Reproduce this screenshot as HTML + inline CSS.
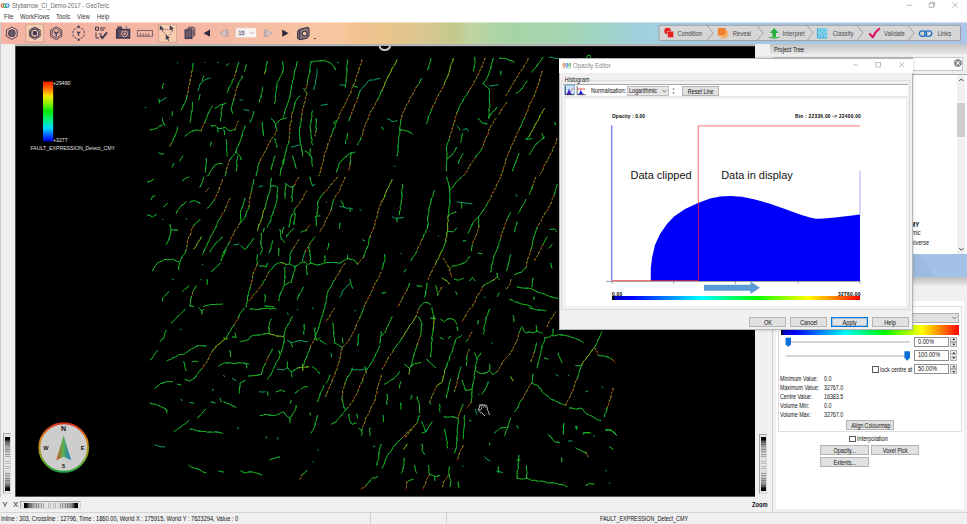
<!DOCTYPE html>
<html><head><meta charset="utf-8"><title>Stybarrow_CI_Demo-2017 - GeoTeric</title>
<style>
html,body{margin:0;padding:0;background:#f0f0f0;}
body{width:967px;height:524px;overflow:hidden;position:relative;font-family:"Liberation Sans","DejaVu Sans",sans-serif;color:#000;}
.a{position:absolute;box-sizing:border-box;}
.t{position:absolute;white-space:nowrap;line-height:1;font-size:5.6px;color:#111;transform-origin:0 0;}
.btn{position:absolute;background:#e1e1e1;border:1px solid #b4b4b4;box-sizing:border-box;text-align:center;font-size:5.6px;color:#111;white-space:nowrap;}
.spin{position:absolute;background:#fff;border:1px solid #8e8e8e;box-sizing:border-box;font-size:5.6px;color:#111;white-space:nowrap;}
svg{position:absolute;left:0;top:0;overflow:visible;}
</style></head>
<body>
<div class="a" style="left:0px;top:0px;width:967px;height:22px;background:#fff;"></div>
<svg width="12" height="11" viewBox="0 0 12 11"><g stroke-width="1.1" fill="#fff"><circle cx="2.9" cy="5.5" r="1.7" stroke="#f04a28"/><circle cx="5.1" cy="5.7" r="1.7" stroke="#38b838"/><circle cx="7.3" cy="5.5" r="1.7" stroke="#1a80d8"/></g></svg>
<div class="t" style="left:11.8px;top:3.06px;font-size:7.08px;color:#6a6a6a;transform:scaleX(0.820);">Stybarrow_CI_Demo-2017 - GeoTeric</div>
<div class="t" style="left:3.6px;top:13.14px;font-size:7.32px;color:#333;transform:scaleX(0.820);">File</div>
<div class="t" style="left:20px;top:13.14px;font-size:7.32px;color:#333;transform:scaleX(0.820);">WorkFlows</div>
<div class="t" style="left:56px;top:13.14px;font-size:7.32px;color:#333;transform:scaleX(0.820);">Tools</div>
<div class="t" style="left:77px;top:13.14px;font-size:7.32px;color:#333;transform:scaleX(0.820);">View</div>
<div class="t" style="left:96.6px;top:13.14px;font-size:7.32px;color:#333;transform:scaleX(0.820);">Help</div>
<svg width="967" height="12" viewBox="0 0 967 12"><g stroke="#858585" stroke-width="0.55" fill="none"><path d="M906.5,5.3h5.6"/><rect x="929.2" y="3.2" width="4.2" height="4.2"/><path d="M930.4,3.2v-1h4.2v4.2h-1.2"/><path d="M952.5,2.6l5.2,5.2M957.7,2.6l-5.2,5.2"/></g></svg>
<div class="a" style="left:0px;top:22px;width:967px;height:22.3px;background:linear-gradient(90deg,#f4b3a3 0px,#f5b8a4 213px,#f7c2a2 300px,#f8c8a0 340px,#f4c291 352px,#e8c48c 390px,#d8c890 425px,#c3c98b 456px,#c0d4a0 470px,#a8d4a4 503px,#a4d4b0 560px,#a0d4c4 600px,#a0d0dc 636px,#a2cfe4 680px,#a8c8e8 780px,#acc4e8 967px);"></div>
<div class="a" style="left:0px;top:22px;width:967px;height:1px;background:rgba(255,255,255,0.45);"></div>
<div class="a" style="left:0px;top:44.2px;width:967px;height:1.9px;background:#ececec;"></div>
<div class="a" style="left:15.3px;top:44.1px;width:739.8px;height:2px;background:#b6b6b6;"></div>
<svg width="967" height="46" viewBox="0 0 967 46">
<rect x="26" y="24.2" width="17.4" height="17.8" fill="#fbd3b4" fill-opacity="0.75" stroke="#7a6a5a" stroke-opacity="0.55" stroke-width="0.5"/>
<rect x="158.8" y="24.2" width="17.6" height="17.8" fill="#fbd3b4" fill-opacity="0.75" stroke="#7a6a5a" stroke-opacity="0.55" stroke-width="0.5"/>
<g fill="none" stroke="#3b3850" stroke-width="0.9">
<polygon points="11.8,27.0 17.2,30.1 17.2,36.3 11.8,39.4 6.4,36.3 6.4,30.1"/>
<circle cx="11.8" cy="33.2" r="3.4" fill="#3b3850" fill-opacity="0.75"/>
<polygon points="34.8,27.0 40.2,30.1 40.2,36.3 34.8,39.4 29.4,36.3 29.4,30.1"/>
<circle cx="34.8" cy="33.2" r="4.2" stroke-width="1.4"/>
<rect x="33.2" y="31.6" width="3.2" height="3.2" fill="#3b3850"/>
<polygon points="56.2,26.8 61.7,30.0 61.7,36.4 56.2,39.6 50.7,36.4 50.7,30.0"/>
<polygon points="56.2,28.6 60.2,30.9 60.2,35.5 56.2,37.8 52.2,35.5 52.2,30.9" stroke-width="0.7"/>
<path d="M53.8,31.4l2.4,2.2l2.4,-2.2M56.2,33.6v3" stroke-width="1.3"/>
<polygon points="78.6,26.8 84.1,30.0 84.1,36.4 78.6,39.6 73.1,36.4 73.1,30.0" stroke-dasharray="2.2 1.4"/>
<path d="M76.9,31.6l1.7,1.8l1.7,-1.8M78.6,33.4v2.6" stroke-width="1.1"/>
<circle cx="78.6" cy="26.6" r="0.7" fill="#3b3850"/><circle cx="78.6" cy="39.9" r="0.7" fill="#3b3850"/>
<path d="M95.5,27.2h3v3h-3zM100,28h5.5M100,30h4M96,32.5v5.5h3.2M99,34h3" stroke-width="1"/>
<path d="M100.2,35.6l2.2,2.4l4.6,-5.6" stroke-width="1.9"/>
<path d="M116.6,29.4h13v8.6h-13zM118.2,29.2v-2h3v2" stroke-width="1.3" fill="#3b3850" fill-opacity="0.8"/>
<circle cx="124.6" cy="33.8" r="2.9" stroke-width="1" stroke="#f4b5a3" fill="#3b3850"/><circle cx="124.6" cy="33.8" r="1.3" stroke="none" fill="#f4b5a3"/>
<path d="M117.6,31v6" stroke-width="1.4"/>
<path d="M125.8,26.4l0.8,1.2l0.8,-1.2" stroke-width="0.6"/>
<rect x="137.4" y="30.6" width="15.2" height="5.6" stroke-width="0.8" stroke-opacity="0.8"/>
<path d="M140.5,36v-2.6M143.2,36v-2.6M145.9,36v-2.6M148.6,36v-2.6" stroke-width="0.7"/>
<path d="M162.5,29.5h9M162.8,30.5l4.4,6.5M172.5,30.5l-4,6" stroke-width="0.6" stroke-dasharray="1.2 1"/>
<path d="M159.8,25.2l0,5.4l1.4,-1.3l1.1,2.3l0.9,-0.5l-1.1,-2.2l1.9,-0.2z" fill="#3b3850" stroke="none"/>
<path d="M169.8,25.2l0,5.4l1.4,-1.3l1.1,2.3l0.9,-0.5l-1.1,-2.2l1.9,-0.2z" fill="#3b3850" stroke="none"/>
<path d="M165.8,34.6l0,5.4l1.4,-1.3l1.1,2.3l0.9,-0.5l-1.1,-2.2l1.9,-0.2z" fill="#3b3850" stroke="none"/>
<path d="M188.6,27.2h5.2l1,1v7.6" stroke-width="0.9"/><path d="M187.2,28.4h5.2l1,1v7.6" stroke-width="0.9"/>
<rect x="185" y="29.8" width="7" height="8.8" fill="#3b3850" fill-opacity="0.85" stroke-width="0.9"/>
<path d="M186.2,32h4.6M186.2,34h4.6M186.2,36h4.6" stroke="#f4b5a3" stroke-width="0.5" stroke-dasharray="0.8 0.5"/>
</g>
<path d="M210,29.6v7.2l-6.4,-3.6z" fill="#2d2a3e"/>
<path d="M226.4,29.4v7.6l-6.4,-3.8z" fill="#d4c4c8" stroke="#9a939c" stroke-width="0.6"/><path d="M228,29.4v7.6" stroke="#a9a0aa" stroke-width="1"/>
<rect x="235.8" y="27.9" width="20.5" height="9.7" fill="#fbf4f2" stroke="#d8c8c4" stroke-width="0.5"/>
<rect x="237.4" y="29.2" width="8" height="7" fill="#e6e4ea"/>
<text x="238.6" y="35" font-family="Liberation Sans, sans-serif" font-size="5.4" fill="#333">15</text>
<path d="M250.2,32l2,2l2,-2" fill="none" stroke="#888" stroke-width="0.6"/>
<path d="M265.8,29.4v7.6l6.4,-3.8z" fill="#d4c4c8" stroke="#9a939c" stroke-width="0.6"/><path d="M264.4,29.4v7.6" stroke="#a9a0aa" stroke-width="1"/>
<path d="M282.2,29.6v7.2l6.4,-3.6z" fill="#2d2a3e"/>
<g fill="none" stroke="#3b3850" stroke-width="1.1"><path d="M297.6,31.4l2.4,-2.2l7.6,-1.8l1.4,1.2v7l-2.2,2.6l-7,1.4l-2.2,-1.4z" fill="#3b3850" fill-opacity="0.55"/><circle cx="304.6" cy="33.6" r="2.4" fill="#f6c3a4"/><path d="M299.6,30v8"/></g>
<path d="M313.8,38h2.2l-1.1,1.3z" fill="#222"/>
<path d="M660,25.3 h299.5 a1,1 0 0 1 1,1 v13.3 a1,1 0 0 1 -1,1 h-299.5 a1,1 0 0 1 -1,-1 v-13.3 a1,1 0 0 1 1,-1z" fill="#d6d6d6" stroke="#8c8c8c" stroke-width="0.7"/>
<path d="M707,25.3 l6,7.65 l-6,7.65" fill="none" stroke="#8c8c8c" stroke-width="0.7"/>
<path d="M757,25.3 l6,7.65 l-6,7.65" fill="none" stroke="#8c8c8c" stroke-width="0.7"/>
<path d="M807,25.3 l6,7.65 l-6,7.65" fill="none" stroke="#8c8c8c" stroke-width="0.7"/>
<path d="M857,25.3 l6,7.65 l-6,7.65" fill="none" stroke="#8c8c8c" stroke-width="0.7"/>
<path d="M908,25.3 l6,7.65 l-6,7.65" fill="none" stroke="#8c8c8c" stroke-width="0.7"/>
<circle cx="667.6" cy="31" r="3.3" fill="#e8201c"/><rect x="667.6" y="31.2" width="6" height="6.4" fill="#e8201c" stroke="#d6d6d6" stroke-width="0.5"/>
<path d="M720.6,30.6h7.6v5.4l-2.4,2.4h-5.2z" fill="#f6b070"/><path d="M717.9,28h7.8v5.2l-2.2,2.4h-5.6z" fill="#f08030"/>
<path d="M774.2,28l4.4,5h-2.6v4.6h-3.6v-4.6h-2.6z" fill="#28b040"/><path d="M768.8,37.2q5.4,2.2 10.8,0" fill="none" stroke="#28b040" stroke-width="1"/>
<rect x="817" y="28" width="10.4" height="10" fill="#7ed0ea"/><path d="M817.4,28v10h10" fill="none" stroke="#28a8d0" stroke-width="0.9"/><g fill="#2090c0"><rect x="820" y="30" width="1" height="1"/><rect x="823.6" y="29.6" width="1" height="1"/><rect x="821.8" y="32.6" width="1" height="1"/><rect x="824.8" y="33.4" width="1" height="1"/><rect x="819.6" y="34.8" width="1" height="1"/><rect x="823" y="35.6" width="1" height="1"/></g>
<path d="M869.4,33.4l3.4,3.8q2.4,-5.6 7,-8.8" fill="none" stroke="#d81868" stroke-width="2.2" stroke-linejoin="round"/>
<g fill="none" stroke="#1a6fc0" stroke-width="1.3"><ellipse cx="923" cy="33.6" rx="3.6" ry="2.7"/><ellipse cx="928.2" cy="33.6" rx="3.6" ry="2.7"/></g>
<text transform="translate(677.4,35.7) scale(0.83,1)" font-family="Liberation Sans, sans-serif" font-size="7.1" fill="#4a4a4a">Condition</text>
<text transform="translate(732.8,35.7) scale(0.83,1)" font-family="Liberation Sans, sans-serif" font-size="7.1" fill="#4a4a4a">Reveal</text>
<text transform="translate(782.6,35.7) scale(0.83,1)" font-family="Liberation Sans, sans-serif" font-size="7.1" fill="#4a4a4a">Interpret</text>
<text transform="translate(832.8,35.7) scale(0.83,1)" font-family="Liberation Sans, sans-serif" font-size="7.1" fill="#4a4a4a">Classify</text>
<text transform="translate(884,35.7) scale(0.83,1)" font-family="Liberation Sans, sans-serif" font-size="7.1" fill="#4a4a4a">Validate</text>
<text transform="translate(937.4,35.7) scale(0.83,1)" font-family="Liberation Sans, sans-serif" font-size="7.1" fill="#4a4a4a">Links</text>
</svg>
<div class="a" style="left:0px;top:46px;width:15.5px;height:466px;background:#f0f0f0;"></div>
<div class="a" style="left:0px;top:22px;width:0.8px;height:490px;background:#cacaca;"></div>
<svg width="967" height="524" viewBox="0 0 967 524"><rect x="15.3" y="46.15" width="739.8" height="450.5" fill="#000"/></svg>
<svg width="967" height="524" viewBox="0 0 967 524"><defs><clipPath id="vpc"><rect x="15.3" y="46.15" width="739.8" height="450.5"/></clipPath></defs><g clip-path="url(#vpc)">
<path d="M193.0,63.5 192.9,66.0 192.7,68.6 192.0,71.0 M187.0,96.0 186.4,99.1 185.3,102.0 183.8,104.8 182.6,107.3 181.2,109.8 M203.8,76.0 202.7,78.5 202.0,81.0 M163.8,83.5 162.6,85.9 162.5,88.5 M158.8,99.0 159.5,103.0 M145.5,107.2 145.8,107.8 M172.5,111.5 172.0,116.0 M162.5,118.5 162.6,121.1 163.8,123.5 162.0,125.4 159.4,126.2 157.5,128.0 155.1,128.8 152.6,129.5 150.0,129.8 M163.8,123.5 165.0,125.5 M177.5,127.2 177.1,130.3 176.0,133.1 175.0,136.0 173.4,138.3 172.8,141.2 171.2,143.5 170.0,146.0 M185.0,136.0 187.6,134.2 190.0,132.2 193.1,130.9 196.2,129.8 198.7,130.4 201.2,131.0 M205.0,122.2 205.6,119.6 207.1,117.3 207.7,114.7 208.8,112.2 209.8,110.1 211.3,108.1 212.5,106.0 M192.5,102.2 192.4,105.2 192.4,108.1 192.0,111.0 191.2,113.8 190.8,116.6 190.8,119.5 190.0,122.2 M200.0,94.8 199.3,97.2 198.8,99.8 M238.8,62.2 237.9,65.2 236.7,68.0 236.2,71.0 M233.8,78.5 232.2,80.6 231.9,83.3 230.5,85.4 229.0,87.5 228.5,90.1 227.0,92.2 M246.2,64.8 245.4,67.9 244.5,71.0 M242.5,76.0 241.7,78.7 239.8,80.9 238.5,83.4 237.5,86.0 M233.8,99.8 232.8,102.6 232.0,105.6 231.2,108.5 231.9,111.0 232.5,113.5 M228.8,63.5 226.2,66.0 M215.0,108.5 217.7,106.9 220.0,104.8 223.3,104.3 226.2,103.0 M222.5,104.8 222.1,107.3 221.5,109.7 221.2,112.2 221.5,115.2 220.5,118.1 220.5,121.0 M211.2,126.0 215.0,125.5 216.8,127.1 218.8,128.5 222.0,128.4 225.0,127.2 227.3,129.4 230.0,131.0 232.4,130.1 235.0,129.8 M217.5,128.5 218.0,132.2 M223.8,129.8 224.6,132.2 224.5,134.8 M253.8,111.5 253.3,114.4 252.5,117.1 251.2,119.8 250.0,122.2 M245.0,126.0 244.6,128.7 243.1,130.9 242.5,133.5 241.9,136.4 240.9,139.2 239.8,142.0 238.8,144.8 237.1,147.7 236.2,151.0 M236.2,151.0 235.1,153.5 233.2,155.4 231.5,157.5 230.0,159.8 M226.2,171.0 225.9,173.6 225.0,176.0 M236.2,152.2 238.2,154.1 240.0,156.0 241.2,159.8 M237.5,156.0 237.4,158.5 236.7,161.0 236.4,163.5 237.0,166.0 236.8,168.5 236.2,171.0 M211.2,142.2 210.5,146.0 M226.2,139.8 226.7,142.4 226.8,145.2 226.6,147.9 226.7,150.6 227.1,153.3 227.0,156.0 M206.2,158.5 206.6,161.3 206.0,164.0 205.9,166.8 205.6,169.5 205.5,172.2 M222.5,163.5 219.9,163.4 217.5,164.1 215.0,164.8 213.5,167.0 211.9,169.2 210.3,171.4 209.4,174.0 207.5,176.0 M158.8,153.0 161.2,153.9 163.8,154.0 M183.0,156.0 181.2,158.3 180.0,161.0 M173.8,163.5 172.0,167.2 M267.5,61.5 266.5,64.2 266.0,66.9 265.8,69.8 M282.5,61.5 283.1,65.0 283.5,68.5 282.9,70.9 282.4,73.3 281.2,75.5 279.7,77.7 278.8,80.3 277.0,82.2 277.1,85.1 276.6,87.9 276.2,90.7 275.5,93.5 275.4,96.0 275.5,98.5 275.3,101.1 274.5,103.5 M262.5,87.2 262.4,89.8 261.9,92.3 261.1,94.8 261.0,97.4 259.6,99.7 259.5,102.2 M297.5,61.5 296.6,63.8 296.4,66.4 295.5,68.7 294.5,71.0 294.3,73.5 293.8,76.0 293.7,78.6 292.5,80.9 292.5,83.5 291.3,86.1 291.3,88.9 290.6,91.6 290.4,94.4 289.8,97.1 288.8,99.8 288.0,102.6 287.1,105.5 285.6,108.1 285.0,111.0 284.4,114.2 283.0,117.2 M271.2,118.5 273.8,120.9 275.5,124.0 275.8,127.0 277.0,129.8 M286.2,118.0 283.1,118.8 280.0,119.8 278.0,122.2 275.5,124.0 M258.8,163.5 257.9,165.9 257.9,168.5 257.5,171.1 256.4,173.4 256.2,176.0 M262.5,122.2 262.2,125.0 262.6,127.8 262.9,130.5 263.2,133.3 263.8,136.0 M275.0,138.5 275.4,141.5 276.6,144.3 277.0,147.2 M311.2,61.5 314.2,61.4 317.1,61.0 320.0,61.0 322.5,60.6 325.0,60.8 327.5,61.5 330.1,62.9 332.5,64.8 334.2,67.1 335.5,69.8 M311.2,61.5 310.6,64.6 309.9,67.8 310.0,71.0 309.6,73.5 308.5,75.9 308.0,78.4 307.5,80.9 307.5,83.5 M303.8,88.5 305.4,91.0 307.0,93.5 M301.2,118.5 301.3,121.0 300.2,123.5 300.4,126.0 299.5,128.5 299.5,131.0 299.1,133.5 299.9,136.0 300.0,138.5 300.0,141.0 M300.0,96.0 297.9,97.8 296.5,100.0 295.0,102.2 294.7,104.8 294.1,107.3 293.5,109.8 292.5,112.2 M288.8,141.0 288.6,143.6 287.0,145.9 286.7,148.5 286.2,151.0 285.2,153.4 285.0,156.0 284.2,158.5 282.9,160.9 282.5,163.5 M312.5,111.0 311.7,113.4 312.0,116.1 311.5,118.5 311.1,121.0 310.7,123.5 310.0,126.0 310.2,128.8 310.9,131.6 311.0,134.4 311.2,137.2 312.1,139.7 311.6,142.3 312.5,144.8 M316.2,118.5 316.3,121.0 316.2,123.5 315.8,126.0 316.3,128.5 316.2,131.0 M300.0,141.0 300.5,143.5 301.5,145.9 301.6,148.5 302.0,151.0 302.6,153.5 302.5,156.0 M305.0,151.0 307.4,152.2 309.0,154.6 311.2,156.0 311.9,158.5 311.9,161.0 311.9,163.5 312.5,166.0 M310.5,148.5 310.1,151.0 310.0,153.5 309.5,156.0 M292.5,156.0 293.5,159.1 294.5,162.2 295.3,165.4 296.2,168.5 M275.0,156.0 273.9,158.4 273.7,161.1 272.5,163.5 271.8,166.6 271.2,169.8 M284.5,159.8 283.7,162.8 282.6,165.7 281.2,168.5 280.5,171.0 280.4,173.5 280.0,176.0 M347.5,59.8 347.3,62.6 347.0,65.4 346.7,68.2 347.0,71.0 346.8,73.7 346.4,76.4 346.2,79.1 346.0,81.8 345.5,84.5 345.5,87.2 M352.5,85.5 355.0,86.4 357.5,87.2 M337.5,119.8 336.3,122.2 335.3,124.7 334.9,127.4 333.1,129.6 332.5,132.2 331.2,136.0 M360.0,91.0 358.9,94.1 358.0,97.2 M350.0,117.2 348.8,121.0 M381.2,91.0 380.2,94.0 379.2,97.0 377.5,99.8 M361.2,137.2 360.4,140.0 358.6,142.2 357.5,144.8 M347.5,133.5 347.1,136.0 347.0,138.6 345.5,140.9 345.5,143.5 M355.0,152.2 352.5,152.9 349.9,153.6 347.5,154.8 345.9,156.9 343.5,158.2 342.2,160.7 340.0,162.2 338.7,164.6 338.2,167.3 337.4,169.8 336.2,172.2 M351.2,152.2 350.9,155.1 350.2,157.8 350.6,160.7 350.0,163.5 M335.0,121.0 333.8,123.5 M177.5,63.0 177.8,63.2 M204.5,62.5 204.8,62.8 M218.0,62.5 218.5,62.5 M586.5,58.5 587.5,55.5 590.2,55.5 591.0,58.5 M430.8,58.5 430.3,61.4 429.3,64.2 428.8,67.1 427.5,69.8 M421.5,78.5 420.2,81.1 419.0,83.8 417.0,86.0 M400.8,119.8 400.6,122.6 400.2,125.4 399.7,128.2 400.0,131.0 399.8,133.5 398.9,135.9 398.7,138.5 398.5,141.0 398.2,143.5 398.1,146.0 397.9,148.5 398.0,151.0 397.7,153.5 397.0,156.0 M400.0,129.8 403.5,130.1 407.0,131.0 409.9,132.2 412.5,134.0 M432.0,108.5 430.9,111.5 429.6,114.4 428.2,117.2 427.9,120.5 426.5,123.5 M474.5,57.2 474.9,60.4 475.0,63.5 474.4,66.0 473.8,68.5 473.2,71.0 M468.2,92.2 466.7,94.7 464.9,97.1 463.4,99.7 462.0,102.2 460.5,104.6 459.1,107.1 458.4,109.8 457.0,112.2 M449.5,138.5 448.4,141.4 447.3,144.2 446.5,147.2 446.3,150.1 447.1,152.9 446.8,155.7 447.0,158.5 446.9,161.0 446.4,163.5 446.4,166.0 446.2,168.5 446.5,171.0 M493.2,58.5 492.5,61.0 491.6,63.4 491.2,66.0 490.8,68.5 489.6,70.7 489.0,73.1 488.2,75.5 487.1,77.7 485.8,79.8 483.2,83.5 M483.2,83.5 485.4,85.5 487.7,87.4 489.5,89.8 M489.5,89.8 489.4,92.5 489.4,95.2 489.3,98.0 489.5,100.8 489.5,103.5 490.0,106.0 489.0,108.5 489.0,111.0 489.2,113.5 489.0,116.0 489.0,118.5 M499.5,58.0 502.0,58.5 504.6,58.2 507.0,59.0 509.4,60.3 512.1,60.9 514.5,62.2 M500.8,71.0 500.8,74.8 M543.2,57.2 541.5,59.2 540.3,61.7 538.2,63.5 537.0,65.9 535.3,68.0 533.3,69.9 532.0,72.2 M527.0,81.0 525.6,83.3 523.8,85.3 522.7,87.9 520.8,89.8 518.5,92.0 515.8,93.5 M524.5,118.5 522.8,120.8 522.0,123.5 521.0,126.1 519.5,128.5 M497.0,107.2 494.9,110.1 492.0,112.2 490.6,115.1 488.2,117.2 M478.2,118.5 480.3,120.6 482.0,123.0 484.5,123.3 487.0,124.0 M482.0,148.5 480.6,150.8 479.0,152.9 476.9,154.7 475.8,157.2 M529.5,136.0 527.0,138.5 M525.8,139.0 528.9,139.2 532.0,138.5 M544.5,137.2 542.2,138.6 540.2,140.5 538.2,142.2 536.2,144.0 534.5,146.1 533.2,148.5 532.0,150.6 530.5,152.5 529.5,154.8 M542.0,133.5 543.1,136.1 543.2,139.0 M519.0,153.5 517.7,156.3 516.9,159.4 515.8,162.2 514.4,165.1 513.4,168.0 512.5,171.0 M457.0,126.0 458.7,127.7 460.0,129.8 M462.5,133.5 461.9,136.4 461.4,139.4 460.8,142.2 M456.5,147.2 455.3,149.9 453.8,152.4 452.0,154.8 450.0,156.9 447.5,158.5 M463.2,153.5 461.6,155.4 460.8,157.7 459.5,159.8 458.2,163.5 M394.5,166.0 394.8,166.5 M554.5,122.2 555.8,124.8 M382.0,127.2 383.2,129.8 M147.5,182.0 150.9,181.0 153.8,179.0 M151.2,199.5 152.5,196.5 155.0,195.8 M163.8,207.0 165.6,205.1 167.5,203.2 M147.5,215.0 150.1,215.6 152.5,217.0 156.2,214.5 M182.5,180.8 184.4,179.2 186.4,177.9 188.8,177.0 M203.8,177.0 203.0,179.6 202.3,182.2 201.2,184.6 200.0,187.0 M213.8,200.8 212.2,202.6 210.7,204.6 209.2,206.5 207.5,208.2 M176.2,213.2 177.5,210.5 179.4,208.1 181.2,205.8 184.1,204.0 186.2,201.5 M190.0,202.0 192.4,201.0 195.0,200.8 197.5,202.0 200.0,203.2 M170.0,224.5 170.5,227.0 171.2,229.5 174.3,230.1 177.5,230.0 M171.2,229.5 170.9,232.1 170.2,234.6 169.6,237.1 168.8,239.5 167.6,242.0 166.2,244.5 M200.0,219.5 198.0,221.6 195.5,223.3 193.8,225.8 M186.2,249.5 185.5,252.2 183.9,254.6 182.1,256.8 180.9,259.3 180.0,262.0 179.2,264.4 178.7,266.9 178.8,269.5 M152.5,270.8 153.9,268.1 155.5,265.5 157.5,263.2 159.8,261.7 162.5,260.8 165.0,259.5 167.5,259.5 170.0,259.7 172.5,259.0 175.5,260.7 178.8,262.0 M220.0,218.2 218.3,220.5 217.4,223.2 216.4,225.8 215.4,228.4 213.8,230.8 212.7,233.4 211.1,235.7 209.8,238.2 209.1,240.9 207.5,243.2 206.9,245.7 205.5,247.7 204.4,250.0 203.6,252.3 202.5,254.5 M222.5,237.0 220.8,239.0 218.8,240.8 216.5,242.3 215.0,244.5 213.2,246.9 211.3,249.3 210.0,252.0 M245.0,198.2 244.1,201.1 243.4,204.0 242.5,206.8 241.2,209.5 240.5,212.2 240.5,215.0 240.7,217.8 240.8,220.5 240.0,223.2 M240.0,223.2 241.7,221.2 243.5,219.2 245.0,217.0 245.9,214.5 246.6,211.9 248.0,209.6 248.8,207.0 M251.2,192.0 251.9,189.5 251.9,186.9 253.1,184.6 253.5,182.1 253.8,179.5 M228.8,243.2 227.8,245.6 226.0,247.5 225.2,249.9 223.8,252.0 222.4,254.8 222.1,257.8 221.2,260.8 M220.0,263.2 217.7,266.0 215.0,268.2 213.3,270.1 211.2,271.5 M241.2,245.8 243.0,247.8 245.0,249.5 247.0,248.0 248.0,245.6 250.0,244.0 251.8,241.1 253.8,238.2 M271.2,178.2 271.3,180.8 270.2,183.2 270.5,185.8 273.4,185.7 276.2,186.5 M270.5,185.8 270.4,188.6 269.8,191.4 268.8,194.0 267.7,196.7 267.5,199.5 266.3,202.3 265.6,205.3 265.0,208.2 M277.5,187.0 277.9,189.5 277.1,192.0 277.3,194.5 277.2,197.0 277.0,199.5 276.4,202.1 275.7,204.6 275.1,207.2 273.8,209.5 273.2,212.1 272.4,214.5 271.0,216.9 271.1,219.6 270.0,222.0 268.3,224.3 267.5,227.0 M285.0,183.2 287.7,184.9 290.0,187.0 293.8,186.5 M285.8,184.5 285.8,187.3 285.1,190.0 284.9,192.7 285.2,195.5 285.0,198.2 M292.5,187.0 292.9,189.5 292.4,192.0 292.4,194.5 291.7,197.0 292.4,199.5 292.0,202.0 M296.2,207.0 294.6,209.3 294.0,212.1 292.3,214.4 291.2,217.0 290.2,219.4 290.2,222.0 289.6,224.6 288.8,227.0 M310.0,177.0 310.3,180.1 311.5,182.9 312.5,185.8 M322.5,194.5 320.6,196.8 319.4,199.4 318.0,202.0 317.3,204.5 318.1,207.0 317.7,209.5 317.2,212.0 317.0,214.5 316.3,217.3 316.1,220.1 316.6,222.9 316.2,225.8 M333.8,199.5 332.8,201.9 332.2,204.4 331.8,207.0 331.2,209.5 M315.0,217.0 317.4,216.1 320.0,215.8 M301.2,232.0 303.6,230.9 306.2,230.8 M280.0,229.5 280.6,232.4 280.3,235.4 281.2,238.2 282.8,240.7 285.0,242.5 M283.8,227.0 282.6,230.0 282.5,233.2 M293.8,228.2 291.4,230.9 288.8,233.2 286.2,237.0 M295.0,213.2 295.1,216.1 294.8,218.9 294.1,221.7 293.8,224.5 M315.0,237.0 313.2,238.9 311.7,241.2 310.0,243.2 M308.8,245.8 309.0,248.9 310.0,252.0 310.0,254.8 310.8,257.6 310.2,260.5 310.8,263.2 M292.5,249.5 291.0,251.9 290.0,254.5 290.2,257.4 289.9,260.3 289.5,263.2 M261.2,233.2 261.4,236.2 261.3,239.1 260.8,242.0 260.9,244.6 261.8,247.0 262.5,249.5 261.4,252.1 260.0,254.5 M264.2,228.2 263.2,232.0 M272.5,240.8 272.2,243.3 271.1,245.7 271.2,248.2 270.0,250.7 268.8,253.2 M278.8,248.2 279.0,250.8 278.4,253.2 278.8,255.8 M257.5,254.5 257.2,257.0 256.7,259.5 257.6,262.0 257.0,264.5 M250.0,287.0 249.8,289.6 248.5,291.9 248.4,294.5 247.5,296.9 247.5,299.5 247.2,302.0 246.3,304.4 246.2,307.0 M259.5,265.8 262.9,266.1 266.2,266.5 M267.5,263.2 266.2,267.0 M273.8,265.8 277.5,263.2 281.2,262.5 M286.2,264.5 290.0,264.0 292.4,265.5 295.0,266.5 297.8,265.3 300.0,263.2 302.4,262.2 305.0,262.0 307.5,264.5 311.2,263.2 314.3,264.2 317.5,265.0 320.7,264.3 323.8,263.2 326.8,262.6 330.0,262.5 332.5,262.5 335.0,262.5 337.5,262.7 340.0,263.2 M340.0,263.2 342.4,261.4 345.1,260.0 347.5,258.2 349.9,259.2 352.6,259.6 355.0,260.8 357.5,264.5 M347.5,255.0 347.5,259.0 M363.8,257.0 364.4,254.4 365.4,251.9 366.3,249.4 367.5,247.0 368.4,244.6 368.8,242.0 368.9,239.4 370.0,237.0 M273.8,266.5 272.2,268.5 270.4,270.1 268.8,272.0 M265.0,279.5 263.4,281.8 262.5,284.5 M285.0,267.0 284.6,269.5 285.1,272.0 284.6,274.5 285.0,277.0 284.9,279.5 284.2,282.0 284.5,284.5 M284.5,285.0 286.7,284.0 288.8,282.7 291.2,282.0 M295.0,267.0 294.9,270.0 293.6,272.8 293.0,275.8 292.0,278.8 291.2,282.0 M284.5,285.0 283.0,287.2 282.7,289.9 281.0,292.1 280.0,294.5 M306.2,265.0 306.6,268.2 306.7,271.3 307.0,274.5 M325.0,255.8 325.1,258.9 324.5,262.0 M328.8,243.2 328.4,246.4 327.5,249.5 M335.0,279.5 333.0,281.7 332.2,284.7 330.7,287.2 328.8,289.5 327.7,291.9 327.0,294.4 326.9,297.0 326.2,299.5 326.3,302.1 325.0,304.4 325.0,307.0 M350.0,279.5 350.7,282.0 351.2,284.5 352.5,288.2 M341.2,200.8 342.9,203.7 343.8,207.0 M350.0,209.0 350.5,211.5 M340.0,223.2 339.7,225.7 339.5,228.2 M303.8,287.0 302.3,288.9 301.7,291.4 300.0,293.2 298.4,296.2 297.5,299.5 M265.0,294.5 265.4,297.0 264.9,299.5 265.0,302.0 M280.0,294.5 279.3,297.6 278.8,300.8 M265.0,305.8 267.5,306.3 270.0,306.5 273.8,307.0 M190.0,305.8 193.8,306.5 M203.8,306.5 206.2,305.6 208.7,305.1 211.2,304.5 214.1,304.5 216.9,304.2 219.7,304.3 222.5,304.0 M196.2,285.8 195.1,287.9 193.8,290.0 192.5,292.0 M191.2,297.0 190.7,299.9 190.4,302.8 190.0,305.8 M188.8,285.8 186.9,287.9 184.4,289.4 182.5,291.5 M168.8,292.0 166.4,293.9 164.6,296.2 162.5,298.2 162.5,300.8 M172.5,279.0 173.2,280.0 M202.5,264.5 202.8,265.0 M201.2,279.5 201.5,280.0 M207.0,279.5 207.4,282.0 207.0,284.5 M162.5,219.5 163.0,219.5 M186.2,219.0 186.8,219.0 M226.2,249.5 225.0,252.0 224.1,254.7 222.5,257.0 M402.5,184.5 402.8,187.0 401.9,189.5 401.7,192.0 401.8,194.5 402.2,197.0 401.5,199.5 401.2,202.0 401.0,204.5 400.0,206.9 400.6,209.6 399.4,211.9 399.5,214.5 M397.0,218.2 397.0,222.0 M434.5,190.8 433.2,193.5 432.9,196.5 431.2,199.0 430.8,202.0 430.3,204.5 429.3,206.9 428.8,209.4 429.1,212.1 428.2,214.5 427.8,217.2 427.5,220.0 428.3,222.8 427.8,225.5 427.5,228.2 426.1,230.4 425.6,232.9 423.8,234.8 423.3,237.4 422.0,239.5 M417.0,250.8 415.7,253.4 414.1,255.9 412.3,258.2 410.8,260.8 M446.5,177.0 447.3,179.5 448.2,181.9 448.6,184.4 449.3,186.9 449.5,189.5 M462.0,177.0 459.8,178.5 458.1,180.6 456.1,182.3 454.5,184.5 453.1,186.8 450.9,188.5 449.5,190.8 M449.5,190.8 450.0,193.5 449.7,196.4 449.7,199.2 450.0,202.0 449.8,204.8 448.9,207.4 448.9,210.2 448.5,213.0 448.2,215.8 M445.8,242.0 444.4,244.9 443.4,247.9 442.0,250.8 M461.5,203.2 462.0,205.8 461.5,208.2 M448.2,216.5 449.8,214.5 452.0,213.2 455.8,212.0 M447.5,231.5 450.4,231.4 453.2,232.0 455.0,230.2 456.5,228.2 M463.2,240.8 465.8,240.8 M478.2,253.2 482.0,253.8 M488.2,202.0 486.8,204.6 485.5,207.2 483.7,209.6 482.0,212.0 480.4,214.7 478.2,217.0 M478.2,217.0 476.3,219.0 474.3,221.1 472.5,223.2 471.7,225.9 470.2,228.2 469.3,230.8 468.2,233.2 M478.2,217.0 478.9,219.9 478.3,222.9 479.0,225.8 M472.5,244.5 471.7,247.6 471.5,250.8 M469.5,256.5 467.7,259.3 465.8,262.0 462.7,263.5 459.5,264.5 456.5,265.7 453.2,265.8 451.3,267.3 449.5,269.0 M454.5,279.0 456.9,280.0 459.5,280.0 463.2,278.2 M469.5,280.8 472.5,277.5 475.0,280.8 M435.8,285.8 436.8,288.2 437.0,290.9 438.2,293.2 M438.2,293.2 437.5,295.8 M455.8,292.0 457.0,294.5 M532.0,187.0 531.6,189.7 530.0,191.9 529.5,194.5 M525.8,199.5 525.0,202.2 523.2,204.5 522.0,207.0 520.3,208.8 519.8,211.4 518.2,213.2 M557.0,184.5 556.7,187.1 555.6,189.5 555.1,192.0 554.5,194.5 M537.0,228.2 535.8,231.0 535.2,233.9 533.9,236.6 533.2,239.5 532.7,242.0 532.3,244.6 531.8,247.1 530.8,249.5 M526.5,267.0 524.0,269.2 522.0,272.0 519.4,272.6 517.1,273.9 514.5,274.5 M510.8,212.0 509.4,214.5 508.3,217.0 507.0,219.5 M500.8,238.2 500.2,240.6 498.7,242.7 498.8,245.3 497.7,247.5 496.9,249.8 495.8,252.0 494.7,254.4 493.8,256.9 493.2,259.4 492.9,262.1 492.0,264.5 491.2,266.9 491.4,269.5 490.8,272.0 M517.0,222.0 516.7,224.6 515.3,226.9 515.0,229.5 514.5,232.0 M547.0,237.0 545.6,239.4 544.3,241.9 543.2,244.5 M550.0,229.5 554.5,229.0 557.0,232.0 M552.0,244.5 550.6,246.4 549.0,248.2 M510.8,254.5 509.9,256.9 509.4,259.5 509.1,262.1 508.2,264.5 507.7,267.7 506.5,270.8 M550.8,263.2 551.2,265.8 552.0,268.2 M497.0,273.2 497.5,277.0 499.5,279.5 M492.0,280.8 488.2,283.2 485.5,284.1 483.2,285.8 M533.2,278.2 532.6,281.1 532.3,284.1 532.0,287.0 M517.0,287.0 519.9,287.6 522.8,288.1 525.8,288.2 528.9,288.2 532.0,289.0 535.1,290.8 538.2,292.5 541.4,293.1 544.5,294.0 546.9,295.3 549.4,296.3 552.0,297.0 555.0,298.0 558.2,298.2 M509.5,299.5 512.2,299.9 514.4,301.6 517.0,302.0 519.4,303.3 521.8,304.1 524.5,304.5 527.1,304.9 529.6,305.9 532.0,307.0 M534.0,297.0 534.0,299.5 M409.5,283.2 408.6,286.5 407.0,289.5 M417.0,285.8 419.5,286.1 422.0,286.2 M427.0,283.2 426.8,285.8 426.6,288.3 425.8,290.8 425.6,294.0 424.5,297.0 M419.5,307.0 422.2,304.7 424.5,302.0 427.7,302.9 430.8,304.5 M384.5,254.5 384.9,257.0 385.0,259.5 384.2,262.0 383.2,264.5 383.1,267.1 382.0,269.5 M382.0,293.2 385.8,292.5 M499.0,293.2 497.5,296.5 M484.5,297.0 484.8,297.5 M438.2,235.8 438.5,236.0 M405.8,269.5 404.5,272.0 M400.8,253.2 401.0,253.5 M185.0,309.2 183.3,311.3 181.4,313.2 179.2,314.7 177.5,316.8 175.5,318.9 173.5,321.1 171.2,323.0 M198.8,308.0 202.0,311.0 203.8,309.2 M202.0,311.0 202.0,314.2 M166.2,330.5 164.9,332.8 164.6,335.5 163.8,338.0 161.6,339.6 160.0,341.8 M157.5,350.5 155.5,352.9 153.8,355.5 152.3,358.1 150.0,360.0 M206.2,346.0 203.7,345.9 201.2,345.7 198.8,345.5 196.1,346.5 193.8,348.2 191.2,349.2 189.0,350.5 187.1,352.0 185.0,353.5 182.6,354.5 179.9,354.4 177.5,355.5 175.6,357.1 173.2,357.7 171.2,359.2 167.0,360.5 M183.8,361.8 184.7,364.8 185.0,368.0 186.2,370.5 M192.0,361.8 194.8,361.2 197.5,361.8 M243.8,308.0 242.8,310.4 241.0,312.2 239.5,314.3 238.8,316.8 M233.8,325.5 231.8,327.8 230.7,330.7 228.8,333.0 227.5,335.5 226.2,338.0 M232.5,336.8 236.2,337.5 235.0,333.0 M201.2,369.2 199.4,371.3 197.9,373.5 196.3,375.6 195.0,378.0 192.4,379.4 190.0,381.0 187.4,380.3 185.0,379.2 M230.0,350.5 230.4,353.6 230.5,356.8 M218.8,366.0 221.8,364.1 225.0,362.5 227.5,363.2 230.0,362.5 232.5,363.7 235.0,363.5 237.5,362.8 240.0,362.8 242.5,363.0 245.7,363.4 248.8,364.2 M246.2,364.2 247.0,368.0 M155.0,388.0 157.8,386.2 160.0,383.8 163.1,382.8 166.2,381.8 169.4,381.6 172.5,381.8 M177.5,384.2 181.2,385.0 M150.0,403.0 152.4,404.1 155.1,404.1 157.5,405.0 160.6,406.5 163.8,408.0 167.5,410.5 M165.0,408.0 166.0,410.5 167.0,413.0 M181.2,399.2 182.0,400.5 M190.0,402.5 193.8,403.0 M212.5,389.2 213.2,390.5 M211.2,401.8 215.0,403.0 M220.0,398.0 221.2,401.8 M223.8,401.8 226.8,403.3 230.0,404.2 233.0,406.0 236.2,407.2 M205.5,409.2 203.3,411.6 201.2,414.2 199.5,416.2 197.5,418.0 M188.8,420.5 187.0,422.2 185.2,423.9 182.9,424.9 181.2,426.8 178.7,428.3 176.1,429.9 173.8,431.8 M190.0,429.2 192.6,429.3 195.0,430.1 197.4,430.9 200.0,431.0 202.5,431.5 205.1,431.4 207.5,432.2 210.0,432.0 212.5,432.3 215.0,431.8 217.6,432.1 220.1,432.6 222.5,433.5 M237.5,427.5 238.2,428.8 M240.0,341.8 242.5,341.0 245.1,340.8 247.5,340.0 249.7,338.3 251.2,336.0 254.1,335.3 257.0,335.0 260.0,335.0 262.9,334.2 265.8,333.8 268.8,333.5 M271.2,319.2 269.9,321.6 269.3,324.2 268.8,326.8 269.2,330.1 268.8,333.5 M292.5,316.8 290.8,318.7 290.4,321.3 288.9,323.4 287.5,325.5 286.0,327.8 285.2,330.4 284.5,333.0 284.1,335.5 284.2,338.0 284.3,340.5 283.8,343.0 282.9,345.5 282.7,348.1 281.8,350.6 280.9,353.0 280.0,355.5 279.2,358.2 277.6,360.5 276.0,362.9 275.0,365.5 273.6,368.3 272.5,371.3 271.2,374.2 269.3,376.7 267.5,379.2 M278.8,350.5 280.0,354.2 M272.5,349.2 271.3,351.4 270.3,353.6 268.8,355.5 M265.0,364.2 263.8,366.7 262.7,369.1 262.3,371.8 261.2,374.2 M248.8,376.0 251.9,375.8 255.0,375.5 258.2,375.1 261.2,374.2 M245.0,380.5 242.5,381.8 240.0,383.0 240.2,385.5 239.5,388.0 239.2,390.5 239.5,393.0 M267.5,391.8 268.0,395.5 M276.2,391.8 278.8,391.1 281.2,390.0 285.0,391.8 M295.0,393.0 297.1,391.8 298.8,390.0 M301.2,389.2 303.8,386.8 307.5,386.8 M290.0,341.8 291.6,344.1 292.5,346.8 M287.5,367.5 289.1,369.8 291.2,371.8 293.5,370.7 295.5,369.4 297.5,368.0 M291.2,371.8 291.7,374.2 292.0,376.8 M287.5,361.8 287.3,364.6 287.5,367.5 M312.5,366.8 316.2,369.2 317.8,371.7 320.0,373.5 M250.0,309.2 252.5,308.9 255.0,309.4 257.5,309.6 260.0,309.2 262.5,308.7 265.0,308.4 267.5,308.0 270.3,308.9 273.4,308.3 276.2,309.2 M304.2,324.2 304.1,326.7 304.4,329.3 303.6,331.7 303.8,334.2 M325.0,308.0 323.6,310.3 323.1,313.0 322.6,315.7 321.2,318.0 320.5,320.5 320.0,323.0 319.1,325.4 318.8,328.0 317.8,330.5 316.7,332.9 315.6,335.4 315.0,338.0 M310.0,348.0 309.4,350.6 307.9,352.9 307.3,355.5 306.2,358.0 304.7,360.8 304.1,364.0 302.5,366.8 M315.0,328.0 314.5,330.5 315.2,333.0 315.0,335.5 316.1,337.9 316.2,340.5 320.0,338.0 M320.0,340.5 322.2,341.5 324.2,342.9 326.2,344.2 M332.5,323.0 333.3,325.4 333.2,328.0 333.5,330.5 333.8,333.0 333.7,335.5 334.3,338.0 334.6,340.5 334.5,343.0 336.8,344.0 338.8,345.5 342.5,347.5 M342.5,338.0 342.5,340.5 343.0,343.0 M363.8,308.0 362.6,311.0 361.5,314.0 360.0,316.8 M358.8,334.2 358.2,337.0 358.4,339.9 358.1,342.7 357.5,345.5 M381.2,331.8 381.2,334.6 380.6,337.4 380.4,340.2 380.0,343.0 M380.0,345.5 378.9,347.7 377.8,349.9 377.1,352.3 375.6,354.3 375.0,356.8 373.4,358.7 372.9,361.4 370.9,363.1 370.0,365.5 367.8,367.7 366.2,370.5 M365.0,366.8 365.5,369.9 366.2,373.0 M352.5,368.0 351.7,370.7 350.5,373.2 348.8,375.5 347.1,377.8 346.1,380.4 345.0,383.0 M342.0,398.0 342.3,401.0 343.3,403.8 343.8,406.8 345.0,409.2 M347.5,408.0 345.8,409.7 344.3,411.7 342.6,413.5 341.2,415.5 339.6,417.6 337.6,419.4 336.2,421.8 333.7,422.9 331.2,424.2 M330.0,375.0 329.0,377.8 327.8,380.5 326.2,383.0 M323.8,385.5 322.9,388.6 321.3,391.3 320.0,394.2 319.6,396.9 318.4,399.3 317.5,401.8 M362.5,380.5 363.0,381.8 M362.5,428.0 361.9,430.5 362.2,433.1 361.2,435.5 M348.8,414.2 349.0,416.8 349.4,419.3 350.0,421.8 352.5,424.2 356.2,423.0 M357.0,414.2 357.5,418.0 M358.8,428.0 361.2,430.5 M370.0,428.0 369.5,430.5 370.2,433.0 370.0,435.5 M260.0,415.5 262.6,415.4 265.0,414.2 267.5,414.7 270.0,415.1 272.5,415.5 275.7,415.3 278.8,414.2 281.0,412.5 283.8,411.8 285.4,414.4 287.5,416.8 290.0,418.0 291.8,415.6 293.2,412.9 295.0,410.5 296.0,408.1 296.2,405.5 M290.0,418.0 290.1,420.5 290.0,423.0 M291.2,400.5 290.0,403.5 M310.0,413.0 310.5,415.0 M317.5,415.5 316.9,418.0 316.2,420.5 315.3,422.9 315.0,425.5 314.0,428.1 312.6,430.5 311.2,433.0 M287.5,313.0 288.0,314.2 M297.5,309.2 297.8,309.8 M312.5,308.0 312.8,308.8 M355.0,310.5 355.2,311.0 M266.2,436.8 266.5,437.2 M277.5,437.5 278.0,438.0 M392.0,316.8 390.8,319.7 389.4,322.6 388.2,325.5 386.7,327.8 386.0,330.6 384.5,333.0 382.0,335.5 M402.0,338.0 400.7,340.2 399.3,342.3 397.5,344.2 396.0,346.2 394.5,348.2 393.2,350.5 M418.2,316.8 420.0,319.0 421.1,321.6 422.0,324.2 421.2,327.0 421.3,329.9 420.9,332.7 420.8,335.5 M417.0,345.5 416.1,348.0 415.4,350.5 414.5,352.9 413.9,355.5 413.2,358.0 412.2,360.9 411.9,363.9 410.8,366.8 M404.5,364.2 406.9,366.3 409.5,368.0 412.0,365.7 414.5,363.5 417.7,363.3 420.8,362.5 M399.5,371.8 398.2,373.8 396.8,375.8 394.6,377.2 393.2,379.2 390.8,380.1 388.8,381.6 386.8,383.1 384.5,384.2 M400.8,381.8 399.8,384.8 399.5,388.0 M432.0,308.0 432.2,310.6 432.9,313.0 433.8,315.4 434.0,318.0 M433.2,329.2 433.0,332.0 432.4,334.7 431.7,337.4 432.3,340.3 431.5,343.0 431.3,345.7 431.7,348.5 431.5,351.3 430.6,354.0 430.8,356.8 M430.8,318.0 433.2,318.3 435.8,318.5 M427.0,359.2 428.5,361.5 430.8,363.0 433.3,365.5 435.8,368.0 M440.8,319.2 444.5,321.8 446.7,319.7 449.5,318.5 452.0,319.1 454.5,320.0 455.7,322.2 457.0,324.2 M457.0,326.8 457.8,330.5 M440.0,337.5 443.2,339.2 M448.2,338.5 450.8,336.0 M462.0,335.0 460.2,336.8 457.7,337.7 455.8,339.2 455.2,341.9 454.4,344.4 453.2,346.8 452.8,349.7 451.9,352.5 450.2,355.1 449.5,358.0 449.0,360.6 447.1,362.8 447.1,365.7 445.8,368.0 M429.5,401.8 430.8,404.2 M468.2,339.2 465.8,341.8 M467.0,355.5 466.6,358.0 467.2,360.5 466.5,363.0 466.5,365.5 M478.2,320.5 477.8,324.2 M489.5,309.2 488.3,312.0 487.7,314.9 486.2,317.5 485.8,320.5 485.5,323.3 484.2,325.9 484.0,328.7 484.3,331.6 483.2,334.2 M513.2,315.5 514.0,318.6 513.8,321.8 M474.5,353.0 475.6,355.6 477.0,358.0 479.2,355.7 480.8,353.0 M477.0,358.0 477.1,360.6 476.4,363.0 475.6,365.5 475.8,368.1 475.0,370.5 474.3,372.9 474.3,375.5 474.4,378.1 473.7,380.5 473.2,383.0 472.5,386.1 472.0,389.2 472.0,391.8 471.6,394.2 472.1,396.8 471.3,399.2 471.5,401.8 M465.8,390.5 468.9,390.0 472.0,389.2 M462.0,380.5 463.0,383.0 464.0,385.5 464.5,388.1 465.8,390.5 M475.8,370.5 478.0,372.4 480.8,373.5 483.9,373.3 487.0,372.5 489.5,370.5 491.3,372.8 493.2,375.0 495.0,373.2 497.0,371.8 M489.5,364.2 490.0,367.4 489.5,370.5 M519.0,333.0 520.1,330.6 520.8,328.0 M522.0,326.8 523.2,328.9 524.1,331.1 525.8,333.0 529.5,331.8 533.2,333.0 537.0,331.0 539.4,332.3 542.0,333.0 M536.2,325.5 536.6,328.2 536.5,331.0 M488.2,381.8 487.5,384.9 486.0,387.7 484.5,390.5 482.0,394.2 M460.8,366.8 460.2,369.6 459.4,372.4 458.5,375.1 458.2,378.0 M450.8,379.2 449.8,381.7 449.1,384.2 448.8,386.7 448.2,389.2 447.9,392.2 446.7,395.0 446.5,398.0 M463.2,404.2 461.7,407.2 460.8,410.5 M458.2,418.0 458.2,420.5 458.3,423.0 457.6,425.5 457.5,428.0 457.0,430.7 457.6,433.4 456.9,436.0 457.0,438.8 M444.0,416.8 447.4,417.2 450.8,416.8 453.3,416.9 455.7,417.7 458.2,418.0 M464.5,415.5 464.2,418.0 464.3,420.5 464.5,423.0 464.4,425.5 464.0,428.0 463.5,430.7 463.3,433.4 463.5,436.1 463.2,438.8 M439.5,404.2 440.1,406.7 439.5,409.3 440.0,411.8 M417.0,396.8 417.5,399.7 418.9,402.5 419.5,405.5 419.6,408.0 419.4,410.5 420.0,413.0 M419.5,415.5 418.3,417.9 417.8,420.5 417.0,423.0 M422.0,421.8 422.7,424.3 424.0,426.7 424.7,429.3 425.8,431.8 422.0,433.0 M432.0,421.8 430.8,423.9 429.5,425.9 428.2,428.0 425.8,431.8 M387.0,394.2 387.4,396.8 387.5,399.2 386.5,401.8 387.0,404.2 M400.8,403.0 400.9,406.1 400.8,409.2 M412.0,395.5 410.8,399.2 M383.2,415.5 383.7,418.6 383.2,421.8 M469.5,420.5 470.8,421.0 M536.5,343.0 536.0,346.0 535.1,348.8 534.5,351.8 M544.5,338.0 544.4,340.6 543.7,343.1 542.1,345.4 542.0,348.0 541.0,350.4 540.8,353.0 540.1,355.5 539.5,358.0 539.1,360.6 538.0,362.9 537.7,365.5 537.0,368.0 M544.5,338.0 547.2,337.6 549.6,336.6 552.0,335.5 M553.2,329.2 552.9,332.4 553.2,335.5 M552.0,335.5 554.5,335.9 557.0,335.0 559.5,334.6 562.0,335.0 564.6,335.3 567.1,335.9 569.6,336.4 572.0,337.5 574.7,337.9 577.0,339.2 579.5,340.0 583.2,342.5 M533.2,374.2 532.4,377.1 532.5,380.1 532.0,383.0 M532.0,383.0 534.9,384.7 538.2,385.5 539.1,387.8 541.2,389.4 542.0,391.8 543.8,393.4 545.8,394.8 547.9,396.1 549.5,398.0 551.8,399.7 554.6,400.3 557.0,401.8 559.9,403.1 562.8,404.4 565.8,405.5 M522.0,399.2 520.3,401.5 519.0,404.0 518.2,406.8 516.6,409.4 514.5,411.8 M577.0,379.2 578.1,376.4 578.9,373.5 579.5,370.5 580.6,368.1 581.5,365.5 M575.8,365.5 578.6,366.0 581.5,365.5 M594.5,347.5 595.8,345.0 597.3,342.6 597.9,339.8 599.5,337.5 600.6,334.5 602.0,331.8 M598.2,355.5 601.2,355.9 604.1,356.0 607.0,356.8 609.6,357.7 612.0,359.2 M569.5,408.0 572.7,408.2 575.8,409.2 578.3,408.8 580.8,408.0 583.2,409.7 584.7,412.3 587.0,414.2 589.6,415.2 592.2,416.3 594.5,418.0 597.5,419.7 600.8,420.5 M607.0,408.0 606.6,411.0 604.9,413.7 604.5,416.8 M558.2,353.0 558.8,355.6 560.0,358.0 560.9,360.3 562.0,362.5 M544.5,358.0 548.2,359.2 M568.2,375.0 568.5,375.5 M585.8,391.8 587.5,391.0 M602.0,386.8 602.8,388.0 M529.5,308.0 532.0,308.8 534.6,309.0 537.0,310.0 540.0,310.0 542.9,310.2 545.8,311.0 M510.8,418.0 509.7,420.4 509.0,423.0 508.2,425.5 507.7,428.1 506.0,430.4 505.7,433.1 504.5,435.5 M494.5,433.0 496.5,431.3 498.4,429.4 500.8,428.0 503.2,427.5 505.8,427.5 M517.0,425.5 518.2,428.0 M563.8,423.5 563.2,426.2 563.6,429.0 563.2,431.8 M575.8,426.8 576.5,429.2 M583.2,433.0 586.3,432.4 589.5,432.5 M605.8,429.2 608.3,429.9 610.8,430.5 613.4,432.2 615.8,434.2 M548.2,434.2 549.8,436.4 552.0,438.0 M188.8,465.0 191.0,467.0 193.8,468.0 197.0,468.5 200.0,470.0 202.9,471.9 206.2,473.0 M218.8,471.0 221.2,471.7 223.8,472.0 M240.8,471.0 245.0,473.0 248.1,472.1 251.2,471.8 253.8,472.4 256.2,473.0 259.1,473.8 261.8,475.0 M269.5,460.0 272.2,458.7 275.0,458.0 279.5,457.0 M307.0,470.5 305.0,472.6 302.5,474.2 M318.0,450.0 318.2,450.5 M313.2,461.8 313.5,462.2 M381.2,444.2 380.1,446.9 379.5,449.8 378.9,452.6 378.8,455.5 378.7,458.1 378.1,460.5 377.0,462.9 377.0,465.5 M377.5,476.8 375.1,477.8 372.5,478.0 370.7,479.7 369.5,481.9 367.4,483.3 366.2,485.5 M266.2,437.5 266.5,438.0 M402.0,438.0 400.2,439.9 397.9,441.4 396.6,443.8 394.5,445.5 392.9,447.6 391.7,450.1 390.1,452.3 388.2,454.2 386.7,457.0 385.5,460.0 384.5,463.0 383.5,465.6 382.0,468.0 M422.0,444.2 422.5,447.4 422.0,450.5 424.5,454.2 M404.5,458.0 404.1,460.5 403.9,463.0 403.8,465.5 403.2,468.0 402.7,470.6 401.5,473.0 M414.5,465.5 415.0,468.0 415.6,470.6 416.5,473.0 M413.2,479.2 410.0,480.2 407.0,481.8 M428.2,465.5 429.1,468.3 428.8,471.4 429.5,474.2 M429.5,474.2 432.7,475.3 435.8,476.8 439.5,475.5 M434.5,476.8 435.0,480.5 M449.5,466.8 449.0,469.2 448.8,471.7 449.0,474.2 M449.0,474.2 449.5,477.5 450.8,480.5 450.6,483.7 450.0,486.8 M457.0,439.2 456.8,441.8 456.3,444.2 456.6,446.8 455.8,449.2 454.5,453.0 M444.5,429.2 445.1,432.2 445.9,435.1 446.5,438.0 446.7,440.5 447.4,443.0 447.0,445.5 447.5,448.0 M458.2,481.8 458.3,484.9 459.0,488.0 M462.5,466.0 462.8,466.5 M489.5,443.0 489.8,445.0 M498.2,466.8 498.2,469.9 499.0,473.0 M519.0,455.5 518.6,458.0 518.8,460.5 518.2,463.0 518.2,465.5 518.5,468.0 517.3,470.5 517.0,473.0 517.3,475.5 517.0,478.0 M517.0,478.0 519.5,478.6 522.0,479.2 524.5,478.7 527.0,478.0 529.5,479.3 532.0,480.5 534.9,480.1 537.8,481.3 540.8,481.0 543.3,481.4 545.8,482.0 548.2,483.0 551.2,482.7 554.1,483.1 557.0,483.5 559.4,484.6 562.2,484.6 564.6,485.5 567.0,486.8 M526.5,465.5 526.3,468.0 526.8,470.5 527.0,473.0 526.4,475.5 526.5,478.0 M517.0,460.0 520.0,460.0 M550.8,436.8 552.6,439.3 554.5,441.8 557.0,442.1 559.5,442.5 M561.5,457.5 562.0,461.8 M575.8,448.0 578.8,449.7 582.0,451.0 584.7,452.3 587.0,454.2 M583.2,434.2 585.8,432.5 588.2,433.0 590.8,433.0 M594.0,436.0 594.2,436.5 M605.8,430.5 608.2,429.8 610.8,430.0 612.9,431.2 614.5,433.0 616.5,435.5 M609.5,446.8 613.2,449.2 M585.8,485.5 589.5,483.5 594.0,484.2 M605.8,470.5 606.0,471.0 M609.5,483.0 609.8,483.5 M563.8,424.2 563.6,426.8 563.5,429.2 563.6,431.8 563.2,434.2 M575.8,426.2 577.5,426.8 576.5,429.2" fill="none" stroke="#1ed61e" stroke-width="0.9" stroke-linecap="round" stroke-linejoin="round"/>
<path d="M210.0,78.0 206.7,78.9 203.8,80.5 202.2,82.6 200.0,84.0 199.3,87.3 198.0,90.5 M166.2,97.8 164.1,98.9 162.1,100.3 160.0,101.5 M240.0,99.8 242.5,100.2 M243.8,109.8 246.3,110.1 248.8,110.5 M317.0,69.0 317.1,71.4 316.9,73.9 316.7,76.3 316.0,78.7 315.5,81.0 315.8,83.5 314.4,86.5 313.8,89.8 M321.2,105.5 324.3,104.7 327.5,104.2 M291.2,147.2 294.2,146.4 297.1,145.6 300.0,144.8 M340.0,84.8 342.5,85.1 345.0,85.5 M380.0,78.5 377.1,78.8 374.5,80.0 371.6,79.9 368.8,80.5 367.1,82.4 365.8,84.5 363.8,86.0 362.0,88.6 360.0,91.0 M337.5,62.5 338.8,62.8 M387.5,119.0 390.0,119.8 392.0,121.5 394.6,121.3 397.0,120.5 M489.5,86.0 492.5,85.9 495.3,85.2 498.2,84.8 M463.2,129.8 467.0,128.5 468.2,131.0 M549.5,57.2 552.5,57.4 555.3,58.5 558.2,58.5 M233.8,245.0 236.2,244.4 238.8,244.0 M258.8,187.0 262.5,185.8 M312.5,185.8 315.0,184.5 M305.0,252.0 304.0,254.9 303.1,257.8 302.5,260.8 M350.0,284.0 347.6,285.5 345.7,287.6 343.8,289.5 342.2,291.8 341.6,294.7 340.0,297.0 M340.0,206.5 342.6,206.7 345.0,207.7 347.4,208.4 350.1,208.0 352.5,209.0 M360.0,209.5 361.2,210.2 M362.5,240.0 364.5,240.5 M392.0,216.5 394.3,217.9 397.0,218.2 400.2,218.1 403.2,217.5 M457.0,201.5 459.4,202.4 462.0,202.4 464.5,202.8 467.0,203.3 469.5,203.4 472.0,204.0 M515.8,194.5 517.0,196.5 M180.0,329.2 181.2,329.8 M232.5,378.5 236.2,380.5 M259.5,391.8 262.2,392.1 265.0,391.8 M287.5,340.5 289.9,341.7 292.5,342.5 295.0,342.0 297.5,341.1 300.0,340.5 302.5,340.7 305.0,341.5 307.5,341.8 M277.5,369.2 280.6,369.5 283.8,370.0 287.5,367.5 M331.2,353.0 331.5,356.8 M351.2,369.2 353.7,369.8 356.3,369.4 358.8,370.0 361.3,370.0 363.8,369.2 M475.5,409.2 476.0,411.8 477.0,414.2 M478.2,394.2 479.0,395.0 M555.8,374.2 558.2,376.0 M492.0,343.0 492.2,343.5 M155.0,445.0 157.6,445.5 160.0,446.8 164.5,446.8 M373.0,446.2 375.0,446.8 M277.0,438.5 277.5,439.2 M484.5,456.8 487.0,459.2 490.0,461.0 M496.5,471.0 499.5,471.6 502.5,472.5 M568.2,441.0 572.0,441.0" fill="none" stroke="#10c078" stroke-width="0.9" stroke-linecap="round" stroke-linejoin="round"/>
<path d="M265.8,69.8 264.5,74.0 M397.0,59.8 396.0,62.1 394.9,64.3 393.6,66.5 392.0,68.5 391.2,71.2 389.8,73.6 388.4,76.1 387.0,78.5 386.2,81.1 384.7,83.4 384.2,86.1 383.0,88.5 382.0,91.0 M453.2,58.5 452.9,61.1 451.4,63.4 450.6,65.9 450.1,68.4 449.5,71.0 448.7,73.6 447.8,76.1 446.7,78.6 445.5,81.0 444.5,83.5 M544.5,108.5 542.9,110.5 542.2,113.0 540.3,114.8 539.5,117.2 538.5,119.6 537.2,121.8 535.7,123.8 534.5,126.0 533.6,128.7 532.1,131.1 530.3,133.3 529.5,136.0 M201.2,237.0 200.3,239.2 198.7,241.1 197.5,243.2 196.1,246.4 193.8,249.0 M265.0,208.2 263.5,210.9 262.7,213.7 262.4,216.7 261.2,219.5 260.6,222.4 258.9,225.0 258.2,227.9 257.5,230.8 M281.2,262.5 283.8,263.3 286.2,264.5 M326.2,202.0 326.5,202.2 M392.0,179.5 391.1,182.2 389.6,184.5 388.7,187.2 387.0,189.5 386.1,192.0 385.0,194.5 384.5,197.2 382.9,199.4 382.0,202.0 M448.2,215.8 447.7,218.2 448.4,220.8 447.3,223.2 447.6,225.7 447.7,228.3 447.5,230.8 446.7,233.5 446.9,236.4 445.7,239.1 445.8,242.0 M442.0,250.8 440.5,253.1 439.6,255.8 438.6,258.4 436.8,260.6 435.8,263.2 M442.0,278.2 444.4,279.7 447.0,280.8 449.5,284.0 M497.0,277.0 494.8,279.2 492.0,280.8 M223.8,338.0 227.5,339.2 M226.2,338.0 224.5,339.7 222.3,340.8 220.8,342.9 218.8,344.2 216.3,346.0 214.8,348.6 212.5,350.5 M268.8,333.5 271.2,334.4 273.9,334.8 276.2,336.0 278.8,336.1 281.3,336.2 283.8,336.8 M297.5,368.0 300.3,367.4 303.1,367.3 305.9,367.0 308.8,366.8 M302.5,364.2 302.6,367.4 303.0,370.5 M415.8,316.8 414.3,319.0 413.0,321.5 411.4,323.6 409.5,325.6 408.3,328.1 407.0,330.5 405.1,332.8 403.8,335.6 402.0,338.0 M409.5,368.0 409.7,371.2 409.0,374.2 M434.0,318.0 434.0,320.8 433.7,323.6 433.6,326.5 433.2,329.2 M445.8,368.0 444.5,370.8 444.5,373.9 443.2,376.8 442.9,380.0 441.5,383.0 439.1,384.0 437.0,385.5 M510.8,376.8 511.9,378.9 513.2,381.0 M581.5,365.5 582.5,363.1 583.9,360.9 585.9,359.1 587.0,356.8 589.3,354.7 590.9,352.2 592.5,349.7 594.5,347.5 M407.0,444.2 405.5,447.0 403.2,449.2" fill="none" stroke="#a8c018" stroke-width="0.9" stroke-linecap="round" stroke-linejoin="round"/>
<path d="M192.0,71.0 191.3,73.5 191.4,76.1 190.3,78.5 190.0,81.0 189.8,83.6 188.8,86.0 188.3,88.5 188.4,91.1 187.5,93.5 187.0,96.0 M171.2,143.5 169.5,146.5 M201.2,131.0 202.1,127.9 203.3,125.0 205.0,122.2 M236.2,71.0 235.2,73.4 234.8,76.1 233.8,78.5 M237.5,86.0 236.7,88.7 235.6,91.4 235.4,94.3 234.3,96.9 233.8,99.8 M235.0,129.8 235.9,126.8 237.2,124.0 238.0,121.0 M230.0,159.8 228.7,162.4 227.8,165.3 226.8,168.1 226.2,171.0 M277.0,129.8 275.6,132.2 274.7,135.0 272.8,137.2 270.9,139.5 270.0,142.2 268.4,144.3 267.3,146.6 266.5,149.1 265.1,151.3 263.8,153.5 262.8,156.2 261.0,158.4 260.0,161.0 258.8,163.5 M307.5,83.5 306.8,86.0 306.1,88.6 305.0,91.0 M307.0,93.5 306.2,96.0 305.4,98.4 305.5,101.1 304.2,103.5 303.8,106.0 302.8,108.4 302.4,110.9 302.0,113.4 301.8,116.0 301.2,118.5 M292.5,112.2 291.6,114.9 291.3,117.6 291.6,120.4 290.5,123.0 289.9,125.7 290.0,128.5 289.6,131.0 289.7,133.5 289.2,136.0 289.4,138.5 288.8,141.0 M316.2,131.0 315.2,133.4 315.0,136.0 M362.0,59.8 361.2,62.6 360.4,65.4 359.1,68.1 358.8,71.0 357.7,73.4 356.7,75.9 355.7,78.3 355.6,81.1 354.5,83.5 M354.5,83.5 352.9,85.8 351.9,88.3 351.4,91.2 350.3,93.7 348.8,96.0 347.6,98.5 346.7,101.2 345.3,103.6 344.2,106.2 342.5,108.5 341.3,110.7 340.2,112.9 339.1,115.1 338.8,117.7 337.5,119.8 M331.2,136.0 329.8,138.3 329.7,141.1 328.0,143.3 327.5,146.0 326.9,148.5 326.0,151.0 324.7,153.3 324.1,155.9 323.8,158.5 323.4,161.1 322.4,163.5 321.6,166.0 321.1,168.5 320.5,171.1 319.7,173.6 318.8,176.0 M358.0,97.2 357.1,99.5 356.7,101.9 355.0,103.8 354.3,106.1 353.8,108.5 352.0,111.2 351.6,114.5 350.0,117.2 M377.5,99.8 376.0,101.9 375.2,104.5 374.1,106.8 372.6,109.0 370.9,111.0 370.0,113.5 368.7,115.9 368.2,118.6 367.4,121.1 365.6,123.3 365.0,126.0 364.0,128.8 362.9,131.6 362.6,134.6 361.2,137.2 M350.0,163.5 350.0,166.1 349.1,168.5 348.8,171.0 M417.0,86.0 415.5,88.2 414.5,90.6 413.5,93.0 412.0,95.2 410.3,97.2 409.5,99.8 408.6,102.4 406.7,104.6 405.8,107.3 404.5,109.8 403.2,112.2 402.1,114.6 401.7,117.3 400.8,119.8 M444.5,83.5 443.6,86.2 442.1,88.5 441.0,91.1 439.0,93.3 438.2,96.0 436.5,98.3 435.7,101.0 434.8,103.6 432.8,105.8 432.0,108.5 M485.0,58.0 484.2,60.7 482.9,63.2 482.3,66.1 480.8,68.5 479.7,71.1 478.7,73.7 477.1,76.0 476.2,78.7 474.5,81.0 473.7,83.5 472.2,85.6 471.0,87.9 469.4,90.0 468.2,92.2 M457.0,112.2 456.4,115.1 455.0,117.6 455.1,120.6 453.8,123.2 453.2,126.0 452.3,128.5 452.2,131.1 450.6,133.4 449.8,135.9 449.5,138.5 M528.2,58.5 527.4,61.0 526.0,63.1 524.3,65.1 523.5,67.7 522.0,69.8 520.3,71.9 518.6,74.0 517.5,76.5 516.1,78.8 514.5,81.0 513.3,83.3 511.8,85.4 510.5,87.6 509.4,89.9 508.2,92.2 505.8,96.0 M542.0,71.0 541.6,73.6 540.6,76.0 539.9,78.4 539.5,81.0 538.5,83.2 538.0,85.7 537.0,87.9 536.2,90.2 535.4,92.5 534.5,94.8 533.8,97.2 532.0,99.2 531.7,101.8 529.9,103.7 528.9,106.0 528.2,108.5 527.8,111.2 526.4,113.5 525.1,115.9 524.5,118.5 M519.5,128.5 518.7,130.9 517.0,132.9 516.7,135.5 515.3,137.6 514.7,140.1 513.2,142.2 512.2,144.7 510.7,147.1 510.5,149.9 508.8,152.1 508.0,154.7 507.0,157.2 505.8,159.6 505.3,162.2 505.0,164.8 503.6,167.1 503.2,169.8 502.0,172.9 500.8,176.0 M507.0,102.2 505.3,104.3 503.7,106.5 502.0,108.5 500.9,110.7 499.8,112.9 498.2,114.8 M495.8,118.5 493.8,120.8 492.9,123.8 490.8,126.0 489.6,128.4 488.5,130.9 488.3,133.6 487.0,136.0 485.6,138.3 484.8,140.9 483.6,143.3 483.2,146.1 482.0,148.5 M475.8,157.2 474.1,159.4 472.7,161.7 471.1,163.9 469.5,166.0 468.1,168.6 466.8,171.3 465.2,173.7 463.2,176.0 M557.0,138.5 556.4,141.1 555.8,143.7 554.5,146.0 552.8,148.3 552.4,151.2 550.8,153.5 549.5,156.0 548.4,158.6 547.2,161.1 545.5,163.4 544.0,165.8 543.2,168.5 542.2,171.1 540.6,173.4 539.5,176.0 M208.8,188.2 205.5,191.5 M222.5,179.5 221.8,182.4 220.6,185.1 219.3,187.8 218.8,190.8 217.3,193.1 216.3,195.8 215.1,198.3 213.8,200.8 M176.2,213.2 177.5,212.0 M193.8,225.8 192.4,227.8 191.4,230.1 191.2,232.7 190.2,235.0 188.8,237.0 188.0,239.5 187.3,241.9 187.3,244.5 186.7,247.0 186.2,249.5 M230.0,198.2 228.9,200.4 227.7,202.6 227.0,205.0 225.9,207.2 225.0,209.5 224.2,211.9 222.2,213.7 221.5,216.2 220.0,218.2 M248.8,207.0 249.6,204.6 249.3,202.0 249.5,199.4 250.2,197.0 250.7,194.5 251.2,192.0 M240.0,223.2 238.4,225.7 237.1,228.4 234.9,230.5 233.8,233.2 232.7,235.8 230.9,238.1 230.3,240.9 228.8,243.2 M298.8,177.0 297.6,179.3 295.9,181.3 295.5,184.0 293.8,186.0 292.5,188.2 M307.0,190.8 305.3,192.8 304.0,195.1 303.2,197.8 301.8,200.0 300.0,202.0 298.5,204.8 296.2,207.0 M337.5,177.0 335.8,179.4 333.6,181.2 332.0,183.7 330.0,185.8 328.3,188.1 326.7,190.5 324.2,192.1 322.5,194.5 M345.0,177.0 344.3,179.6 343.1,182.0 342.0,184.5 340.6,186.8 340.0,189.5 338.7,192.2 336.6,194.3 335.1,196.9 333.8,199.5 M331.2,209.5 330.2,212.1 328.9,214.6 327.6,217.1 326.0,219.4 325.0,222.0 324.2,224.7 322.8,227.1 321.0,229.4 320.0,232.0 M306.2,230.8 307.1,228.4 308.8,226.6 310.0,224.5 M310.0,243.2 309.0,245.6 307.6,247.7 306.1,249.7 305.0,252.0 M298.8,239.5 297.4,242.1 295.6,244.5 294.2,247.1 292.5,249.5 M257.0,264.5 256.1,267.0 254.9,269.4 253.9,271.9 253.0,274.3 252.5,277.0 252.4,279.6 251.5,282.1 251.0,284.6 250.0,287.0 M357.5,264.5 358.6,262.3 360.5,260.6 362.3,259.0 363.8,257.0 M370.0,237.0 370.6,234.3 371.9,232.0 373.1,229.5 374.1,227.1 375.0,224.5 375.2,221.9 375.9,219.4 377.1,217.1 377.4,214.5 377.9,211.9 378.8,209.5 379.4,206.5 380.9,203.8 381.2,200.8 M268.8,272.0 267.6,274.6 266.3,277.0 265.0,279.5 M262.5,284.5 260.2,286.3 258.9,289.0 257.1,291.3 255.0,293.2 253.2,295.0 252.1,297.2 250.7,299.2 248.8,300.8 M345.0,263.2 343.3,265.7 341.3,268.0 340.0,270.8 339.1,273.2 337.5,275.1 336.0,277.1 335.0,279.5 M381.2,272.0 379.7,274.4 379.0,277.1 377.6,279.5 376.2,282.0 374.7,284.3 373.4,286.8 372.8,289.7 371.2,292.0 370.3,294.6 368.8,297.0 367.5,299.5 366.2,302.0 365.1,304.6 363.8,307.0 M192.5,292.0 192.4,294.6 191.2,297.0 M422.0,239.5 420.7,241.6 420.4,244.2 419.0,246.2 417.6,248.3 417.0,250.8 M435.8,263.2 434.9,266.0 432.9,268.1 432.2,270.9 430.8,273.2 429.4,276.3 428.2,279.5 M500.8,177.0 499.6,179.5 498.2,182.0 496.6,184.3 496.1,187.2 494.5,189.5 493.5,192.1 491.8,194.4 491.2,197.2 490.0,199.7 488.2,202.0 M479.0,225.8 478.5,228.3 477.7,230.9 477.0,233.4 475.8,235.8 474.5,238.6 473.2,241.4 472.5,244.5 M443.2,258.2 444.6,260.5 446.2,262.7 447.5,265.0 449.5,269.0 450.0,271.7 450.9,274.3 451.5,277.0 M441.5,287.0 440.3,290.4 438.2,293.2 M535.8,177.0 534.8,179.5 534.0,182.0 533.2,184.6 532.0,187.0 M554.5,194.5 553.4,196.7 552.2,198.9 551.8,201.4 550.7,203.6 549.5,205.8 548.4,208.0 547.4,210.4 545.4,212.1 544.5,214.5 543.0,216.5 541.8,218.8 541.2,221.3 539.5,223.2 537.9,225.6 537.0,228.2 M530.8,249.5 530.2,252.1 529.6,254.7 528.5,257.1 527.5,259.5 526.9,262.0 526.6,264.5 526.5,267.0 M507.0,219.5 505.8,221.9 505.1,224.5 504.4,227.1 503.2,229.5 502.3,232.4 501.1,235.2 500.8,238.2 M543.2,244.5 541.5,246.8 540.8,249.5 539.2,251.8 538.2,254.5 536.8,256.5 535.4,258.5 534.5,260.8 M483.2,285.8 482.3,288.1 481.2,290.4 479.9,292.5 478.2,294.5 476.6,296.8 475.9,299.6 474.9,302.2 473.2,304.5 472.0,307.8 M510.8,279.5 510.4,282.2 509.6,284.7 508.2,287.0 505.8,289.5 M407.0,289.5 406.2,292.2 404.2,294.3 402.9,296.8 402.0,299.5 400.6,301.9 399.2,304.3 398.2,307.0 M238.8,316.8 238.0,319.2 236.3,321.1 235.0,323.3 233.8,325.5 M212.5,350.5 211.5,353.1 209.8,355.4 208.8,358.0 207.5,360.5 206.3,362.9 204.3,364.8 203.2,367.3 201.2,369.2 M268.8,355.5 267.4,358.4 266.3,361.4 265.0,364.2 M223.8,375.5 224.5,376.8 M315.0,338.0 313.7,340.5 312.6,343.0 310.8,345.3 310.0,348.0 M335.0,308.0 332.9,310.2 331.6,313.0 330.0,315.5 329.0,317.7 327.2,319.5 326.2,321.8 M360.0,316.8 359.4,319.4 357.7,321.6 356.7,324.1 355.9,326.7 355.0,329.2 353.8,331.5 352.4,333.7 351.5,336.1 349.6,338.0 348.8,340.5 346.8,342.9 344.5,345.1 342.5,347.5 341.5,350.0 340.9,352.7 340.7,355.4 340.0,358.0 339.4,361.0 338.3,363.8 337.5,366.8 337.1,369.4 335.5,371.6 335.0,374.2 334.1,376.6 332.6,378.6 332.2,381.1 331.1,383.3 330.0,385.5 329.2,387.9 328.1,390.0 327.3,392.4 326.5,394.7 325.0,396.8 M345.0,383.0 344.4,385.6 343.7,388.1 342.5,390.5 342.7,393.0 342.5,395.5 342.0,398.0 M366.2,370.5 365.6,373.1 363.8,375.3 363.0,377.9 362.6,380.6 361.2,383.0 359.9,385.3 359.3,388.0 358.1,390.4 357.5,393.0 356.1,395.1 354.6,397.2 353.5,399.4 352.5,401.8 350.5,403.6 349.4,406.1 347.5,408.0 M381.2,375.5 380.9,378.1 379.8,380.5 379.0,383.0 378.2,385.5 377.5,388.0 376.6,390.4 377.0,393.1 375.6,395.4 375.5,398.0 375.0,400.5 373.7,403.0 372.3,405.4 370.9,407.8 370.0,410.5 368.9,413.1 367.6,415.5 365.8,417.8 365.0,420.5 364.6,423.1 363.2,425.5 362.5,428.0 M419.5,308.0 417.9,310.8 417.1,313.9 415.8,316.8 M393.2,350.5 392.1,353.3 389.9,355.4 388.2,357.8 387.0,360.5 385.7,362.7 384.9,365.1 383.4,367.2 382.0,369.2 M420.8,335.5 419.5,337.9 418.5,340.3 417.8,343.0 417.0,345.5 M470.8,308.0 468.7,310.2 467.0,312.7 465.8,315.5 464.5,317.6 463.3,319.7 462.0,321.8 M437.0,385.5 436.0,388.1 434.3,390.4 433.6,393.2 432.0,395.5 431.2,398.8 429.5,401.8 M472.0,331.8 470.5,334.1 469.3,336.6 468.2,339.2 M469.5,349.2 467.9,352.2 467.0,355.5 M471.5,401.8 470.1,403.9 468.4,405.8 467.0,408.0 M497.0,371.8 498.7,369.8 499.7,367.5 501.1,365.4 502.0,363.0 503.5,360.8 505.4,358.9 507.0,356.8 509.1,355.0 510.6,352.8 512.0,350.5 513.3,348.0 514.3,345.4 515.7,343.0 517.0,340.5 518.1,338.1 518.2,335.5 519.0,333.0 M458.2,378.0 457.0,380.8 457.1,384.0 455.8,386.8 454.8,389.2 454.5,391.8 M460.8,410.5 459.7,412.9 458.7,415.4 458.2,418.0 M417.0,423.0 415.1,425.2 413.2,427.3 411.6,429.8 409.5,431.8 408.1,434.0 406.4,436.1 404.5,438.0 M534.5,351.8 533.3,354.1 533.0,356.9 531.6,359.2 530.8,361.8 M532.0,383.0 529.9,385.2 528.5,387.9 527.0,390.5 525.9,392.7 524.5,394.9 523.6,397.2 522.0,399.2 M565.8,405.5 566.3,403.0 567.5,400.9 568.6,398.7 570.2,396.7 570.8,394.2 572.4,391.5 573.6,388.6 574.5,385.5 575.3,382.2 577.0,379.2 M594.5,347.5 596.0,350.1 597.4,352.7 598.2,355.5 M612.0,359.2 615.0,362.5 M613.2,388.0 612.9,390.6 611.5,392.9 611.0,395.4 610.8,398.0 609.4,400.3 609.2,403.1 608.0,405.5 607.0,408.0 M547.0,326.8 548.2,324.2 549.3,321.7 550.8,319.2 552.7,316.9 554.1,314.2 555.8,311.8 M302.5,474.2 301.1,477.2 299.5,480.0 M366.2,485.5 364.5,487.4 361.9,488.2 360.0,490.0 M417.0,423.0 415.2,425.0 413.5,427.0 411.8,429.0 409.5,430.5 407.4,432.1 405.7,434.2 404.1,436.4 402.0,438.0 M407.0,481.8 406.5,484.2 406.5,486.8 405.8,489.2 M429.5,474.2 428.3,476.8 426.8,479.1 425.8,481.8 425.4,484.4 423.8,486.6 423.2,489.2 M449.0,474.2 447.5,476.3 446.4,478.7 444.5,480.5 443.2,482.9 442.9,485.5 442.0,488.0 M463.2,445.5 462.3,448.2 460.4,450.3 459.5,453.0 458.8,455.5 458.2,458.1 457.0,460.5 M585.8,451.8 586.6,454.4 588.2,456.8" fill="none" stroke="#aa1810" stroke-width="0.9" stroke-linecap="round" stroke-linejoin="round"/>
<path d="M192.0,71.0 191.3,73.5 191.4,76.1 190.3,78.5 190.0,81.0 189.8,83.6 188.8,86.0 188.3,88.5 188.4,91.1 187.5,93.5 187.0,96.0 M171.2,143.5 169.5,146.5 M201.2,131.0 202.1,127.9 203.3,125.0 205.0,122.2 M236.2,71.0 235.2,73.4 234.8,76.1 233.8,78.5 M237.5,86.0 236.7,88.7 235.6,91.4 235.4,94.3 234.3,96.9 233.8,99.8 M235.0,129.8 235.9,126.8 237.2,124.0 238.0,121.0 M230.0,159.8 228.7,162.4 227.8,165.3 226.8,168.1 226.2,171.0 M277.0,129.8 275.6,132.2 274.7,135.0 272.8,137.2 270.9,139.5 270.0,142.2 268.4,144.3 267.3,146.6 266.5,149.1 265.1,151.3 263.8,153.5 262.8,156.2 261.0,158.4 260.0,161.0 258.8,163.5 M307.5,83.5 306.8,86.0 306.1,88.6 305.0,91.0 M307.0,93.5 306.2,96.0 305.4,98.4 305.5,101.1 304.2,103.5 303.8,106.0 302.8,108.4 302.4,110.9 302.0,113.4 301.8,116.0 301.2,118.5 M292.5,112.2 291.6,114.9 291.3,117.6 291.6,120.4 290.5,123.0 289.9,125.7 290.0,128.5 289.6,131.0 289.7,133.5 289.2,136.0 289.4,138.5 288.8,141.0 M316.2,131.0 315.2,133.4 315.0,136.0 M362.0,59.8 361.2,62.6 360.4,65.4 359.1,68.1 358.8,71.0 357.7,73.4 356.7,75.9 355.7,78.3 355.6,81.1 354.5,83.5 M354.5,83.5 352.9,85.8 351.9,88.3 351.4,91.2 350.3,93.7 348.8,96.0 347.6,98.5 346.7,101.2 345.3,103.6 344.2,106.2 342.5,108.5 341.3,110.7 340.2,112.9 339.1,115.1 338.8,117.7 337.5,119.8 M331.2,136.0 329.8,138.3 329.7,141.1 328.0,143.3 327.5,146.0 326.9,148.5 326.0,151.0 324.7,153.3 324.1,155.9 323.8,158.5 323.4,161.1 322.4,163.5 321.6,166.0 321.1,168.5 320.5,171.1 319.7,173.6 318.8,176.0 M358.0,97.2 357.1,99.5 356.7,101.9 355.0,103.8 354.3,106.1 353.8,108.5 352.0,111.2 351.6,114.5 350.0,117.2 M377.5,99.8 376.0,101.9 375.2,104.5 374.1,106.8 372.6,109.0 370.9,111.0 370.0,113.5 368.7,115.9 368.2,118.6 367.4,121.1 365.6,123.3 365.0,126.0 364.0,128.8 362.9,131.6 362.6,134.6 361.2,137.2 M350.0,163.5 350.0,166.1 349.1,168.5 348.8,171.0 M417.0,86.0 415.5,88.2 414.5,90.6 413.5,93.0 412.0,95.2 410.3,97.2 409.5,99.8 408.6,102.4 406.7,104.6 405.8,107.3 404.5,109.8 403.2,112.2 402.1,114.6 401.7,117.3 400.8,119.8 M444.5,83.5 443.6,86.2 442.1,88.5 441.0,91.1 439.0,93.3 438.2,96.0 436.5,98.3 435.7,101.0 434.8,103.6 432.8,105.8 432.0,108.5 M485.0,58.0 484.2,60.7 482.9,63.2 482.3,66.1 480.8,68.5 479.7,71.1 478.7,73.7 477.1,76.0 476.2,78.7 474.5,81.0 473.7,83.5 472.2,85.6 471.0,87.9 469.4,90.0 468.2,92.2 M457.0,112.2 456.4,115.1 455.0,117.6 455.1,120.6 453.8,123.2 453.2,126.0 452.3,128.5 452.2,131.1 450.6,133.4 449.8,135.9 449.5,138.5 M528.2,58.5 527.4,61.0 526.0,63.1 524.3,65.1 523.5,67.7 522.0,69.8 520.3,71.9 518.6,74.0 517.5,76.5 516.1,78.8 514.5,81.0 513.3,83.3 511.8,85.4 510.5,87.6 509.4,89.9 508.2,92.2 505.8,96.0 M542.0,71.0 541.6,73.6 540.6,76.0 539.9,78.4 539.5,81.0 538.5,83.2 538.0,85.7 537.0,87.9 536.2,90.2 535.4,92.5 534.5,94.8 533.8,97.2 532.0,99.2 531.7,101.8 529.9,103.7 528.9,106.0 528.2,108.5 527.8,111.2 526.4,113.5 525.1,115.9 524.5,118.5 M519.5,128.5 518.7,130.9 517.0,132.9 516.7,135.5 515.3,137.6 514.7,140.1 513.2,142.2 512.2,144.7 510.7,147.1 510.5,149.9 508.8,152.1 508.0,154.7 507.0,157.2 505.8,159.6 505.3,162.2 505.0,164.8 503.6,167.1 503.2,169.8 502.0,172.9 500.8,176.0 M507.0,102.2 505.3,104.3 503.7,106.5 502.0,108.5 500.9,110.7 499.8,112.9 498.2,114.8 M495.8,118.5 493.8,120.8 492.9,123.8 490.8,126.0 489.6,128.4 488.5,130.9 488.3,133.6 487.0,136.0 485.6,138.3 484.8,140.9 483.6,143.3 483.2,146.1 482.0,148.5 M475.8,157.2 474.1,159.4 472.7,161.7 471.1,163.9 469.5,166.0 468.1,168.6 466.8,171.3 465.2,173.7 463.2,176.0 M557.0,138.5 556.4,141.1 555.8,143.7 554.5,146.0 552.8,148.3 552.4,151.2 550.8,153.5 549.5,156.0 548.4,158.6 547.2,161.1 545.5,163.4 544.0,165.8 543.2,168.5 542.2,171.1 540.6,173.4 539.5,176.0 M208.8,188.2 205.5,191.5 M222.5,179.5 221.8,182.4 220.6,185.1 219.3,187.8 218.8,190.8 217.3,193.1 216.3,195.8 215.1,198.3 213.8,200.8 M176.2,213.2 177.5,212.0 M193.8,225.8 192.4,227.8 191.4,230.1 191.2,232.7 190.2,235.0 188.8,237.0 188.0,239.5 187.3,241.9 187.3,244.5 186.7,247.0 186.2,249.5 M230.0,198.2 228.9,200.4 227.7,202.6 227.0,205.0 225.9,207.2 225.0,209.5 224.2,211.9 222.2,213.7 221.5,216.2 220.0,218.2 M248.8,207.0 249.6,204.6 249.3,202.0 249.5,199.4 250.2,197.0 250.7,194.5 251.2,192.0 M240.0,223.2 238.4,225.7 237.1,228.4 234.9,230.5 233.8,233.2 232.7,235.8 230.9,238.1 230.3,240.9 228.8,243.2 M298.8,177.0 297.6,179.3 295.9,181.3 295.5,184.0 293.8,186.0 292.5,188.2 M307.0,190.8 305.3,192.8 304.0,195.1 303.2,197.8 301.8,200.0 300.0,202.0 298.5,204.8 296.2,207.0 M337.5,177.0 335.8,179.4 333.6,181.2 332.0,183.7 330.0,185.8 328.3,188.1 326.7,190.5 324.2,192.1 322.5,194.5 M345.0,177.0 344.3,179.6 343.1,182.0 342.0,184.5 340.6,186.8 340.0,189.5 338.7,192.2 336.6,194.3 335.1,196.9 333.8,199.5 M331.2,209.5 330.2,212.1 328.9,214.6 327.6,217.1 326.0,219.4 325.0,222.0 324.2,224.7 322.8,227.1 321.0,229.4 320.0,232.0 M306.2,230.8 307.1,228.4 308.8,226.6 310.0,224.5 M310.0,243.2 309.0,245.6 307.6,247.7 306.1,249.7 305.0,252.0 M298.8,239.5 297.4,242.1 295.6,244.5 294.2,247.1 292.5,249.5 M257.0,264.5 256.1,267.0 254.9,269.4 253.9,271.9 253.0,274.3 252.5,277.0 252.4,279.6 251.5,282.1 251.0,284.6 250.0,287.0 M357.5,264.5 358.6,262.3 360.5,260.6 362.3,259.0 363.8,257.0 M370.0,237.0 370.6,234.3 371.9,232.0 373.1,229.5 374.1,227.1 375.0,224.5 375.2,221.9 375.9,219.4 377.1,217.1 377.4,214.5 377.9,211.9 378.8,209.5 379.4,206.5 380.9,203.8 381.2,200.8 M268.8,272.0 267.6,274.6 266.3,277.0 265.0,279.5 M262.5,284.5 260.2,286.3 258.9,289.0 257.1,291.3 255.0,293.2 253.2,295.0 252.1,297.2 250.7,299.2 248.8,300.8 M345.0,263.2 343.3,265.7 341.3,268.0 340.0,270.8 339.1,273.2 337.5,275.1 336.0,277.1 335.0,279.5 M381.2,272.0 379.7,274.4 379.0,277.1 377.6,279.5 376.2,282.0 374.7,284.3 373.4,286.8 372.8,289.7 371.2,292.0 370.3,294.6 368.8,297.0 367.5,299.5 366.2,302.0 365.1,304.6 363.8,307.0 M192.5,292.0 192.4,294.6 191.2,297.0 M422.0,239.5 420.7,241.6 420.4,244.2 419.0,246.2 417.6,248.3 417.0,250.8 M435.8,263.2 434.9,266.0 432.9,268.1 432.2,270.9 430.8,273.2 429.4,276.3 428.2,279.5 M500.8,177.0 499.6,179.5 498.2,182.0 496.6,184.3 496.1,187.2 494.5,189.5 493.5,192.1 491.8,194.4 491.2,197.2 490.0,199.7 488.2,202.0 M479.0,225.8 478.5,228.3 477.7,230.9 477.0,233.4 475.8,235.8 474.5,238.6 473.2,241.4 472.5,244.5 M443.2,258.2 444.6,260.5 446.2,262.7 447.5,265.0 449.5,269.0 450.0,271.7 450.9,274.3 451.5,277.0 M441.5,287.0 440.3,290.4 438.2,293.2 M535.8,177.0 534.8,179.5 534.0,182.0 533.2,184.6 532.0,187.0 M554.5,194.5 553.4,196.7 552.2,198.9 551.8,201.4 550.7,203.6 549.5,205.8 548.4,208.0 547.4,210.4 545.4,212.1 544.5,214.5 543.0,216.5 541.8,218.8 541.2,221.3 539.5,223.2 537.9,225.6 537.0,228.2 M530.8,249.5 530.2,252.1 529.6,254.7 528.5,257.1 527.5,259.5 526.9,262.0 526.6,264.5 526.5,267.0 M507.0,219.5 505.8,221.9 505.1,224.5 504.4,227.1 503.2,229.5 502.3,232.4 501.1,235.2 500.8,238.2 M543.2,244.5 541.5,246.8 540.8,249.5 539.2,251.8 538.2,254.5 536.8,256.5 535.4,258.5 534.5,260.8 M483.2,285.8 482.3,288.1 481.2,290.4 479.9,292.5 478.2,294.5 476.6,296.8 475.9,299.6 474.9,302.2 473.2,304.5 472.0,307.8 M510.8,279.5 510.4,282.2 509.6,284.7 508.2,287.0 505.8,289.5 M407.0,289.5 406.2,292.2 404.2,294.3 402.9,296.8 402.0,299.5 400.6,301.9 399.2,304.3 398.2,307.0 M238.8,316.8 238.0,319.2 236.3,321.1 235.0,323.3 233.8,325.5 M212.5,350.5 211.5,353.1 209.8,355.4 208.8,358.0 207.5,360.5 206.3,362.9 204.3,364.8 203.2,367.3 201.2,369.2 M268.8,355.5 267.4,358.4 266.3,361.4 265.0,364.2 M223.8,375.5 224.5,376.8 M315.0,338.0 313.7,340.5 312.6,343.0 310.8,345.3 310.0,348.0 M335.0,308.0 332.9,310.2 331.6,313.0 330.0,315.5 329.0,317.7 327.2,319.5 326.2,321.8 M360.0,316.8 359.4,319.4 357.7,321.6 356.7,324.1 355.9,326.7 355.0,329.2 353.8,331.5 352.4,333.7 351.5,336.1 349.6,338.0 348.8,340.5 346.8,342.9 344.5,345.1 342.5,347.5 341.5,350.0 340.9,352.7 340.7,355.4 340.0,358.0 339.4,361.0 338.3,363.8 337.5,366.8 337.1,369.4 335.5,371.6 335.0,374.2 334.1,376.6 332.6,378.6 332.2,381.1 331.1,383.3 330.0,385.5 329.2,387.9 328.1,390.0 327.3,392.4 326.5,394.7 325.0,396.8 M345.0,383.0 344.4,385.6 343.7,388.1 342.5,390.5 342.7,393.0 342.5,395.5 342.0,398.0 M366.2,370.5 365.6,373.1 363.8,375.3 363.0,377.9 362.6,380.6 361.2,383.0 359.9,385.3 359.3,388.0 358.1,390.4 357.5,393.0 356.1,395.1 354.6,397.2 353.5,399.4 352.5,401.8 350.5,403.6 349.4,406.1 347.5,408.0 M381.2,375.5 380.9,378.1 379.8,380.5 379.0,383.0 378.2,385.5 377.5,388.0 376.6,390.4 377.0,393.1 375.6,395.4 375.5,398.0 375.0,400.5 373.7,403.0 372.3,405.4 370.9,407.8 370.0,410.5 368.9,413.1 367.6,415.5 365.8,417.8 365.0,420.5 364.6,423.1 363.2,425.5 362.5,428.0 M419.5,308.0 417.9,310.8 417.1,313.9 415.8,316.8 M393.2,350.5 392.1,353.3 389.9,355.4 388.2,357.8 387.0,360.5 385.7,362.7 384.9,365.1 383.4,367.2 382.0,369.2 M420.8,335.5 419.5,337.9 418.5,340.3 417.8,343.0 417.0,345.5 M470.8,308.0 468.7,310.2 467.0,312.7 465.8,315.5 464.5,317.6 463.3,319.7 462.0,321.8 M437.0,385.5 436.0,388.1 434.3,390.4 433.6,393.2 432.0,395.5 431.2,398.8 429.5,401.8 M472.0,331.8 470.5,334.1 469.3,336.6 468.2,339.2 M469.5,349.2 467.9,352.2 467.0,355.5 M471.5,401.8 470.1,403.9 468.4,405.8 467.0,408.0 M497.0,371.8 498.7,369.8 499.7,367.5 501.1,365.4 502.0,363.0 503.5,360.8 505.4,358.9 507.0,356.8 509.1,355.0 510.6,352.8 512.0,350.5 513.3,348.0 514.3,345.4 515.7,343.0 517.0,340.5 518.1,338.1 518.2,335.5 519.0,333.0 M458.2,378.0 457.0,380.8 457.1,384.0 455.8,386.8 454.8,389.2 454.5,391.8 M460.8,410.5 459.7,412.9 458.7,415.4 458.2,418.0 M417.0,423.0 415.1,425.2 413.2,427.3 411.6,429.8 409.5,431.8 408.1,434.0 406.4,436.1 404.5,438.0 M534.5,351.8 533.3,354.1 533.0,356.9 531.6,359.2 530.8,361.8 M532.0,383.0 529.9,385.2 528.5,387.9 527.0,390.5 525.9,392.7 524.5,394.9 523.6,397.2 522.0,399.2 M565.8,405.5 566.3,403.0 567.5,400.9 568.6,398.7 570.2,396.7 570.8,394.2 572.4,391.5 573.6,388.6 574.5,385.5 575.3,382.2 577.0,379.2 M594.5,347.5 596.0,350.1 597.4,352.7 598.2,355.5 M612.0,359.2 615.0,362.5 M613.2,388.0 612.9,390.6 611.5,392.9 611.0,395.4 610.8,398.0 609.4,400.3 609.2,403.1 608.0,405.5 607.0,408.0 M547.0,326.8 548.2,324.2 549.3,321.7 550.8,319.2 552.7,316.9 554.1,314.2 555.8,311.8 M302.5,474.2 301.1,477.2 299.5,480.0 M366.2,485.5 364.5,487.4 361.9,488.2 360.0,490.0 M417.0,423.0 415.2,425.0 413.5,427.0 411.8,429.0 409.5,430.5 407.4,432.1 405.7,434.2 404.1,436.4 402.0,438.0 M407.0,481.8 406.5,484.2 406.5,486.8 405.8,489.2 M429.5,474.2 428.3,476.8 426.8,479.1 425.8,481.8 425.4,484.4 423.8,486.6 423.2,489.2 M449.0,474.2 447.5,476.3 446.4,478.7 444.5,480.5 443.2,482.9 442.9,485.5 442.0,488.0 M463.2,445.5 462.3,448.2 460.4,450.3 459.5,453.0 458.8,455.5 458.2,458.1 457.0,460.5 M585.8,451.8 586.6,454.4 588.2,456.8" fill="none" stroke="#30d020" stroke-width="0.9" stroke-dasharray="2.2 2 1.4 2.4 2.8 1.6"/>
<path d="M192.0,71.0 191.3,73.5 191.4,76.1 190.3,78.5 190.0,81.0 189.8,83.6 188.8,86.0 188.3,88.5 188.4,91.1 187.5,93.5 187.0,96.0 M171.2,143.5 169.5,146.5 M201.2,131.0 202.1,127.9 203.3,125.0 205.0,122.2 M236.2,71.0 235.2,73.4 234.8,76.1 233.8,78.5 M237.5,86.0 236.7,88.7 235.6,91.4 235.4,94.3 234.3,96.9 233.8,99.8 M235.0,129.8 235.9,126.8 237.2,124.0 238.0,121.0 M230.0,159.8 228.7,162.4 227.8,165.3 226.8,168.1 226.2,171.0 M277.0,129.8 275.6,132.2 274.7,135.0 272.8,137.2 270.9,139.5 270.0,142.2 268.4,144.3 267.3,146.6 266.5,149.1 265.1,151.3 263.8,153.5 262.8,156.2 261.0,158.4 260.0,161.0 258.8,163.5 M307.5,83.5 306.8,86.0 306.1,88.6 305.0,91.0 M307.0,93.5 306.2,96.0 305.4,98.4 305.5,101.1 304.2,103.5 303.8,106.0 302.8,108.4 302.4,110.9 302.0,113.4 301.8,116.0 301.2,118.5 M292.5,112.2 291.6,114.9 291.3,117.6 291.6,120.4 290.5,123.0 289.9,125.7 290.0,128.5 289.6,131.0 289.7,133.5 289.2,136.0 289.4,138.5 288.8,141.0 M316.2,131.0 315.2,133.4 315.0,136.0 M362.0,59.8 361.2,62.6 360.4,65.4 359.1,68.1 358.8,71.0 357.7,73.4 356.7,75.9 355.7,78.3 355.6,81.1 354.5,83.5 M354.5,83.5 352.9,85.8 351.9,88.3 351.4,91.2 350.3,93.7 348.8,96.0 347.6,98.5 346.7,101.2 345.3,103.6 344.2,106.2 342.5,108.5 341.3,110.7 340.2,112.9 339.1,115.1 338.8,117.7 337.5,119.8 M331.2,136.0 329.8,138.3 329.7,141.1 328.0,143.3 327.5,146.0 326.9,148.5 326.0,151.0 324.7,153.3 324.1,155.9 323.8,158.5 323.4,161.1 322.4,163.5 321.6,166.0 321.1,168.5 320.5,171.1 319.7,173.6 318.8,176.0 M358.0,97.2 357.1,99.5 356.7,101.9 355.0,103.8 354.3,106.1 353.8,108.5 352.0,111.2 351.6,114.5 350.0,117.2 M377.5,99.8 376.0,101.9 375.2,104.5 374.1,106.8 372.6,109.0 370.9,111.0 370.0,113.5 368.7,115.9 368.2,118.6 367.4,121.1 365.6,123.3 365.0,126.0 364.0,128.8 362.9,131.6 362.6,134.6 361.2,137.2 M350.0,163.5 350.0,166.1 349.1,168.5 348.8,171.0 M417.0,86.0 415.5,88.2 414.5,90.6 413.5,93.0 412.0,95.2 410.3,97.2 409.5,99.8 408.6,102.4 406.7,104.6 405.8,107.3 404.5,109.8 403.2,112.2 402.1,114.6 401.7,117.3 400.8,119.8 M444.5,83.5 443.6,86.2 442.1,88.5 441.0,91.1 439.0,93.3 438.2,96.0 436.5,98.3 435.7,101.0 434.8,103.6 432.8,105.8 432.0,108.5 M485.0,58.0 484.2,60.7 482.9,63.2 482.3,66.1 480.8,68.5 479.7,71.1 478.7,73.7 477.1,76.0 476.2,78.7 474.5,81.0 473.7,83.5 472.2,85.6 471.0,87.9 469.4,90.0 468.2,92.2 M457.0,112.2 456.4,115.1 455.0,117.6 455.1,120.6 453.8,123.2 453.2,126.0 452.3,128.5 452.2,131.1 450.6,133.4 449.8,135.9 449.5,138.5 M528.2,58.5 527.4,61.0 526.0,63.1 524.3,65.1 523.5,67.7 522.0,69.8 520.3,71.9 518.6,74.0 517.5,76.5 516.1,78.8 514.5,81.0 513.3,83.3 511.8,85.4 510.5,87.6 509.4,89.9 508.2,92.2 505.8,96.0 M542.0,71.0 541.6,73.6 540.6,76.0 539.9,78.4 539.5,81.0 538.5,83.2 538.0,85.7 537.0,87.9 536.2,90.2 535.4,92.5 534.5,94.8 533.8,97.2 532.0,99.2 531.7,101.8 529.9,103.7 528.9,106.0 528.2,108.5 527.8,111.2 526.4,113.5 525.1,115.9 524.5,118.5 M519.5,128.5 518.7,130.9 517.0,132.9 516.7,135.5 515.3,137.6 514.7,140.1 513.2,142.2 512.2,144.7 510.7,147.1 510.5,149.9 508.8,152.1 508.0,154.7 507.0,157.2 505.8,159.6 505.3,162.2 505.0,164.8 503.6,167.1 503.2,169.8 502.0,172.9 500.8,176.0 M507.0,102.2 505.3,104.3 503.7,106.5 502.0,108.5 500.9,110.7 499.8,112.9 498.2,114.8 M495.8,118.5 493.8,120.8 492.9,123.8 490.8,126.0 489.6,128.4 488.5,130.9 488.3,133.6 487.0,136.0 485.6,138.3 484.8,140.9 483.6,143.3 483.2,146.1 482.0,148.5 M475.8,157.2 474.1,159.4 472.7,161.7 471.1,163.9 469.5,166.0 468.1,168.6 466.8,171.3 465.2,173.7 463.2,176.0 M557.0,138.5 556.4,141.1 555.8,143.7 554.5,146.0 552.8,148.3 552.4,151.2 550.8,153.5 549.5,156.0 548.4,158.6 547.2,161.1 545.5,163.4 544.0,165.8 543.2,168.5 542.2,171.1 540.6,173.4 539.5,176.0 M208.8,188.2 205.5,191.5 M222.5,179.5 221.8,182.4 220.6,185.1 219.3,187.8 218.8,190.8 217.3,193.1 216.3,195.8 215.1,198.3 213.8,200.8 M176.2,213.2 177.5,212.0 M193.8,225.8 192.4,227.8 191.4,230.1 191.2,232.7 190.2,235.0 188.8,237.0 188.0,239.5 187.3,241.9 187.3,244.5 186.7,247.0 186.2,249.5 M230.0,198.2 228.9,200.4 227.7,202.6 227.0,205.0 225.9,207.2 225.0,209.5 224.2,211.9 222.2,213.7 221.5,216.2 220.0,218.2 M248.8,207.0 249.6,204.6 249.3,202.0 249.5,199.4 250.2,197.0 250.7,194.5 251.2,192.0 M240.0,223.2 238.4,225.7 237.1,228.4 234.9,230.5 233.8,233.2 232.7,235.8 230.9,238.1 230.3,240.9 228.8,243.2 M298.8,177.0 297.6,179.3 295.9,181.3 295.5,184.0 293.8,186.0 292.5,188.2 M307.0,190.8 305.3,192.8 304.0,195.1 303.2,197.8 301.8,200.0 300.0,202.0 298.5,204.8 296.2,207.0 M337.5,177.0 335.8,179.4 333.6,181.2 332.0,183.7 330.0,185.8 328.3,188.1 326.7,190.5 324.2,192.1 322.5,194.5 M345.0,177.0 344.3,179.6 343.1,182.0 342.0,184.5 340.6,186.8 340.0,189.5 338.7,192.2 336.6,194.3 335.1,196.9 333.8,199.5 M331.2,209.5 330.2,212.1 328.9,214.6 327.6,217.1 326.0,219.4 325.0,222.0 324.2,224.7 322.8,227.1 321.0,229.4 320.0,232.0 M306.2,230.8 307.1,228.4 308.8,226.6 310.0,224.5 M310.0,243.2 309.0,245.6 307.6,247.7 306.1,249.7 305.0,252.0 M298.8,239.5 297.4,242.1 295.6,244.5 294.2,247.1 292.5,249.5 M257.0,264.5 256.1,267.0 254.9,269.4 253.9,271.9 253.0,274.3 252.5,277.0 252.4,279.6 251.5,282.1 251.0,284.6 250.0,287.0 M357.5,264.5 358.6,262.3 360.5,260.6 362.3,259.0 363.8,257.0 M370.0,237.0 370.6,234.3 371.9,232.0 373.1,229.5 374.1,227.1 375.0,224.5 375.2,221.9 375.9,219.4 377.1,217.1 377.4,214.5 377.9,211.9 378.8,209.5 379.4,206.5 380.9,203.8 381.2,200.8 M268.8,272.0 267.6,274.6 266.3,277.0 265.0,279.5 M262.5,284.5 260.2,286.3 258.9,289.0 257.1,291.3 255.0,293.2 253.2,295.0 252.1,297.2 250.7,299.2 248.8,300.8 M345.0,263.2 343.3,265.7 341.3,268.0 340.0,270.8 339.1,273.2 337.5,275.1 336.0,277.1 335.0,279.5 M381.2,272.0 379.7,274.4 379.0,277.1 377.6,279.5 376.2,282.0 374.7,284.3 373.4,286.8 372.8,289.7 371.2,292.0 370.3,294.6 368.8,297.0 367.5,299.5 366.2,302.0 365.1,304.6 363.8,307.0 M192.5,292.0 192.4,294.6 191.2,297.0 M422.0,239.5 420.7,241.6 420.4,244.2 419.0,246.2 417.6,248.3 417.0,250.8 M435.8,263.2 434.9,266.0 432.9,268.1 432.2,270.9 430.8,273.2 429.4,276.3 428.2,279.5 M500.8,177.0 499.6,179.5 498.2,182.0 496.6,184.3 496.1,187.2 494.5,189.5 493.5,192.1 491.8,194.4 491.2,197.2 490.0,199.7 488.2,202.0 M479.0,225.8 478.5,228.3 477.7,230.9 477.0,233.4 475.8,235.8 474.5,238.6 473.2,241.4 472.5,244.5 M443.2,258.2 444.6,260.5 446.2,262.7 447.5,265.0 449.5,269.0 450.0,271.7 450.9,274.3 451.5,277.0 M441.5,287.0 440.3,290.4 438.2,293.2 M535.8,177.0 534.8,179.5 534.0,182.0 533.2,184.6 532.0,187.0 M554.5,194.5 553.4,196.7 552.2,198.9 551.8,201.4 550.7,203.6 549.5,205.8 548.4,208.0 547.4,210.4 545.4,212.1 544.5,214.5 543.0,216.5 541.8,218.8 541.2,221.3 539.5,223.2 537.9,225.6 537.0,228.2 M530.8,249.5 530.2,252.1 529.6,254.7 528.5,257.1 527.5,259.5 526.9,262.0 526.6,264.5 526.5,267.0 M507.0,219.5 505.8,221.9 505.1,224.5 504.4,227.1 503.2,229.5 502.3,232.4 501.1,235.2 500.8,238.2 M543.2,244.5 541.5,246.8 540.8,249.5 539.2,251.8 538.2,254.5 536.8,256.5 535.4,258.5 534.5,260.8 M483.2,285.8 482.3,288.1 481.2,290.4 479.9,292.5 478.2,294.5 476.6,296.8 475.9,299.6 474.9,302.2 473.2,304.5 472.0,307.8 M510.8,279.5 510.4,282.2 509.6,284.7 508.2,287.0 505.8,289.5 M407.0,289.5 406.2,292.2 404.2,294.3 402.9,296.8 402.0,299.5 400.6,301.9 399.2,304.3 398.2,307.0 M238.8,316.8 238.0,319.2 236.3,321.1 235.0,323.3 233.8,325.5 M212.5,350.5 211.5,353.1 209.8,355.4 208.8,358.0 207.5,360.5 206.3,362.9 204.3,364.8 203.2,367.3 201.2,369.2 M268.8,355.5 267.4,358.4 266.3,361.4 265.0,364.2 M223.8,375.5 224.5,376.8 M315.0,338.0 313.7,340.5 312.6,343.0 310.8,345.3 310.0,348.0 M335.0,308.0 332.9,310.2 331.6,313.0 330.0,315.5 329.0,317.7 327.2,319.5 326.2,321.8 M360.0,316.8 359.4,319.4 357.7,321.6 356.7,324.1 355.9,326.7 355.0,329.2 353.8,331.5 352.4,333.7 351.5,336.1 349.6,338.0 348.8,340.5 346.8,342.9 344.5,345.1 342.5,347.5 341.5,350.0 340.9,352.7 340.7,355.4 340.0,358.0 339.4,361.0 338.3,363.8 337.5,366.8 337.1,369.4 335.5,371.6 335.0,374.2 334.1,376.6 332.6,378.6 332.2,381.1 331.1,383.3 330.0,385.5 329.2,387.9 328.1,390.0 327.3,392.4 326.5,394.7 325.0,396.8 M345.0,383.0 344.4,385.6 343.7,388.1 342.5,390.5 342.7,393.0 342.5,395.5 342.0,398.0 M366.2,370.5 365.6,373.1 363.8,375.3 363.0,377.9 362.6,380.6 361.2,383.0 359.9,385.3 359.3,388.0 358.1,390.4 357.5,393.0 356.1,395.1 354.6,397.2 353.5,399.4 352.5,401.8 350.5,403.6 349.4,406.1 347.5,408.0 M381.2,375.5 380.9,378.1 379.8,380.5 379.0,383.0 378.2,385.5 377.5,388.0 376.6,390.4 377.0,393.1 375.6,395.4 375.5,398.0 375.0,400.5 373.7,403.0 372.3,405.4 370.9,407.8 370.0,410.5 368.9,413.1 367.6,415.5 365.8,417.8 365.0,420.5 364.6,423.1 363.2,425.5 362.5,428.0 M419.5,308.0 417.9,310.8 417.1,313.9 415.8,316.8 M393.2,350.5 392.1,353.3 389.9,355.4 388.2,357.8 387.0,360.5 385.7,362.7 384.9,365.1 383.4,367.2 382.0,369.2 M420.8,335.5 419.5,337.9 418.5,340.3 417.8,343.0 417.0,345.5 M470.8,308.0 468.7,310.2 467.0,312.7 465.8,315.5 464.5,317.6 463.3,319.7 462.0,321.8 M437.0,385.5 436.0,388.1 434.3,390.4 433.6,393.2 432.0,395.5 431.2,398.8 429.5,401.8 M472.0,331.8 470.5,334.1 469.3,336.6 468.2,339.2 M469.5,349.2 467.9,352.2 467.0,355.5 M471.5,401.8 470.1,403.9 468.4,405.8 467.0,408.0 M497.0,371.8 498.7,369.8 499.7,367.5 501.1,365.4 502.0,363.0 503.5,360.8 505.4,358.9 507.0,356.8 509.1,355.0 510.6,352.8 512.0,350.5 513.3,348.0 514.3,345.4 515.7,343.0 517.0,340.5 518.1,338.1 518.2,335.5 519.0,333.0 M458.2,378.0 457.0,380.8 457.1,384.0 455.8,386.8 454.8,389.2 454.5,391.8 M460.8,410.5 459.7,412.9 458.7,415.4 458.2,418.0 M417.0,423.0 415.1,425.2 413.2,427.3 411.6,429.8 409.5,431.8 408.1,434.0 406.4,436.1 404.5,438.0 M534.5,351.8 533.3,354.1 533.0,356.9 531.6,359.2 530.8,361.8 M532.0,383.0 529.9,385.2 528.5,387.9 527.0,390.5 525.9,392.7 524.5,394.9 523.6,397.2 522.0,399.2 M565.8,405.5 566.3,403.0 567.5,400.9 568.6,398.7 570.2,396.7 570.8,394.2 572.4,391.5 573.6,388.6 574.5,385.5 575.3,382.2 577.0,379.2 M594.5,347.5 596.0,350.1 597.4,352.7 598.2,355.5 M612.0,359.2 615.0,362.5 M613.2,388.0 612.9,390.6 611.5,392.9 611.0,395.4 610.8,398.0 609.4,400.3 609.2,403.1 608.0,405.5 607.0,408.0 M547.0,326.8 548.2,324.2 549.3,321.7 550.8,319.2 552.7,316.9 554.1,314.2 555.8,311.8 M302.5,474.2 301.1,477.2 299.5,480.0 M366.2,485.5 364.5,487.4 361.9,488.2 360.0,490.0 M417.0,423.0 415.2,425.0 413.5,427.0 411.8,429.0 409.5,430.5 407.4,432.1 405.7,434.2 404.1,436.4 402.0,438.0 M407.0,481.8 406.5,484.2 406.5,486.8 405.8,489.2 M429.5,474.2 428.3,476.8 426.8,479.1 425.8,481.8 425.4,484.4 423.8,486.6 423.2,489.2 M449.0,474.2 447.5,476.3 446.4,478.7 444.5,480.5 443.2,482.9 442.9,485.5 442.0,488.0 M463.2,445.5 462.3,448.2 460.4,450.3 459.5,453.0 458.8,455.5 458.2,458.1 457.0,460.5 M585.8,451.8 586.6,454.4 588.2,456.8" fill="none" stroke="#c85818" stroke-width="0.9" stroke-dasharray="1 8.2 0.8 7.1"/>
<path d="M265.8,69.8 264.5,74.0 M397.0,59.8 396.0,62.1 394.9,64.3 393.6,66.5 392.0,68.5 391.2,71.2 389.8,73.6 388.4,76.1 387.0,78.5 386.2,81.1 384.7,83.4 384.2,86.1 383.0,88.5 382.0,91.0 M453.2,58.5 452.9,61.1 451.4,63.4 450.6,65.9 450.1,68.4 449.5,71.0 448.7,73.6 447.8,76.1 446.7,78.6 445.5,81.0 444.5,83.5 M544.5,108.5 542.9,110.5 542.2,113.0 540.3,114.8 539.5,117.2 538.5,119.6 537.2,121.8 535.7,123.8 534.5,126.0 533.6,128.7 532.1,131.1 530.3,133.3 529.5,136.0 M201.2,237.0 200.3,239.2 198.7,241.1 197.5,243.2 196.1,246.4 193.8,249.0 M265.0,208.2 263.5,210.9 262.7,213.7 262.4,216.7 261.2,219.5 260.6,222.4 258.9,225.0 258.2,227.9 257.5,230.8 M281.2,262.5 283.8,263.3 286.2,264.5 M326.2,202.0 326.5,202.2 M392.0,179.5 391.1,182.2 389.6,184.5 388.7,187.2 387.0,189.5 386.1,192.0 385.0,194.5 384.5,197.2 382.9,199.4 382.0,202.0 M448.2,215.8 447.7,218.2 448.4,220.8 447.3,223.2 447.6,225.7 447.7,228.3 447.5,230.8 446.7,233.5 446.9,236.4 445.7,239.1 445.8,242.0 M442.0,250.8 440.5,253.1 439.6,255.8 438.6,258.4 436.8,260.6 435.8,263.2 M442.0,278.2 444.4,279.7 447.0,280.8 449.5,284.0 M497.0,277.0 494.8,279.2 492.0,280.8 M223.8,338.0 227.5,339.2 M226.2,338.0 224.5,339.7 222.3,340.8 220.8,342.9 218.8,344.2 216.3,346.0 214.8,348.6 212.5,350.5 M268.8,333.5 271.2,334.4 273.9,334.8 276.2,336.0 278.8,336.1 281.3,336.2 283.8,336.8 M297.5,368.0 300.3,367.4 303.1,367.3 305.9,367.0 308.8,366.8 M302.5,364.2 302.6,367.4 303.0,370.5 M415.8,316.8 414.3,319.0 413.0,321.5 411.4,323.6 409.5,325.6 408.3,328.1 407.0,330.5 405.1,332.8 403.8,335.6 402.0,338.0 M409.5,368.0 409.7,371.2 409.0,374.2 M434.0,318.0 434.0,320.8 433.7,323.6 433.6,326.5 433.2,329.2 M445.8,368.0 444.5,370.8 444.5,373.9 443.2,376.8 442.9,380.0 441.5,383.0 439.1,384.0 437.0,385.5 M510.8,376.8 511.9,378.9 513.2,381.0 M581.5,365.5 582.5,363.1 583.9,360.9 585.9,359.1 587.0,356.8 589.3,354.7 590.9,352.2 592.5,349.7 594.5,347.5 M407.0,444.2 405.5,447.0 403.2,449.2" fill="none" stroke="#30d020" stroke-width="0.9" stroke-dasharray="2 2.5 1 3"/>
<path d="M193.0,63.5 192.9,66.0 192.7,68.6 192.0,71.0 M187.0,96.0 186.4,99.1 185.3,102.0 183.8,104.8 182.6,107.3 181.2,109.8 M203.8,76.0 202.7,78.5 202.0,81.0 M163.8,83.5 162.6,85.9 162.5,88.5 M158.8,99.0 159.5,103.0 M145.5,107.2 145.8,107.8 M172.5,111.5 172.0,116.0 M162.5,118.5 162.6,121.1 163.8,123.5 162.0,125.4 159.4,126.2 157.5,128.0 155.1,128.8 152.6,129.5 150.0,129.8 M163.8,123.5 165.0,125.5 M177.5,127.2 177.1,130.3 176.0,133.1 175.0,136.0 173.4,138.3 172.8,141.2 171.2,143.5 170.0,146.0 M185.0,136.0 187.6,134.2 190.0,132.2 193.1,130.9 196.2,129.8 198.7,130.4 201.2,131.0 M205.0,122.2 205.6,119.6 207.1,117.3 207.7,114.7 208.8,112.2 209.8,110.1 211.3,108.1 212.5,106.0 M192.5,102.2 192.4,105.2 192.4,108.1 192.0,111.0 191.2,113.8 190.8,116.6 190.8,119.5 190.0,122.2 M200.0,94.8 199.3,97.2 198.8,99.8 M238.8,62.2 237.9,65.2 236.7,68.0 236.2,71.0 M233.8,78.5 232.2,80.6 231.9,83.3 230.5,85.4 229.0,87.5 228.5,90.1 227.0,92.2 M246.2,64.8 245.4,67.9 244.5,71.0 M242.5,76.0 241.7,78.7 239.8,80.9 238.5,83.4 237.5,86.0 M233.8,99.8 232.8,102.6 232.0,105.6 231.2,108.5 231.9,111.0 232.5,113.5 M228.8,63.5 226.2,66.0 M215.0,108.5 217.7,106.9 220.0,104.8 223.3,104.3 226.2,103.0 M222.5,104.8 222.1,107.3 221.5,109.7 221.2,112.2 221.5,115.2 220.5,118.1 220.5,121.0 M211.2,126.0 215.0,125.5 216.8,127.1 218.8,128.5 222.0,128.4 225.0,127.2 227.3,129.4 230.0,131.0 232.4,130.1 235.0,129.8 M217.5,128.5 218.0,132.2 M223.8,129.8 224.6,132.2 224.5,134.8 M253.8,111.5 253.3,114.4 252.5,117.1 251.2,119.8 250.0,122.2 M245.0,126.0 244.6,128.7 243.1,130.9 242.5,133.5 241.9,136.4 240.9,139.2 239.8,142.0 238.8,144.8 237.1,147.7 236.2,151.0 M236.2,151.0 235.1,153.5 233.2,155.4 231.5,157.5 230.0,159.8 M226.2,171.0 225.9,173.6 225.0,176.0 M236.2,152.2 238.2,154.1 240.0,156.0 241.2,159.8 M237.5,156.0 237.4,158.5 236.7,161.0 236.4,163.5 237.0,166.0 236.8,168.5 236.2,171.0 M211.2,142.2 210.5,146.0 M226.2,139.8 226.7,142.4 226.8,145.2 226.6,147.9 226.7,150.6 227.1,153.3 227.0,156.0 M206.2,158.5 206.6,161.3 206.0,164.0 205.9,166.8 205.6,169.5 205.5,172.2 M222.5,163.5 219.9,163.4 217.5,164.1 215.0,164.8 213.5,167.0 211.9,169.2 210.3,171.4 209.4,174.0 207.5,176.0 M158.8,153.0 161.2,153.9 163.8,154.0 M183.0,156.0 181.2,158.3 180.0,161.0 M173.8,163.5 172.0,167.2 M267.5,61.5 266.5,64.2 266.0,66.9 265.8,69.8 M282.5,61.5 283.1,65.0 283.5,68.5 282.9,70.9 282.4,73.3 281.2,75.5 279.7,77.7 278.8,80.3 277.0,82.2 277.1,85.1 276.6,87.9 276.2,90.7 275.5,93.5 275.4,96.0 275.5,98.5 275.3,101.1 274.5,103.5 M262.5,87.2 262.4,89.8 261.9,92.3 261.1,94.8 261.0,97.4 259.6,99.7 259.5,102.2 M297.5,61.5 296.6,63.8 296.4,66.4 295.5,68.7 294.5,71.0 294.3,73.5 293.8,76.0 293.7,78.6 292.5,80.9 292.5,83.5 291.3,86.1 291.3,88.9 290.6,91.6 290.4,94.4 289.8,97.1 288.8,99.8 288.0,102.6 287.1,105.5 285.6,108.1 285.0,111.0 284.4,114.2 283.0,117.2 M271.2,118.5 273.8,120.9 275.5,124.0 275.8,127.0 277.0,129.8 M286.2,118.0 283.1,118.8 280.0,119.8 278.0,122.2 275.5,124.0 M258.8,163.5 257.9,165.9 257.9,168.5 257.5,171.1 256.4,173.4 256.2,176.0 M262.5,122.2 262.2,125.0 262.6,127.8 262.9,130.5 263.2,133.3 263.8,136.0 M275.0,138.5 275.4,141.5 276.6,144.3 277.0,147.2 M311.2,61.5 314.2,61.4 317.1,61.0 320.0,61.0 322.5,60.6 325.0,60.8 327.5,61.5 330.1,62.9 332.5,64.8 334.2,67.1 335.5,69.8 M311.2,61.5 310.6,64.6 309.9,67.8 310.0,71.0 309.6,73.5 308.5,75.9 308.0,78.4 307.5,80.9 307.5,83.5 M303.8,88.5 305.4,91.0 307.0,93.5 M301.2,118.5 301.3,121.0 300.2,123.5 300.4,126.0 299.5,128.5 299.5,131.0 299.1,133.5 299.9,136.0 300.0,138.5 300.0,141.0 M300.0,96.0 297.9,97.8 296.5,100.0 295.0,102.2 294.7,104.8 294.1,107.3 293.5,109.8 292.5,112.2 M288.8,141.0 288.6,143.6 287.0,145.9 286.7,148.5 286.2,151.0 285.2,153.4 285.0,156.0 284.2,158.5 282.9,160.9 282.5,163.5 M312.5,111.0 311.7,113.4 312.0,116.1 311.5,118.5 311.1,121.0 310.7,123.5 310.0,126.0 310.2,128.8 310.9,131.6 311.0,134.4 311.2,137.2 312.1,139.7 311.6,142.3 312.5,144.8 M316.2,118.5 316.3,121.0 316.2,123.5 315.8,126.0 316.3,128.5 316.2,131.0 M300.0,141.0 300.5,143.5 301.5,145.9 301.6,148.5 302.0,151.0 302.6,153.5 302.5,156.0 M305.0,151.0 307.4,152.2 309.0,154.6 311.2,156.0 311.9,158.5 311.9,161.0 311.9,163.5 312.5,166.0 M310.5,148.5 310.1,151.0 310.0,153.5 309.5,156.0 M292.5,156.0 293.5,159.1 294.5,162.2 295.3,165.4 296.2,168.5 M275.0,156.0 273.9,158.4 273.7,161.1 272.5,163.5 271.8,166.6 271.2,169.8 M284.5,159.8 283.7,162.8 282.6,165.7 281.2,168.5 280.5,171.0 280.4,173.5 280.0,176.0 M347.5,59.8 347.3,62.6 347.0,65.4 346.7,68.2 347.0,71.0 346.8,73.7 346.4,76.4 346.2,79.1 346.0,81.8 345.5,84.5 345.5,87.2 M352.5,85.5 355.0,86.4 357.5,87.2 M337.5,119.8 336.3,122.2 335.3,124.7 334.9,127.4 333.1,129.6 332.5,132.2 331.2,136.0 M360.0,91.0 358.9,94.1 358.0,97.2 M350.0,117.2 348.8,121.0 M381.2,91.0 380.2,94.0 379.2,97.0 377.5,99.8 M361.2,137.2 360.4,140.0 358.6,142.2 357.5,144.8 M347.5,133.5 347.1,136.0 347.0,138.6 345.5,140.9 345.5,143.5 M355.0,152.2 352.5,152.9 349.9,153.6 347.5,154.8 345.9,156.9 343.5,158.2 342.2,160.7 340.0,162.2 338.7,164.6 338.2,167.3 337.4,169.8 336.2,172.2 M351.2,152.2 350.9,155.1 350.2,157.8 350.6,160.7 350.0,163.5 M335.0,121.0 333.8,123.5 M177.5,63.0 177.8,63.2 M204.5,62.5 204.8,62.8 M218.0,62.5 218.5,62.5 M586.5,58.5 587.5,55.5 590.2,55.5 591.0,58.5 M430.8,58.5 430.3,61.4 429.3,64.2 428.8,67.1 427.5,69.8 M421.5,78.5 420.2,81.1 419.0,83.8 417.0,86.0 M400.8,119.8 400.6,122.6 400.2,125.4 399.7,128.2 400.0,131.0 399.8,133.5 398.9,135.9 398.7,138.5 398.5,141.0 398.2,143.5 398.1,146.0 397.9,148.5 398.0,151.0 397.7,153.5 397.0,156.0 M400.0,129.8 403.5,130.1 407.0,131.0 409.9,132.2 412.5,134.0 M432.0,108.5 430.9,111.5 429.6,114.4 428.2,117.2 427.9,120.5 426.5,123.5 M474.5,57.2 474.9,60.4 475.0,63.5 474.4,66.0 473.8,68.5 473.2,71.0 M468.2,92.2 466.7,94.7 464.9,97.1 463.4,99.7 462.0,102.2 460.5,104.6 459.1,107.1 458.4,109.8 457.0,112.2 M449.5,138.5 448.4,141.4 447.3,144.2 446.5,147.2 446.3,150.1 447.1,152.9 446.8,155.7 447.0,158.5 446.9,161.0 446.4,163.5 446.4,166.0 446.2,168.5 446.5,171.0 M493.2,58.5 492.5,61.0 491.6,63.4 491.2,66.0 490.8,68.5 489.6,70.7 489.0,73.1 488.2,75.5 487.1,77.7 485.8,79.8 483.2,83.5 M483.2,83.5 485.4,85.5 487.7,87.4 489.5,89.8 M489.5,89.8 489.4,92.5 489.4,95.2 489.3,98.0 489.5,100.8 489.5,103.5 490.0,106.0 489.0,108.5 489.0,111.0 489.2,113.5 489.0,116.0 489.0,118.5 M499.5,58.0 502.0,58.5 504.6,58.2 507.0,59.0 509.4,60.3 512.1,60.9 514.5,62.2 M500.8,71.0 500.8,74.8 M543.2,57.2 541.5,59.2 540.3,61.7 538.2,63.5 537.0,65.9 535.3,68.0 533.3,69.9 532.0,72.2 M527.0,81.0 525.6,83.3 523.8,85.3 522.7,87.9 520.8,89.8 518.5,92.0 515.8,93.5 M524.5,118.5 522.8,120.8 522.0,123.5 521.0,126.1 519.5,128.5 M497.0,107.2 494.9,110.1 492.0,112.2 490.6,115.1 488.2,117.2 M478.2,118.5 480.3,120.6 482.0,123.0 484.5,123.3 487.0,124.0 M482.0,148.5 480.6,150.8 479.0,152.9 476.9,154.7 475.8,157.2 M529.5,136.0 527.0,138.5 M525.8,139.0 528.9,139.2 532.0,138.5 M544.5,137.2 542.2,138.6 540.2,140.5 538.2,142.2 536.2,144.0 534.5,146.1 533.2,148.5 532.0,150.6 530.5,152.5 529.5,154.8 M542.0,133.5 543.1,136.1 543.2,139.0 M519.0,153.5 517.7,156.3 516.9,159.4 515.8,162.2 514.4,165.1 513.4,168.0 512.5,171.0 M457.0,126.0 458.7,127.7 460.0,129.8 M462.5,133.5 461.9,136.4 461.4,139.4 460.8,142.2 M456.5,147.2 455.3,149.9 453.8,152.4 452.0,154.8 450.0,156.9 447.5,158.5 M463.2,153.5 461.6,155.4 460.8,157.7 459.5,159.8 458.2,163.5 M394.5,166.0 394.8,166.5 M554.5,122.2 555.8,124.8 M382.0,127.2 383.2,129.8 M147.5,182.0 150.9,181.0 153.8,179.0 M151.2,199.5 152.5,196.5 155.0,195.8 M163.8,207.0 165.6,205.1 167.5,203.2 M147.5,215.0 150.1,215.6 152.5,217.0 156.2,214.5 M182.5,180.8 184.4,179.2 186.4,177.9 188.8,177.0 M203.8,177.0 203.0,179.6 202.3,182.2 201.2,184.6 200.0,187.0 M213.8,200.8 212.2,202.6 210.7,204.6 209.2,206.5 207.5,208.2 M176.2,213.2 177.5,210.5 179.4,208.1 181.2,205.8 184.1,204.0 186.2,201.5 M190.0,202.0 192.4,201.0 195.0,200.8 197.5,202.0 200.0,203.2 M170.0,224.5 170.5,227.0 171.2,229.5 174.3,230.1 177.5,230.0 M171.2,229.5 170.9,232.1 170.2,234.6 169.6,237.1 168.8,239.5 167.6,242.0 166.2,244.5 M200.0,219.5 198.0,221.6 195.5,223.3 193.8,225.8 M186.2,249.5 185.5,252.2 183.9,254.6 182.1,256.8 180.9,259.3 180.0,262.0 179.2,264.4 178.7,266.9 178.8,269.5 M152.5,270.8 153.9,268.1 155.5,265.5 157.5,263.2 159.8,261.7 162.5,260.8 165.0,259.5 167.5,259.5 170.0,259.7 172.5,259.0 175.5,260.7 178.8,262.0 M220.0,218.2 218.3,220.5 217.4,223.2 216.4,225.8 215.4,228.4 213.8,230.8 212.7,233.4 211.1,235.7 209.8,238.2 209.1,240.9 207.5,243.2 206.9,245.7 205.5,247.7 204.4,250.0 203.6,252.3 202.5,254.5 M222.5,237.0 220.8,239.0 218.8,240.8 216.5,242.3 215.0,244.5 213.2,246.9 211.3,249.3 210.0,252.0 M245.0,198.2 244.1,201.1 243.4,204.0 242.5,206.8 241.2,209.5 240.5,212.2 240.5,215.0 240.7,217.8 240.8,220.5 240.0,223.2 M240.0,223.2 241.7,221.2 243.5,219.2 245.0,217.0 245.9,214.5 246.6,211.9 248.0,209.6 248.8,207.0 M251.2,192.0 251.9,189.5 251.9,186.9 253.1,184.6 253.5,182.1 253.8,179.5 M228.8,243.2 227.8,245.6 226.0,247.5 225.2,249.9 223.8,252.0 222.4,254.8 222.1,257.8 221.2,260.8 M220.0,263.2 217.7,266.0 215.0,268.2 213.3,270.1 211.2,271.5 M241.2,245.8 243.0,247.8 245.0,249.5 247.0,248.0 248.0,245.6 250.0,244.0 251.8,241.1 253.8,238.2 M271.2,178.2 271.3,180.8 270.2,183.2 270.5,185.8 273.4,185.7 276.2,186.5 M270.5,185.8 270.4,188.6 269.8,191.4 268.8,194.0 267.7,196.7 267.5,199.5 266.3,202.3 265.6,205.3 265.0,208.2 M277.5,187.0 277.9,189.5 277.1,192.0 277.3,194.5 277.2,197.0 277.0,199.5 276.4,202.1 275.7,204.6 275.1,207.2 273.8,209.5 273.2,212.1 272.4,214.5 271.0,216.9 271.1,219.6 270.0,222.0 268.3,224.3 267.5,227.0 M285.0,183.2 287.7,184.9 290.0,187.0 293.8,186.5 M285.8,184.5 285.8,187.3 285.1,190.0 284.9,192.7 285.2,195.5 285.0,198.2 M292.5,187.0 292.9,189.5 292.4,192.0 292.4,194.5 291.7,197.0 292.4,199.5 292.0,202.0 M296.2,207.0 294.6,209.3 294.0,212.1 292.3,214.4 291.2,217.0 290.2,219.4 290.2,222.0 289.6,224.6 288.8,227.0 M310.0,177.0 310.3,180.1 311.5,182.9 312.5,185.8 M322.5,194.5 320.6,196.8 319.4,199.4 318.0,202.0 317.3,204.5 318.1,207.0 317.7,209.5 317.2,212.0 317.0,214.5 316.3,217.3 316.1,220.1 316.6,222.9 316.2,225.8 M333.8,199.5 332.8,201.9 332.2,204.4 331.8,207.0 331.2,209.5 M315.0,217.0 317.4,216.1 320.0,215.8 M301.2,232.0 303.6,230.9 306.2,230.8 M280.0,229.5 280.6,232.4 280.3,235.4 281.2,238.2 282.8,240.7 285.0,242.5 M283.8,227.0 282.6,230.0 282.5,233.2 M293.8,228.2 291.4,230.9 288.8,233.2 286.2,237.0 M295.0,213.2 295.1,216.1 294.8,218.9 294.1,221.7 293.8,224.5 M315.0,237.0 313.2,238.9 311.7,241.2 310.0,243.2 M308.8,245.8 309.0,248.9 310.0,252.0 310.0,254.8 310.8,257.6 310.2,260.5 310.8,263.2 M292.5,249.5 291.0,251.9 290.0,254.5 290.2,257.4 289.9,260.3 289.5,263.2 M261.2,233.2 261.4,236.2 261.3,239.1 260.8,242.0 260.9,244.6 261.8,247.0 262.5,249.5 261.4,252.1 260.0,254.5 M264.2,228.2 263.2,232.0 M272.5,240.8 272.2,243.3 271.1,245.7 271.2,248.2 270.0,250.7 268.8,253.2 M278.8,248.2 279.0,250.8 278.4,253.2 278.8,255.8 M257.5,254.5 257.2,257.0 256.7,259.5 257.6,262.0 257.0,264.5 M250.0,287.0 249.8,289.6 248.5,291.9 248.4,294.5 247.5,296.9 247.5,299.5 247.2,302.0 246.3,304.4 246.2,307.0 M259.5,265.8 262.9,266.1 266.2,266.5 M267.5,263.2 266.2,267.0 M273.8,265.8 277.5,263.2 281.2,262.5 M286.2,264.5 290.0,264.0 292.4,265.5 295.0,266.5 297.8,265.3 300.0,263.2 302.4,262.2 305.0,262.0 307.5,264.5 311.2,263.2 314.3,264.2 317.5,265.0 320.7,264.3 323.8,263.2 326.8,262.6 330.0,262.5 332.5,262.5 335.0,262.5 337.5,262.7 340.0,263.2 M340.0,263.2 342.4,261.4 345.1,260.0 347.5,258.2 349.9,259.2 352.6,259.6 355.0,260.8 357.5,264.5 M347.5,255.0 347.5,259.0 M363.8,257.0 364.4,254.4 365.4,251.9 366.3,249.4 367.5,247.0 368.4,244.6 368.8,242.0 368.9,239.4 370.0,237.0 M273.8,266.5 272.2,268.5 270.4,270.1 268.8,272.0 M265.0,279.5 263.4,281.8 262.5,284.5 M285.0,267.0 284.6,269.5 285.1,272.0 284.6,274.5 285.0,277.0 284.9,279.5 284.2,282.0 284.5,284.5 M284.5,285.0 286.7,284.0 288.8,282.7 291.2,282.0 M295.0,267.0 294.9,270.0 293.6,272.8 293.0,275.8 292.0,278.8 291.2,282.0 M284.5,285.0 283.0,287.2 282.7,289.9 281.0,292.1 280.0,294.5 M306.2,265.0 306.6,268.2 306.7,271.3 307.0,274.5 M325.0,255.8 325.1,258.9 324.5,262.0 M328.8,243.2 328.4,246.4 327.5,249.5 M335.0,279.5 333.0,281.7 332.2,284.7 330.7,287.2 328.8,289.5 327.7,291.9 327.0,294.4 326.9,297.0 326.2,299.5 326.3,302.1 325.0,304.4 325.0,307.0 M350.0,279.5 350.7,282.0 351.2,284.5 352.5,288.2 M341.2,200.8 342.9,203.7 343.8,207.0 M350.0,209.0 350.5,211.5 M340.0,223.2 339.7,225.7 339.5,228.2 M303.8,287.0 302.3,288.9 301.7,291.4 300.0,293.2 298.4,296.2 297.5,299.5 M265.0,294.5 265.4,297.0 264.9,299.5 265.0,302.0 M280.0,294.5 279.3,297.6 278.8,300.8 M265.0,305.8 267.5,306.3 270.0,306.5 273.8,307.0 M190.0,305.8 193.8,306.5 M203.8,306.5 206.2,305.6 208.7,305.1 211.2,304.5 214.1,304.5 216.9,304.2 219.7,304.3 222.5,304.0 M196.2,285.8 195.1,287.9 193.8,290.0 192.5,292.0 M191.2,297.0 190.7,299.9 190.4,302.8 190.0,305.8 M188.8,285.8 186.9,287.9 184.4,289.4 182.5,291.5 M168.8,292.0 166.4,293.9 164.6,296.2 162.5,298.2 162.5,300.8 M172.5,279.0 173.2,280.0 M202.5,264.5 202.8,265.0 M201.2,279.5 201.5,280.0 M207.0,279.5 207.4,282.0 207.0,284.5 M162.5,219.5 163.0,219.5 M186.2,219.0 186.8,219.0 M226.2,249.5 225.0,252.0 224.1,254.7 222.5,257.0 M402.5,184.5 402.8,187.0 401.9,189.5 401.7,192.0 401.8,194.5 402.2,197.0 401.5,199.5 401.2,202.0 401.0,204.5 400.0,206.9 400.6,209.6 399.4,211.9 399.5,214.5 M397.0,218.2 397.0,222.0 M434.5,190.8 433.2,193.5 432.9,196.5 431.2,199.0 430.8,202.0 430.3,204.5 429.3,206.9 428.8,209.4 429.1,212.1 428.2,214.5 427.8,217.2 427.5,220.0 428.3,222.8 427.8,225.5 427.5,228.2 426.1,230.4 425.6,232.9 423.8,234.8 423.3,237.4 422.0,239.5 M417.0,250.8 415.7,253.4 414.1,255.9 412.3,258.2 410.8,260.8 M446.5,177.0 447.3,179.5 448.2,181.9 448.6,184.4 449.3,186.9 449.5,189.5 M462.0,177.0 459.8,178.5 458.1,180.6 456.1,182.3 454.5,184.5 453.1,186.8 450.9,188.5 449.5,190.8 M449.5,190.8 450.0,193.5 449.7,196.4 449.7,199.2 450.0,202.0 449.8,204.8 448.9,207.4 448.9,210.2 448.5,213.0 448.2,215.8 M445.8,242.0 444.4,244.9 443.4,247.9 442.0,250.8 M461.5,203.2 462.0,205.8 461.5,208.2 M448.2,216.5 449.8,214.5 452.0,213.2 455.8,212.0 M447.5,231.5 450.4,231.4 453.2,232.0 455.0,230.2 456.5,228.2 M463.2,240.8 465.8,240.8 M478.2,253.2 482.0,253.8 M488.2,202.0 486.8,204.6 485.5,207.2 483.7,209.6 482.0,212.0 480.4,214.7 478.2,217.0 M478.2,217.0 476.3,219.0 474.3,221.1 472.5,223.2 471.7,225.9 470.2,228.2 469.3,230.8 468.2,233.2 M478.2,217.0 478.9,219.9 478.3,222.9 479.0,225.8 M472.5,244.5 471.7,247.6 471.5,250.8 M469.5,256.5 467.7,259.3 465.8,262.0 462.7,263.5 459.5,264.5 456.5,265.7 453.2,265.8 451.3,267.3 449.5,269.0 M454.5,279.0 456.9,280.0 459.5,280.0 463.2,278.2 M469.5,280.8 472.5,277.5 475.0,280.8 M435.8,285.8 436.8,288.2 437.0,290.9 438.2,293.2 M438.2,293.2 437.5,295.8 M455.8,292.0 457.0,294.5 M532.0,187.0 531.6,189.7 530.0,191.9 529.5,194.5 M525.8,199.5 525.0,202.2 523.2,204.5 522.0,207.0 520.3,208.8 519.8,211.4 518.2,213.2 M557.0,184.5 556.7,187.1 555.6,189.5 555.1,192.0 554.5,194.5 M537.0,228.2 535.8,231.0 535.2,233.9 533.9,236.6 533.2,239.5 532.7,242.0 532.3,244.6 531.8,247.1 530.8,249.5 M526.5,267.0 524.0,269.2 522.0,272.0 519.4,272.6 517.1,273.9 514.5,274.5 M510.8,212.0 509.4,214.5 508.3,217.0 507.0,219.5 M500.8,238.2 500.2,240.6 498.7,242.7 498.8,245.3 497.7,247.5 496.9,249.8 495.8,252.0 494.7,254.4 493.8,256.9 493.2,259.4 492.9,262.1 492.0,264.5 491.2,266.9 491.4,269.5 490.8,272.0 M517.0,222.0 516.7,224.6 515.3,226.9 515.0,229.5 514.5,232.0 M547.0,237.0 545.6,239.4 544.3,241.9 543.2,244.5 M550.0,229.5 554.5,229.0 557.0,232.0 M552.0,244.5 550.6,246.4 549.0,248.2 M510.8,254.5 509.9,256.9 509.4,259.5 509.1,262.1 508.2,264.5 507.7,267.7 506.5,270.8 M550.8,263.2 551.2,265.8 552.0,268.2 M497.0,273.2 497.5,277.0 499.5,279.5 M492.0,280.8 488.2,283.2 485.5,284.1 483.2,285.8 M533.2,278.2 532.6,281.1 532.3,284.1 532.0,287.0 M517.0,287.0 519.9,287.6 522.8,288.1 525.8,288.2 528.9,288.2 532.0,289.0 535.1,290.8 538.2,292.5 541.4,293.1 544.5,294.0 546.9,295.3 549.4,296.3 552.0,297.0 555.0,298.0 558.2,298.2 M509.5,299.5 512.2,299.9 514.4,301.6 517.0,302.0 519.4,303.3 521.8,304.1 524.5,304.5 527.1,304.9 529.6,305.9 532.0,307.0 M534.0,297.0 534.0,299.5 M409.5,283.2 408.6,286.5 407.0,289.5 M417.0,285.8 419.5,286.1 422.0,286.2 M427.0,283.2 426.8,285.8 426.6,288.3 425.8,290.8 425.6,294.0 424.5,297.0 M419.5,307.0 422.2,304.7 424.5,302.0 427.7,302.9 430.8,304.5 M384.5,254.5 384.9,257.0 385.0,259.5 384.2,262.0 383.2,264.5 383.1,267.1 382.0,269.5 M382.0,293.2 385.8,292.5 M499.0,293.2 497.5,296.5 M484.5,297.0 484.8,297.5 M438.2,235.8 438.5,236.0 M405.8,269.5 404.5,272.0 M400.8,253.2 401.0,253.5 M185.0,309.2 183.3,311.3 181.4,313.2 179.2,314.7 177.5,316.8 175.5,318.9 173.5,321.1 171.2,323.0 M198.8,308.0 202.0,311.0 203.8,309.2 M202.0,311.0 202.0,314.2 M166.2,330.5 164.9,332.8 164.6,335.5 163.8,338.0 161.6,339.6 160.0,341.8 M157.5,350.5 155.5,352.9 153.8,355.5 152.3,358.1 150.0,360.0 M206.2,346.0 203.7,345.9 201.2,345.7 198.8,345.5 196.1,346.5 193.8,348.2 191.2,349.2 189.0,350.5 187.1,352.0 185.0,353.5 182.6,354.5 179.9,354.4 177.5,355.5 175.6,357.1 173.2,357.7 171.2,359.2 167.0,360.5 M183.8,361.8 184.7,364.8 185.0,368.0 186.2,370.5 M192.0,361.8 194.8,361.2 197.5,361.8 M243.8,308.0 242.8,310.4 241.0,312.2 239.5,314.3 238.8,316.8 M233.8,325.5 231.8,327.8 230.7,330.7 228.8,333.0 227.5,335.5 226.2,338.0 M232.5,336.8 236.2,337.5 235.0,333.0 M201.2,369.2 199.4,371.3 197.9,373.5 196.3,375.6 195.0,378.0 192.4,379.4 190.0,381.0 187.4,380.3 185.0,379.2 M230.0,350.5 230.4,353.6 230.5,356.8 M218.8,366.0 221.8,364.1 225.0,362.5 227.5,363.2 230.0,362.5 232.5,363.7 235.0,363.5 237.5,362.8 240.0,362.8 242.5,363.0 245.7,363.4 248.8,364.2 M246.2,364.2 247.0,368.0 M155.0,388.0 157.8,386.2 160.0,383.8 163.1,382.8 166.2,381.8 169.4,381.6 172.5,381.8 M177.5,384.2 181.2,385.0 M150.0,403.0 152.4,404.1 155.1,404.1 157.5,405.0 160.6,406.5 163.8,408.0 167.5,410.5 M165.0,408.0 166.0,410.5 167.0,413.0 M181.2,399.2 182.0,400.5 M190.0,402.5 193.8,403.0 M212.5,389.2 213.2,390.5 M211.2,401.8 215.0,403.0 M220.0,398.0 221.2,401.8 M223.8,401.8 226.8,403.3 230.0,404.2 233.0,406.0 236.2,407.2 M205.5,409.2 203.3,411.6 201.2,414.2 199.5,416.2 197.5,418.0 M188.8,420.5 187.0,422.2 185.2,423.9 182.9,424.9 181.2,426.8 178.7,428.3 176.1,429.9 173.8,431.8 M190.0,429.2 192.6,429.3 195.0,430.1 197.4,430.9 200.0,431.0 202.5,431.5 205.1,431.4 207.5,432.2 210.0,432.0 212.5,432.3 215.0,431.8 217.6,432.1 220.1,432.6 222.5,433.5 M237.5,427.5 238.2,428.8 M240.0,341.8 242.5,341.0 245.1,340.8 247.5,340.0 249.7,338.3 251.2,336.0 254.1,335.3 257.0,335.0 260.0,335.0 262.9,334.2 265.8,333.8 268.8,333.5 M271.2,319.2 269.9,321.6 269.3,324.2 268.8,326.8 269.2,330.1 268.8,333.5 M292.5,316.8 290.8,318.7 290.4,321.3 288.9,323.4 287.5,325.5 286.0,327.8 285.2,330.4 284.5,333.0 284.1,335.5 284.2,338.0 284.3,340.5 283.8,343.0 282.9,345.5 282.7,348.1 281.8,350.6 280.9,353.0 280.0,355.5 279.2,358.2 277.6,360.5 276.0,362.9 275.0,365.5 273.6,368.3 272.5,371.3 271.2,374.2 269.3,376.7 267.5,379.2 M278.8,350.5 280.0,354.2 M272.5,349.2 271.3,351.4 270.3,353.6 268.8,355.5 M265.0,364.2 263.8,366.7 262.7,369.1 262.3,371.8 261.2,374.2 M248.8,376.0 251.9,375.8 255.0,375.5 258.2,375.1 261.2,374.2 M245.0,380.5 242.5,381.8 240.0,383.0 240.2,385.5 239.5,388.0 239.2,390.5 239.5,393.0 M267.5,391.8 268.0,395.5 M276.2,391.8 278.8,391.1 281.2,390.0 285.0,391.8 M295.0,393.0 297.1,391.8 298.8,390.0 M301.2,389.2 303.8,386.8 307.5,386.8 M290.0,341.8 291.6,344.1 292.5,346.8 M287.5,367.5 289.1,369.8 291.2,371.8 293.5,370.7 295.5,369.4 297.5,368.0 M291.2,371.8 291.7,374.2 292.0,376.8 M287.5,361.8 287.3,364.6 287.5,367.5 M312.5,366.8 316.2,369.2 317.8,371.7 320.0,373.5 M250.0,309.2 252.5,308.9 255.0,309.4 257.5,309.6 260.0,309.2 262.5,308.7 265.0,308.4 267.5,308.0 270.3,308.9 273.4,308.3 276.2,309.2 M304.2,324.2 304.1,326.7 304.4,329.3 303.6,331.7 303.8,334.2 M325.0,308.0 323.6,310.3 323.1,313.0 322.6,315.7 321.2,318.0 320.5,320.5 320.0,323.0 319.1,325.4 318.8,328.0 317.8,330.5 316.7,332.9 315.6,335.4 315.0,338.0 M310.0,348.0 309.4,350.6 307.9,352.9 307.3,355.5 306.2,358.0 304.7,360.8 304.1,364.0 302.5,366.8 M315.0,328.0 314.5,330.5 315.2,333.0 315.0,335.5 316.1,337.9 316.2,340.5 320.0,338.0 M320.0,340.5 322.2,341.5 324.2,342.9 326.2,344.2 M332.5,323.0 333.3,325.4 333.2,328.0 333.5,330.5 333.8,333.0 333.7,335.5 334.3,338.0 334.6,340.5 334.5,343.0 336.8,344.0 338.8,345.5 342.5,347.5 M342.5,338.0 342.5,340.5 343.0,343.0 M363.8,308.0 362.6,311.0 361.5,314.0 360.0,316.8 M358.8,334.2 358.2,337.0 358.4,339.9 358.1,342.7 357.5,345.5 M381.2,331.8 381.2,334.6 380.6,337.4 380.4,340.2 380.0,343.0 M380.0,345.5 378.9,347.7 377.8,349.9 377.1,352.3 375.6,354.3 375.0,356.8 373.4,358.7 372.9,361.4 370.9,363.1 370.0,365.5 367.8,367.7 366.2,370.5 M365.0,366.8 365.5,369.9 366.2,373.0 M352.5,368.0 351.7,370.7 350.5,373.2 348.8,375.5 347.1,377.8 346.1,380.4 345.0,383.0 M342.0,398.0 342.3,401.0 343.3,403.8 343.8,406.8 345.0,409.2 M347.5,408.0 345.8,409.7 344.3,411.7 342.6,413.5 341.2,415.5 339.6,417.6 337.6,419.4 336.2,421.8 333.7,422.9 331.2,424.2 M330.0,375.0 329.0,377.8 327.8,380.5 326.2,383.0 M323.8,385.5 322.9,388.6 321.3,391.3 320.0,394.2 319.6,396.9 318.4,399.3 317.5,401.8 M362.5,380.5 363.0,381.8 M362.5,428.0 361.9,430.5 362.2,433.1 361.2,435.5 M348.8,414.2 349.0,416.8 349.4,419.3 350.0,421.8 352.5,424.2 356.2,423.0 M357.0,414.2 357.5,418.0 M358.8,428.0 361.2,430.5 M370.0,428.0 369.5,430.5 370.2,433.0 370.0,435.5 M260.0,415.5 262.6,415.4 265.0,414.2 267.5,414.7 270.0,415.1 272.5,415.5 275.7,415.3 278.8,414.2 281.0,412.5 283.8,411.8 285.4,414.4 287.5,416.8 290.0,418.0 291.8,415.6 293.2,412.9 295.0,410.5 296.0,408.1 296.2,405.5 M290.0,418.0 290.1,420.5 290.0,423.0 M291.2,400.5 290.0,403.5 M310.0,413.0 310.5,415.0 M317.5,415.5 316.9,418.0 316.2,420.5 315.3,422.9 315.0,425.5 314.0,428.1 312.6,430.5 311.2,433.0 M287.5,313.0 288.0,314.2 M297.5,309.2 297.8,309.8 M312.5,308.0 312.8,308.8 M355.0,310.5 355.2,311.0 M266.2,436.8 266.5,437.2 M277.5,437.5 278.0,438.0 M392.0,316.8 390.8,319.7 389.4,322.6 388.2,325.5 386.7,327.8 386.0,330.6 384.5,333.0 382.0,335.5 M402.0,338.0 400.7,340.2 399.3,342.3 397.5,344.2 396.0,346.2 394.5,348.2 393.2,350.5 M418.2,316.8 420.0,319.0 421.1,321.6 422.0,324.2 421.2,327.0 421.3,329.9 420.9,332.7 420.8,335.5 M417.0,345.5 416.1,348.0 415.4,350.5 414.5,352.9 413.9,355.5 413.2,358.0 412.2,360.9 411.9,363.9 410.8,366.8 M404.5,364.2 406.9,366.3 409.5,368.0 412.0,365.7 414.5,363.5 417.7,363.3 420.8,362.5 M399.5,371.8 398.2,373.8 396.8,375.8 394.6,377.2 393.2,379.2 390.8,380.1 388.8,381.6 386.8,383.1 384.5,384.2 M400.8,381.8 399.8,384.8 399.5,388.0 M432.0,308.0 432.2,310.6 432.9,313.0 433.8,315.4 434.0,318.0 M433.2,329.2 433.0,332.0 432.4,334.7 431.7,337.4 432.3,340.3 431.5,343.0 431.3,345.7 431.7,348.5 431.5,351.3 430.6,354.0 430.8,356.8 M430.8,318.0 433.2,318.3 435.8,318.5 M427.0,359.2 428.5,361.5 430.8,363.0 433.3,365.5 435.8,368.0 M440.8,319.2 444.5,321.8 446.7,319.7 449.5,318.5 452.0,319.1 454.5,320.0 455.7,322.2 457.0,324.2 M457.0,326.8 457.8,330.5 M440.0,337.5 443.2,339.2 M448.2,338.5 450.8,336.0 M462.0,335.0 460.2,336.8 457.7,337.7 455.8,339.2 455.2,341.9 454.4,344.4 453.2,346.8 452.8,349.7 451.9,352.5 450.2,355.1 449.5,358.0 449.0,360.6 447.1,362.8 447.1,365.7 445.8,368.0 M429.5,401.8 430.8,404.2 M468.2,339.2 465.8,341.8 M467.0,355.5 466.6,358.0 467.2,360.5 466.5,363.0 466.5,365.5 M478.2,320.5 477.8,324.2 M489.5,309.2 488.3,312.0 487.7,314.9 486.2,317.5 485.8,320.5 485.5,323.3 484.2,325.9 484.0,328.7 484.3,331.6 483.2,334.2 M513.2,315.5 514.0,318.6 513.8,321.8 M474.5,353.0 475.6,355.6 477.0,358.0 479.2,355.7 480.8,353.0 M477.0,358.0 477.1,360.6 476.4,363.0 475.6,365.5 475.8,368.1 475.0,370.5 474.3,372.9 474.3,375.5 474.4,378.1 473.7,380.5 473.2,383.0 472.5,386.1 472.0,389.2 472.0,391.8 471.6,394.2 472.1,396.8 471.3,399.2 471.5,401.8 M465.8,390.5 468.9,390.0 472.0,389.2 M462.0,380.5 463.0,383.0 464.0,385.5 464.5,388.1 465.8,390.5 M475.8,370.5 478.0,372.4 480.8,373.5 483.9,373.3 487.0,372.5 489.5,370.5 491.3,372.8 493.2,375.0 495.0,373.2 497.0,371.8 M489.5,364.2 490.0,367.4 489.5,370.5 M519.0,333.0 520.1,330.6 520.8,328.0 M522.0,326.8 523.2,328.9 524.1,331.1 525.8,333.0 529.5,331.8 533.2,333.0 537.0,331.0 539.4,332.3 542.0,333.0 M536.2,325.5 536.6,328.2 536.5,331.0 M488.2,381.8 487.5,384.9 486.0,387.7 484.5,390.5 482.0,394.2 M460.8,366.8 460.2,369.6 459.4,372.4 458.5,375.1 458.2,378.0 M450.8,379.2 449.8,381.7 449.1,384.2 448.8,386.7 448.2,389.2 447.9,392.2 446.7,395.0 446.5,398.0 M463.2,404.2 461.7,407.2 460.8,410.5 M458.2,418.0 458.2,420.5 458.3,423.0 457.6,425.5 457.5,428.0 457.0,430.7 457.6,433.4 456.9,436.0 457.0,438.8 M444.0,416.8 447.4,417.2 450.8,416.8 453.3,416.9 455.7,417.7 458.2,418.0 M464.5,415.5 464.2,418.0 464.3,420.5 464.5,423.0 464.4,425.5 464.0,428.0 463.5,430.7 463.3,433.4 463.5,436.1 463.2,438.8 M439.5,404.2 440.1,406.7 439.5,409.3 440.0,411.8 M417.0,396.8 417.5,399.7 418.9,402.5 419.5,405.5 419.6,408.0 419.4,410.5 420.0,413.0 M419.5,415.5 418.3,417.9 417.8,420.5 417.0,423.0 M422.0,421.8 422.7,424.3 424.0,426.7 424.7,429.3 425.8,431.8 422.0,433.0 M432.0,421.8 430.8,423.9 429.5,425.9 428.2,428.0 425.8,431.8 M387.0,394.2 387.4,396.8 387.5,399.2 386.5,401.8 387.0,404.2 M400.8,403.0 400.9,406.1 400.8,409.2 M412.0,395.5 410.8,399.2 M383.2,415.5 383.7,418.6 383.2,421.8 M469.5,420.5 470.8,421.0 M536.5,343.0 536.0,346.0 535.1,348.8 534.5,351.8 M544.5,338.0 544.4,340.6 543.7,343.1 542.1,345.4 542.0,348.0 541.0,350.4 540.8,353.0 540.1,355.5 539.5,358.0 539.1,360.6 538.0,362.9 537.7,365.5 537.0,368.0 M544.5,338.0 547.2,337.6 549.6,336.6 552.0,335.5 M553.2,329.2 552.9,332.4 553.2,335.5 M552.0,335.5 554.5,335.9 557.0,335.0 559.5,334.6 562.0,335.0 564.6,335.3 567.1,335.9 569.6,336.4 572.0,337.5 574.7,337.9 577.0,339.2 579.5,340.0 583.2,342.5 M533.2,374.2 532.4,377.1 532.5,380.1 532.0,383.0 M532.0,383.0 534.9,384.7 538.2,385.5 539.1,387.8 541.2,389.4 542.0,391.8 543.8,393.4 545.8,394.8 547.9,396.1 549.5,398.0 551.8,399.7 554.6,400.3 557.0,401.8 559.9,403.1 562.8,404.4 565.8,405.5 M522.0,399.2 520.3,401.5 519.0,404.0 518.2,406.8 516.6,409.4 514.5,411.8 M577.0,379.2 578.1,376.4 578.9,373.5 579.5,370.5 580.6,368.1 581.5,365.5 M575.8,365.5 578.6,366.0 581.5,365.5 M594.5,347.5 595.8,345.0 597.3,342.6 597.9,339.8 599.5,337.5 600.6,334.5 602.0,331.8 M598.2,355.5 601.2,355.9 604.1,356.0 607.0,356.8 609.6,357.7 612.0,359.2 M569.5,408.0 572.7,408.2 575.8,409.2 578.3,408.8 580.8,408.0 583.2,409.7 584.7,412.3 587.0,414.2 589.6,415.2 592.2,416.3 594.5,418.0 597.5,419.7 600.8,420.5 M607.0,408.0 606.6,411.0 604.9,413.7 604.5,416.8 M558.2,353.0 558.8,355.6 560.0,358.0 560.9,360.3 562.0,362.5 M544.5,358.0 548.2,359.2 M568.2,375.0 568.5,375.5 M585.8,391.8 587.5,391.0 M602.0,386.8 602.8,388.0 M529.5,308.0 532.0,308.8 534.6,309.0 537.0,310.0 540.0,310.0 542.9,310.2 545.8,311.0 M510.8,418.0 509.7,420.4 509.0,423.0 508.2,425.5 507.7,428.1 506.0,430.4 505.7,433.1 504.5,435.5 M494.5,433.0 496.5,431.3 498.4,429.4 500.8,428.0 503.2,427.5 505.8,427.5 M517.0,425.5 518.2,428.0 M563.8,423.5 563.2,426.2 563.6,429.0 563.2,431.8 M575.8,426.8 576.5,429.2 M583.2,433.0 586.3,432.4 589.5,432.5 M605.8,429.2 608.3,429.9 610.8,430.5 613.4,432.2 615.8,434.2 M548.2,434.2 549.8,436.4 552.0,438.0 M188.8,465.0 191.0,467.0 193.8,468.0 197.0,468.5 200.0,470.0 202.9,471.9 206.2,473.0 M218.8,471.0 221.2,471.7 223.8,472.0 M240.8,471.0 245.0,473.0 248.1,472.1 251.2,471.8 253.8,472.4 256.2,473.0 259.1,473.8 261.8,475.0 M269.5,460.0 272.2,458.7 275.0,458.0 279.5,457.0 M307.0,470.5 305.0,472.6 302.5,474.2 M318.0,450.0 318.2,450.5 M313.2,461.8 313.5,462.2 M381.2,444.2 380.1,446.9 379.5,449.8 378.9,452.6 378.8,455.5 378.7,458.1 378.1,460.5 377.0,462.9 377.0,465.5 M377.5,476.8 375.1,477.8 372.5,478.0 370.7,479.7 369.5,481.9 367.4,483.3 366.2,485.5 M266.2,437.5 266.5,438.0 M402.0,438.0 400.2,439.9 397.9,441.4 396.6,443.8 394.5,445.5 392.9,447.6 391.7,450.1 390.1,452.3 388.2,454.2 386.7,457.0 385.5,460.0 384.5,463.0 383.5,465.6 382.0,468.0 M422.0,444.2 422.5,447.4 422.0,450.5 424.5,454.2 M404.5,458.0 404.1,460.5 403.9,463.0 403.8,465.5 403.2,468.0 402.7,470.6 401.5,473.0 M414.5,465.5 415.0,468.0 415.6,470.6 416.5,473.0 M413.2,479.2 410.0,480.2 407.0,481.8 M428.2,465.5 429.1,468.3 428.8,471.4 429.5,474.2 M429.5,474.2 432.7,475.3 435.8,476.8 439.5,475.5 M434.5,476.8 435.0,480.5 M449.5,466.8 449.0,469.2 448.8,471.7 449.0,474.2 M449.0,474.2 449.5,477.5 450.8,480.5 450.6,483.7 450.0,486.8 M457.0,439.2 456.8,441.8 456.3,444.2 456.6,446.8 455.8,449.2 454.5,453.0 M444.5,429.2 445.1,432.2 445.9,435.1 446.5,438.0 446.7,440.5 447.4,443.0 447.0,445.5 447.5,448.0 M458.2,481.8 458.3,484.9 459.0,488.0 M462.5,466.0 462.8,466.5 M489.5,443.0 489.8,445.0 M498.2,466.8 498.2,469.9 499.0,473.0 M519.0,455.5 518.6,458.0 518.8,460.5 518.2,463.0 518.2,465.5 518.5,468.0 517.3,470.5 517.0,473.0 517.3,475.5 517.0,478.0 M517.0,478.0 519.5,478.6 522.0,479.2 524.5,478.7 527.0,478.0 529.5,479.3 532.0,480.5 534.9,480.1 537.8,481.3 540.8,481.0 543.3,481.4 545.8,482.0 548.2,483.0 551.2,482.7 554.1,483.1 557.0,483.5 559.4,484.6 562.2,484.6 564.6,485.5 567.0,486.8 M526.5,465.5 526.3,468.0 526.8,470.5 527.0,473.0 526.4,475.5 526.5,478.0 M517.0,460.0 520.0,460.0 M550.8,436.8 552.6,439.3 554.5,441.8 557.0,442.1 559.5,442.5 M561.5,457.5 562.0,461.8 M575.8,448.0 578.8,449.7 582.0,451.0 584.7,452.3 587.0,454.2 M583.2,434.2 585.8,432.5 588.2,433.0 590.8,433.0 M594.0,436.0 594.2,436.5 M605.8,430.5 608.2,429.8 610.8,430.0 612.9,431.2 614.5,433.0 616.5,435.5 M609.5,446.8 613.2,449.2 M585.8,485.5 589.5,483.5 594.0,484.2 M605.8,470.5 606.0,471.0 M609.5,483.0 609.8,483.5 M563.8,424.2 563.6,426.8 563.5,429.2 563.6,431.8 563.2,434.2 M575.8,426.2 577.5,426.8 576.5,429.2" fill="none" stroke="#12a860" stroke-width="0.9" stroke-dasharray="2 6 3 9 1.5 5"/>
<path d="M193.0,63.5 192.9,66.0 192.7,68.6 192.0,71.0 M187.0,96.0 186.4,99.1 185.3,102.0 183.8,104.8 182.6,107.3 181.2,109.8 M203.8,76.0 202.7,78.5 202.0,81.0 M163.8,83.5 162.6,85.9 162.5,88.5 M158.8,99.0 159.5,103.0 M145.5,107.2 145.8,107.8 M172.5,111.5 172.0,116.0 M162.5,118.5 162.6,121.1 163.8,123.5 162.0,125.4 159.4,126.2 157.5,128.0 155.1,128.8 152.6,129.5 150.0,129.8 M163.8,123.5 165.0,125.5 M177.5,127.2 177.1,130.3 176.0,133.1 175.0,136.0 173.4,138.3 172.8,141.2 171.2,143.5 170.0,146.0 M185.0,136.0 187.6,134.2 190.0,132.2 193.1,130.9 196.2,129.8 198.7,130.4 201.2,131.0 M205.0,122.2 205.6,119.6 207.1,117.3 207.7,114.7 208.8,112.2 209.8,110.1 211.3,108.1 212.5,106.0 M192.5,102.2 192.4,105.2 192.4,108.1 192.0,111.0 191.2,113.8 190.8,116.6 190.8,119.5 190.0,122.2 M200.0,94.8 199.3,97.2 198.8,99.8 M238.8,62.2 237.9,65.2 236.7,68.0 236.2,71.0 M233.8,78.5 232.2,80.6 231.9,83.3 230.5,85.4 229.0,87.5 228.5,90.1 227.0,92.2 M246.2,64.8 245.4,67.9 244.5,71.0 M242.5,76.0 241.7,78.7 239.8,80.9 238.5,83.4 237.5,86.0 M233.8,99.8 232.8,102.6 232.0,105.6 231.2,108.5 231.9,111.0 232.5,113.5 M228.8,63.5 226.2,66.0 M215.0,108.5 217.7,106.9 220.0,104.8 223.3,104.3 226.2,103.0 M222.5,104.8 222.1,107.3 221.5,109.7 221.2,112.2 221.5,115.2 220.5,118.1 220.5,121.0 M211.2,126.0 215.0,125.5 216.8,127.1 218.8,128.5 222.0,128.4 225.0,127.2 227.3,129.4 230.0,131.0 232.4,130.1 235.0,129.8 M217.5,128.5 218.0,132.2 M223.8,129.8 224.6,132.2 224.5,134.8 M253.8,111.5 253.3,114.4 252.5,117.1 251.2,119.8 250.0,122.2 M245.0,126.0 244.6,128.7 243.1,130.9 242.5,133.5 241.9,136.4 240.9,139.2 239.8,142.0 238.8,144.8 237.1,147.7 236.2,151.0 M236.2,151.0 235.1,153.5 233.2,155.4 231.5,157.5 230.0,159.8 M226.2,171.0 225.9,173.6 225.0,176.0 M236.2,152.2 238.2,154.1 240.0,156.0 241.2,159.8 M237.5,156.0 237.4,158.5 236.7,161.0 236.4,163.5 237.0,166.0 236.8,168.5 236.2,171.0 M211.2,142.2 210.5,146.0 M226.2,139.8 226.7,142.4 226.8,145.2 226.6,147.9 226.7,150.6 227.1,153.3 227.0,156.0 M206.2,158.5 206.6,161.3 206.0,164.0 205.9,166.8 205.6,169.5 205.5,172.2 M222.5,163.5 219.9,163.4 217.5,164.1 215.0,164.8 213.5,167.0 211.9,169.2 210.3,171.4 209.4,174.0 207.5,176.0 M158.8,153.0 161.2,153.9 163.8,154.0 M183.0,156.0 181.2,158.3 180.0,161.0 M173.8,163.5 172.0,167.2 M267.5,61.5 266.5,64.2 266.0,66.9 265.8,69.8 M282.5,61.5 283.1,65.0 283.5,68.5 282.9,70.9 282.4,73.3 281.2,75.5 279.7,77.7 278.8,80.3 277.0,82.2 277.1,85.1 276.6,87.9 276.2,90.7 275.5,93.5 275.4,96.0 275.5,98.5 275.3,101.1 274.5,103.5 M262.5,87.2 262.4,89.8 261.9,92.3 261.1,94.8 261.0,97.4 259.6,99.7 259.5,102.2 M297.5,61.5 296.6,63.8 296.4,66.4 295.5,68.7 294.5,71.0 294.3,73.5 293.8,76.0 293.7,78.6 292.5,80.9 292.5,83.5 291.3,86.1 291.3,88.9 290.6,91.6 290.4,94.4 289.8,97.1 288.8,99.8 288.0,102.6 287.1,105.5 285.6,108.1 285.0,111.0 284.4,114.2 283.0,117.2 M271.2,118.5 273.8,120.9 275.5,124.0 275.8,127.0 277.0,129.8 M286.2,118.0 283.1,118.8 280.0,119.8 278.0,122.2 275.5,124.0 M258.8,163.5 257.9,165.9 257.9,168.5 257.5,171.1 256.4,173.4 256.2,176.0 M262.5,122.2 262.2,125.0 262.6,127.8 262.9,130.5 263.2,133.3 263.8,136.0 M275.0,138.5 275.4,141.5 276.6,144.3 277.0,147.2 M311.2,61.5 314.2,61.4 317.1,61.0 320.0,61.0 322.5,60.6 325.0,60.8 327.5,61.5 330.1,62.9 332.5,64.8 334.2,67.1 335.5,69.8 M311.2,61.5 310.6,64.6 309.9,67.8 310.0,71.0 309.6,73.5 308.5,75.9 308.0,78.4 307.5,80.9 307.5,83.5 M303.8,88.5 305.4,91.0 307.0,93.5 M301.2,118.5 301.3,121.0 300.2,123.5 300.4,126.0 299.5,128.5 299.5,131.0 299.1,133.5 299.9,136.0 300.0,138.5 300.0,141.0 M300.0,96.0 297.9,97.8 296.5,100.0 295.0,102.2 294.7,104.8 294.1,107.3 293.5,109.8 292.5,112.2 M288.8,141.0 288.6,143.6 287.0,145.9 286.7,148.5 286.2,151.0 285.2,153.4 285.0,156.0 284.2,158.5 282.9,160.9 282.5,163.5 M312.5,111.0 311.7,113.4 312.0,116.1 311.5,118.5 311.1,121.0 310.7,123.5 310.0,126.0 310.2,128.8 310.9,131.6 311.0,134.4 311.2,137.2 312.1,139.7 311.6,142.3 312.5,144.8 M316.2,118.5 316.3,121.0 316.2,123.5 315.8,126.0 316.3,128.5 316.2,131.0 M300.0,141.0 300.5,143.5 301.5,145.9 301.6,148.5 302.0,151.0 302.6,153.5 302.5,156.0 M305.0,151.0 307.4,152.2 309.0,154.6 311.2,156.0 311.9,158.5 311.9,161.0 311.9,163.5 312.5,166.0 M310.5,148.5 310.1,151.0 310.0,153.5 309.5,156.0 M292.5,156.0 293.5,159.1 294.5,162.2 295.3,165.4 296.2,168.5 M275.0,156.0 273.9,158.4 273.7,161.1 272.5,163.5 271.8,166.6 271.2,169.8 M284.5,159.8 283.7,162.8 282.6,165.7 281.2,168.5 280.5,171.0 280.4,173.5 280.0,176.0 M347.5,59.8 347.3,62.6 347.0,65.4 346.7,68.2 347.0,71.0 346.8,73.7 346.4,76.4 346.2,79.1 346.0,81.8 345.5,84.5 345.5,87.2 M352.5,85.5 355.0,86.4 357.5,87.2 M337.5,119.8 336.3,122.2 335.3,124.7 334.9,127.4 333.1,129.6 332.5,132.2 331.2,136.0 M360.0,91.0 358.9,94.1 358.0,97.2 M350.0,117.2 348.8,121.0 M381.2,91.0 380.2,94.0 379.2,97.0 377.5,99.8 M361.2,137.2 360.4,140.0 358.6,142.2 357.5,144.8 M347.5,133.5 347.1,136.0 347.0,138.6 345.5,140.9 345.5,143.5 M355.0,152.2 352.5,152.9 349.9,153.6 347.5,154.8 345.9,156.9 343.5,158.2 342.2,160.7 340.0,162.2 338.7,164.6 338.2,167.3 337.4,169.8 336.2,172.2 M351.2,152.2 350.9,155.1 350.2,157.8 350.6,160.7 350.0,163.5 M335.0,121.0 333.8,123.5 M177.5,63.0 177.8,63.2 M204.5,62.5 204.8,62.8 M218.0,62.5 218.5,62.5 M586.5,58.5 587.5,55.5 590.2,55.5 591.0,58.5 M430.8,58.5 430.3,61.4 429.3,64.2 428.8,67.1 427.5,69.8 M421.5,78.5 420.2,81.1 419.0,83.8 417.0,86.0 M400.8,119.8 400.6,122.6 400.2,125.4 399.7,128.2 400.0,131.0 399.8,133.5 398.9,135.9 398.7,138.5 398.5,141.0 398.2,143.5 398.1,146.0 397.9,148.5 398.0,151.0 397.7,153.5 397.0,156.0 M400.0,129.8 403.5,130.1 407.0,131.0 409.9,132.2 412.5,134.0 M432.0,108.5 430.9,111.5 429.6,114.4 428.2,117.2 427.9,120.5 426.5,123.5 M474.5,57.2 474.9,60.4 475.0,63.5 474.4,66.0 473.8,68.5 473.2,71.0 M468.2,92.2 466.7,94.7 464.9,97.1 463.4,99.7 462.0,102.2 460.5,104.6 459.1,107.1 458.4,109.8 457.0,112.2 M449.5,138.5 448.4,141.4 447.3,144.2 446.5,147.2 446.3,150.1 447.1,152.9 446.8,155.7 447.0,158.5 446.9,161.0 446.4,163.5 446.4,166.0 446.2,168.5 446.5,171.0 M493.2,58.5 492.5,61.0 491.6,63.4 491.2,66.0 490.8,68.5 489.6,70.7 489.0,73.1 488.2,75.5 487.1,77.7 485.8,79.8 483.2,83.5 M483.2,83.5 485.4,85.5 487.7,87.4 489.5,89.8 M489.5,89.8 489.4,92.5 489.4,95.2 489.3,98.0 489.5,100.8 489.5,103.5 490.0,106.0 489.0,108.5 489.0,111.0 489.2,113.5 489.0,116.0 489.0,118.5 M499.5,58.0 502.0,58.5 504.6,58.2 507.0,59.0 509.4,60.3 512.1,60.9 514.5,62.2 M500.8,71.0 500.8,74.8 M543.2,57.2 541.5,59.2 540.3,61.7 538.2,63.5 537.0,65.9 535.3,68.0 533.3,69.9 532.0,72.2 M527.0,81.0 525.6,83.3 523.8,85.3 522.7,87.9 520.8,89.8 518.5,92.0 515.8,93.5 M524.5,118.5 522.8,120.8 522.0,123.5 521.0,126.1 519.5,128.5 M497.0,107.2 494.9,110.1 492.0,112.2 490.6,115.1 488.2,117.2 M478.2,118.5 480.3,120.6 482.0,123.0 484.5,123.3 487.0,124.0 M482.0,148.5 480.6,150.8 479.0,152.9 476.9,154.7 475.8,157.2 M529.5,136.0 527.0,138.5 M525.8,139.0 528.9,139.2 532.0,138.5 M544.5,137.2 542.2,138.6 540.2,140.5 538.2,142.2 536.2,144.0 534.5,146.1 533.2,148.5 532.0,150.6 530.5,152.5 529.5,154.8 M542.0,133.5 543.1,136.1 543.2,139.0 M519.0,153.5 517.7,156.3 516.9,159.4 515.8,162.2 514.4,165.1 513.4,168.0 512.5,171.0 M457.0,126.0 458.7,127.7 460.0,129.8 M462.5,133.5 461.9,136.4 461.4,139.4 460.8,142.2 M456.5,147.2 455.3,149.9 453.8,152.4 452.0,154.8 450.0,156.9 447.5,158.5 M463.2,153.5 461.6,155.4 460.8,157.7 459.5,159.8 458.2,163.5 M394.5,166.0 394.8,166.5 M554.5,122.2 555.8,124.8 M382.0,127.2 383.2,129.8 M147.5,182.0 150.9,181.0 153.8,179.0 M151.2,199.5 152.5,196.5 155.0,195.8 M163.8,207.0 165.6,205.1 167.5,203.2 M147.5,215.0 150.1,215.6 152.5,217.0 156.2,214.5 M182.5,180.8 184.4,179.2 186.4,177.9 188.8,177.0 M203.8,177.0 203.0,179.6 202.3,182.2 201.2,184.6 200.0,187.0 M213.8,200.8 212.2,202.6 210.7,204.6 209.2,206.5 207.5,208.2 M176.2,213.2 177.5,210.5 179.4,208.1 181.2,205.8 184.1,204.0 186.2,201.5 M190.0,202.0 192.4,201.0 195.0,200.8 197.5,202.0 200.0,203.2 M170.0,224.5 170.5,227.0 171.2,229.5 174.3,230.1 177.5,230.0 M171.2,229.5 170.9,232.1 170.2,234.6 169.6,237.1 168.8,239.5 167.6,242.0 166.2,244.5 M200.0,219.5 198.0,221.6 195.5,223.3 193.8,225.8 M186.2,249.5 185.5,252.2 183.9,254.6 182.1,256.8 180.9,259.3 180.0,262.0 179.2,264.4 178.7,266.9 178.8,269.5 M152.5,270.8 153.9,268.1 155.5,265.5 157.5,263.2 159.8,261.7 162.5,260.8 165.0,259.5 167.5,259.5 170.0,259.7 172.5,259.0 175.5,260.7 178.8,262.0 M220.0,218.2 218.3,220.5 217.4,223.2 216.4,225.8 215.4,228.4 213.8,230.8 212.7,233.4 211.1,235.7 209.8,238.2 209.1,240.9 207.5,243.2 206.9,245.7 205.5,247.7 204.4,250.0 203.6,252.3 202.5,254.5 M222.5,237.0 220.8,239.0 218.8,240.8 216.5,242.3 215.0,244.5 213.2,246.9 211.3,249.3 210.0,252.0 M245.0,198.2 244.1,201.1 243.4,204.0 242.5,206.8 241.2,209.5 240.5,212.2 240.5,215.0 240.7,217.8 240.8,220.5 240.0,223.2 M240.0,223.2 241.7,221.2 243.5,219.2 245.0,217.0 245.9,214.5 246.6,211.9 248.0,209.6 248.8,207.0 M251.2,192.0 251.9,189.5 251.9,186.9 253.1,184.6 253.5,182.1 253.8,179.5 M228.8,243.2 227.8,245.6 226.0,247.5 225.2,249.9 223.8,252.0 222.4,254.8 222.1,257.8 221.2,260.8 M220.0,263.2 217.7,266.0 215.0,268.2 213.3,270.1 211.2,271.5 M241.2,245.8 243.0,247.8 245.0,249.5 247.0,248.0 248.0,245.6 250.0,244.0 251.8,241.1 253.8,238.2 M271.2,178.2 271.3,180.8 270.2,183.2 270.5,185.8 273.4,185.7 276.2,186.5 M270.5,185.8 270.4,188.6 269.8,191.4 268.8,194.0 267.7,196.7 267.5,199.5 266.3,202.3 265.6,205.3 265.0,208.2 M277.5,187.0 277.9,189.5 277.1,192.0 277.3,194.5 277.2,197.0 277.0,199.5 276.4,202.1 275.7,204.6 275.1,207.2 273.8,209.5 273.2,212.1 272.4,214.5 271.0,216.9 271.1,219.6 270.0,222.0 268.3,224.3 267.5,227.0 M285.0,183.2 287.7,184.9 290.0,187.0 293.8,186.5 M285.8,184.5 285.8,187.3 285.1,190.0 284.9,192.7 285.2,195.5 285.0,198.2 M292.5,187.0 292.9,189.5 292.4,192.0 292.4,194.5 291.7,197.0 292.4,199.5 292.0,202.0 M296.2,207.0 294.6,209.3 294.0,212.1 292.3,214.4 291.2,217.0 290.2,219.4 290.2,222.0 289.6,224.6 288.8,227.0 M310.0,177.0 310.3,180.1 311.5,182.9 312.5,185.8 M322.5,194.5 320.6,196.8 319.4,199.4 318.0,202.0 317.3,204.5 318.1,207.0 317.7,209.5 317.2,212.0 317.0,214.5 316.3,217.3 316.1,220.1 316.6,222.9 316.2,225.8 M333.8,199.5 332.8,201.9 332.2,204.4 331.8,207.0 331.2,209.5 M315.0,217.0 317.4,216.1 320.0,215.8 M301.2,232.0 303.6,230.9 306.2,230.8 M280.0,229.5 280.6,232.4 280.3,235.4 281.2,238.2 282.8,240.7 285.0,242.5 M283.8,227.0 282.6,230.0 282.5,233.2 M293.8,228.2 291.4,230.9 288.8,233.2 286.2,237.0 M295.0,213.2 295.1,216.1 294.8,218.9 294.1,221.7 293.8,224.5 M315.0,237.0 313.2,238.9 311.7,241.2 310.0,243.2 M308.8,245.8 309.0,248.9 310.0,252.0 310.0,254.8 310.8,257.6 310.2,260.5 310.8,263.2 M292.5,249.5 291.0,251.9 290.0,254.5 290.2,257.4 289.9,260.3 289.5,263.2 M261.2,233.2 261.4,236.2 261.3,239.1 260.8,242.0 260.9,244.6 261.8,247.0 262.5,249.5 261.4,252.1 260.0,254.5 M264.2,228.2 263.2,232.0 M272.5,240.8 272.2,243.3 271.1,245.7 271.2,248.2 270.0,250.7 268.8,253.2 M278.8,248.2 279.0,250.8 278.4,253.2 278.8,255.8 M257.5,254.5 257.2,257.0 256.7,259.5 257.6,262.0 257.0,264.5 M250.0,287.0 249.8,289.6 248.5,291.9 248.4,294.5 247.5,296.9 247.5,299.5 247.2,302.0 246.3,304.4 246.2,307.0 M259.5,265.8 262.9,266.1 266.2,266.5 M267.5,263.2 266.2,267.0 M273.8,265.8 277.5,263.2 281.2,262.5 M286.2,264.5 290.0,264.0 292.4,265.5 295.0,266.5 297.8,265.3 300.0,263.2 302.4,262.2 305.0,262.0 307.5,264.5 311.2,263.2 314.3,264.2 317.5,265.0 320.7,264.3 323.8,263.2 326.8,262.6 330.0,262.5 332.5,262.5 335.0,262.5 337.5,262.7 340.0,263.2 M340.0,263.2 342.4,261.4 345.1,260.0 347.5,258.2 349.9,259.2 352.6,259.6 355.0,260.8 357.5,264.5 M347.5,255.0 347.5,259.0 M363.8,257.0 364.4,254.4 365.4,251.9 366.3,249.4 367.5,247.0 368.4,244.6 368.8,242.0 368.9,239.4 370.0,237.0 M273.8,266.5 272.2,268.5 270.4,270.1 268.8,272.0 M265.0,279.5 263.4,281.8 262.5,284.5 M285.0,267.0 284.6,269.5 285.1,272.0 284.6,274.5 285.0,277.0 284.9,279.5 284.2,282.0 284.5,284.5 M284.5,285.0 286.7,284.0 288.8,282.7 291.2,282.0 M295.0,267.0 294.9,270.0 293.6,272.8 293.0,275.8 292.0,278.8 291.2,282.0 M284.5,285.0 283.0,287.2 282.7,289.9 281.0,292.1 280.0,294.5 M306.2,265.0 306.6,268.2 306.7,271.3 307.0,274.5 M325.0,255.8 325.1,258.9 324.5,262.0 M328.8,243.2 328.4,246.4 327.5,249.5 M335.0,279.5 333.0,281.7 332.2,284.7 330.7,287.2 328.8,289.5 327.7,291.9 327.0,294.4 326.9,297.0 326.2,299.5 326.3,302.1 325.0,304.4 325.0,307.0 M350.0,279.5 350.7,282.0 351.2,284.5 352.5,288.2 M341.2,200.8 342.9,203.7 343.8,207.0 M350.0,209.0 350.5,211.5 M340.0,223.2 339.7,225.7 339.5,228.2 M303.8,287.0 302.3,288.9 301.7,291.4 300.0,293.2 298.4,296.2 297.5,299.5 M265.0,294.5 265.4,297.0 264.9,299.5 265.0,302.0 M280.0,294.5 279.3,297.6 278.8,300.8 M265.0,305.8 267.5,306.3 270.0,306.5 273.8,307.0 M190.0,305.8 193.8,306.5 M203.8,306.5 206.2,305.6 208.7,305.1 211.2,304.5 214.1,304.5 216.9,304.2 219.7,304.3 222.5,304.0 M196.2,285.8 195.1,287.9 193.8,290.0 192.5,292.0 M191.2,297.0 190.7,299.9 190.4,302.8 190.0,305.8 M188.8,285.8 186.9,287.9 184.4,289.4 182.5,291.5 M168.8,292.0 166.4,293.9 164.6,296.2 162.5,298.2 162.5,300.8 M172.5,279.0 173.2,280.0 M202.5,264.5 202.8,265.0 M201.2,279.5 201.5,280.0 M207.0,279.5 207.4,282.0 207.0,284.5 M162.5,219.5 163.0,219.5 M186.2,219.0 186.8,219.0 M226.2,249.5 225.0,252.0 224.1,254.7 222.5,257.0 M402.5,184.5 402.8,187.0 401.9,189.5 401.7,192.0 401.8,194.5 402.2,197.0 401.5,199.5 401.2,202.0 401.0,204.5 400.0,206.9 400.6,209.6 399.4,211.9 399.5,214.5 M397.0,218.2 397.0,222.0 M434.5,190.8 433.2,193.5 432.9,196.5 431.2,199.0 430.8,202.0 430.3,204.5 429.3,206.9 428.8,209.4 429.1,212.1 428.2,214.5 427.8,217.2 427.5,220.0 428.3,222.8 427.8,225.5 427.5,228.2 426.1,230.4 425.6,232.9 423.8,234.8 423.3,237.4 422.0,239.5 M417.0,250.8 415.7,253.4 414.1,255.9 412.3,258.2 410.8,260.8 M446.5,177.0 447.3,179.5 448.2,181.9 448.6,184.4 449.3,186.9 449.5,189.5 M462.0,177.0 459.8,178.5 458.1,180.6 456.1,182.3 454.5,184.5 453.1,186.8 450.9,188.5 449.5,190.8 M449.5,190.8 450.0,193.5 449.7,196.4 449.7,199.2 450.0,202.0 449.8,204.8 448.9,207.4 448.9,210.2 448.5,213.0 448.2,215.8 M445.8,242.0 444.4,244.9 443.4,247.9 442.0,250.8 M461.5,203.2 462.0,205.8 461.5,208.2 M448.2,216.5 449.8,214.5 452.0,213.2 455.8,212.0 M447.5,231.5 450.4,231.4 453.2,232.0 455.0,230.2 456.5,228.2 M463.2,240.8 465.8,240.8 M478.2,253.2 482.0,253.8 M488.2,202.0 486.8,204.6 485.5,207.2 483.7,209.6 482.0,212.0 480.4,214.7 478.2,217.0 M478.2,217.0 476.3,219.0 474.3,221.1 472.5,223.2 471.7,225.9 470.2,228.2 469.3,230.8 468.2,233.2 M478.2,217.0 478.9,219.9 478.3,222.9 479.0,225.8 M472.5,244.5 471.7,247.6 471.5,250.8 M469.5,256.5 467.7,259.3 465.8,262.0 462.7,263.5 459.5,264.5 456.5,265.7 453.2,265.8 451.3,267.3 449.5,269.0 M454.5,279.0 456.9,280.0 459.5,280.0 463.2,278.2 M469.5,280.8 472.5,277.5 475.0,280.8 M435.8,285.8 436.8,288.2 437.0,290.9 438.2,293.2 M438.2,293.2 437.5,295.8 M455.8,292.0 457.0,294.5 M532.0,187.0 531.6,189.7 530.0,191.9 529.5,194.5 M525.8,199.5 525.0,202.2 523.2,204.5 522.0,207.0 520.3,208.8 519.8,211.4 518.2,213.2 M557.0,184.5 556.7,187.1 555.6,189.5 555.1,192.0 554.5,194.5 M537.0,228.2 535.8,231.0 535.2,233.9 533.9,236.6 533.2,239.5 532.7,242.0 532.3,244.6 531.8,247.1 530.8,249.5 M526.5,267.0 524.0,269.2 522.0,272.0 519.4,272.6 517.1,273.9 514.5,274.5 M510.8,212.0 509.4,214.5 508.3,217.0 507.0,219.5 M500.8,238.2 500.2,240.6 498.7,242.7 498.8,245.3 497.7,247.5 496.9,249.8 495.8,252.0 494.7,254.4 493.8,256.9 493.2,259.4 492.9,262.1 492.0,264.5 491.2,266.9 491.4,269.5 490.8,272.0 M517.0,222.0 516.7,224.6 515.3,226.9 515.0,229.5 514.5,232.0 M547.0,237.0 545.6,239.4 544.3,241.9 543.2,244.5 M550.0,229.5 554.5,229.0 557.0,232.0 M552.0,244.5 550.6,246.4 549.0,248.2 M510.8,254.5 509.9,256.9 509.4,259.5 509.1,262.1 508.2,264.5 507.7,267.7 506.5,270.8 M550.8,263.2 551.2,265.8 552.0,268.2 M497.0,273.2 497.5,277.0 499.5,279.5 M492.0,280.8 488.2,283.2 485.5,284.1 483.2,285.8 M533.2,278.2 532.6,281.1 532.3,284.1 532.0,287.0 M517.0,287.0 519.9,287.6 522.8,288.1 525.8,288.2 528.9,288.2 532.0,289.0 535.1,290.8 538.2,292.5 541.4,293.1 544.5,294.0 546.9,295.3 549.4,296.3 552.0,297.0 555.0,298.0 558.2,298.2 M509.5,299.5 512.2,299.9 514.4,301.6 517.0,302.0 519.4,303.3 521.8,304.1 524.5,304.5 527.1,304.9 529.6,305.9 532.0,307.0 M534.0,297.0 534.0,299.5 M409.5,283.2 408.6,286.5 407.0,289.5 M417.0,285.8 419.5,286.1 422.0,286.2 M427.0,283.2 426.8,285.8 426.6,288.3 425.8,290.8 425.6,294.0 424.5,297.0 M419.5,307.0 422.2,304.7 424.5,302.0 427.7,302.9 430.8,304.5 M384.5,254.5 384.9,257.0 385.0,259.5 384.2,262.0 383.2,264.5 383.1,267.1 382.0,269.5 M382.0,293.2 385.8,292.5 M499.0,293.2 497.5,296.5 M484.5,297.0 484.8,297.5 M438.2,235.8 438.5,236.0 M405.8,269.5 404.5,272.0 M400.8,253.2 401.0,253.5 M185.0,309.2 183.3,311.3 181.4,313.2 179.2,314.7 177.5,316.8 175.5,318.9 173.5,321.1 171.2,323.0 M198.8,308.0 202.0,311.0 203.8,309.2 M202.0,311.0 202.0,314.2 M166.2,330.5 164.9,332.8 164.6,335.5 163.8,338.0 161.6,339.6 160.0,341.8 M157.5,350.5 155.5,352.9 153.8,355.5 152.3,358.1 150.0,360.0 M206.2,346.0 203.7,345.9 201.2,345.7 198.8,345.5 196.1,346.5 193.8,348.2 191.2,349.2 189.0,350.5 187.1,352.0 185.0,353.5 182.6,354.5 179.9,354.4 177.5,355.5 175.6,357.1 173.2,357.7 171.2,359.2 167.0,360.5 M183.8,361.8 184.7,364.8 185.0,368.0 186.2,370.5 M192.0,361.8 194.8,361.2 197.5,361.8 M243.8,308.0 242.8,310.4 241.0,312.2 239.5,314.3 238.8,316.8 M233.8,325.5 231.8,327.8 230.7,330.7 228.8,333.0 227.5,335.5 226.2,338.0 M232.5,336.8 236.2,337.5 235.0,333.0 M201.2,369.2 199.4,371.3 197.9,373.5 196.3,375.6 195.0,378.0 192.4,379.4 190.0,381.0 187.4,380.3 185.0,379.2 M230.0,350.5 230.4,353.6 230.5,356.8 M218.8,366.0 221.8,364.1 225.0,362.5 227.5,363.2 230.0,362.5 232.5,363.7 235.0,363.5 237.5,362.8 240.0,362.8 242.5,363.0 245.7,363.4 248.8,364.2 M246.2,364.2 247.0,368.0 M155.0,388.0 157.8,386.2 160.0,383.8 163.1,382.8 166.2,381.8 169.4,381.6 172.5,381.8 M177.5,384.2 181.2,385.0 M150.0,403.0 152.4,404.1 155.1,404.1 157.5,405.0 160.6,406.5 163.8,408.0 167.5,410.5 M165.0,408.0 166.0,410.5 167.0,413.0 M181.2,399.2 182.0,400.5 M190.0,402.5 193.8,403.0 M212.5,389.2 213.2,390.5 M211.2,401.8 215.0,403.0 M220.0,398.0 221.2,401.8 M223.8,401.8 226.8,403.3 230.0,404.2 233.0,406.0 236.2,407.2 M205.5,409.2 203.3,411.6 201.2,414.2 199.5,416.2 197.5,418.0 M188.8,420.5 187.0,422.2 185.2,423.9 182.9,424.9 181.2,426.8 178.7,428.3 176.1,429.9 173.8,431.8 M190.0,429.2 192.6,429.3 195.0,430.1 197.4,430.9 200.0,431.0 202.5,431.5 205.1,431.4 207.5,432.2 210.0,432.0 212.5,432.3 215.0,431.8 217.6,432.1 220.1,432.6 222.5,433.5 M237.5,427.5 238.2,428.8 M240.0,341.8 242.5,341.0 245.1,340.8 247.5,340.0 249.7,338.3 251.2,336.0 254.1,335.3 257.0,335.0 260.0,335.0 262.9,334.2 265.8,333.8 268.8,333.5 M271.2,319.2 269.9,321.6 269.3,324.2 268.8,326.8 269.2,330.1 268.8,333.5 M292.5,316.8 290.8,318.7 290.4,321.3 288.9,323.4 287.5,325.5 286.0,327.8 285.2,330.4 284.5,333.0 284.1,335.5 284.2,338.0 284.3,340.5 283.8,343.0 282.9,345.5 282.7,348.1 281.8,350.6 280.9,353.0 280.0,355.5 279.2,358.2 277.6,360.5 276.0,362.9 275.0,365.5 273.6,368.3 272.5,371.3 271.2,374.2 269.3,376.7 267.5,379.2 M278.8,350.5 280.0,354.2 M272.5,349.2 271.3,351.4 270.3,353.6 268.8,355.5 M265.0,364.2 263.8,366.7 262.7,369.1 262.3,371.8 261.2,374.2 M248.8,376.0 251.9,375.8 255.0,375.5 258.2,375.1 261.2,374.2 M245.0,380.5 242.5,381.8 240.0,383.0 240.2,385.5 239.5,388.0 239.2,390.5 239.5,393.0 M267.5,391.8 268.0,395.5 M276.2,391.8 278.8,391.1 281.2,390.0 285.0,391.8 M295.0,393.0 297.1,391.8 298.8,390.0 M301.2,389.2 303.8,386.8 307.5,386.8 M290.0,341.8 291.6,344.1 292.5,346.8 M287.5,367.5 289.1,369.8 291.2,371.8 293.5,370.7 295.5,369.4 297.5,368.0 M291.2,371.8 291.7,374.2 292.0,376.8 M287.5,361.8 287.3,364.6 287.5,367.5 M312.5,366.8 316.2,369.2 317.8,371.7 320.0,373.5 M250.0,309.2 252.5,308.9 255.0,309.4 257.5,309.6 260.0,309.2 262.5,308.7 265.0,308.4 267.5,308.0 270.3,308.9 273.4,308.3 276.2,309.2 M304.2,324.2 304.1,326.7 304.4,329.3 303.6,331.7 303.8,334.2 M325.0,308.0 323.6,310.3 323.1,313.0 322.6,315.7 321.2,318.0 320.5,320.5 320.0,323.0 319.1,325.4 318.8,328.0 317.8,330.5 316.7,332.9 315.6,335.4 315.0,338.0 M310.0,348.0 309.4,350.6 307.9,352.9 307.3,355.5 306.2,358.0 304.7,360.8 304.1,364.0 302.5,366.8 M315.0,328.0 314.5,330.5 315.2,333.0 315.0,335.5 316.1,337.9 316.2,340.5 320.0,338.0 M320.0,340.5 322.2,341.5 324.2,342.9 326.2,344.2 M332.5,323.0 333.3,325.4 333.2,328.0 333.5,330.5 333.8,333.0 333.7,335.5 334.3,338.0 334.6,340.5 334.5,343.0 336.8,344.0 338.8,345.5 342.5,347.5 M342.5,338.0 342.5,340.5 343.0,343.0 M363.8,308.0 362.6,311.0 361.5,314.0 360.0,316.8 M358.8,334.2 358.2,337.0 358.4,339.9 358.1,342.7 357.5,345.5 M381.2,331.8 381.2,334.6 380.6,337.4 380.4,340.2 380.0,343.0 M380.0,345.5 378.9,347.7 377.8,349.9 377.1,352.3 375.6,354.3 375.0,356.8 373.4,358.7 372.9,361.4 370.9,363.1 370.0,365.5 367.8,367.7 366.2,370.5 M365.0,366.8 365.5,369.9 366.2,373.0 M352.5,368.0 351.7,370.7 350.5,373.2 348.8,375.5 347.1,377.8 346.1,380.4 345.0,383.0 M342.0,398.0 342.3,401.0 343.3,403.8 343.8,406.8 345.0,409.2 M347.5,408.0 345.8,409.7 344.3,411.7 342.6,413.5 341.2,415.5 339.6,417.6 337.6,419.4 336.2,421.8 333.7,422.9 331.2,424.2 M330.0,375.0 329.0,377.8 327.8,380.5 326.2,383.0 M323.8,385.5 322.9,388.6 321.3,391.3 320.0,394.2 319.6,396.9 318.4,399.3 317.5,401.8 M362.5,380.5 363.0,381.8 M362.5,428.0 361.9,430.5 362.2,433.1 361.2,435.5 M348.8,414.2 349.0,416.8 349.4,419.3 350.0,421.8 352.5,424.2 356.2,423.0 M357.0,414.2 357.5,418.0 M358.8,428.0 361.2,430.5 M370.0,428.0 369.5,430.5 370.2,433.0 370.0,435.5 M260.0,415.5 262.6,415.4 265.0,414.2 267.5,414.7 270.0,415.1 272.5,415.5 275.7,415.3 278.8,414.2 281.0,412.5 283.8,411.8 285.4,414.4 287.5,416.8 290.0,418.0 291.8,415.6 293.2,412.9 295.0,410.5 296.0,408.1 296.2,405.5 M290.0,418.0 290.1,420.5 290.0,423.0 M291.2,400.5 290.0,403.5 M310.0,413.0 310.5,415.0 M317.5,415.5 316.9,418.0 316.2,420.5 315.3,422.9 315.0,425.5 314.0,428.1 312.6,430.5 311.2,433.0 M287.5,313.0 288.0,314.2 M297.5,309.2 297.8,309.8 M312.5,308.0 312.8,308.8 M355.0,310.5 355.2,311.0 M266.2,436.8 266.5,437.2 M277.5,437.5 278.0,438.0 M392.0,316.8 390.8,319.7 389.4,322.6 388.2,325.5 386.7,327.8 386.0,330.6 384.5,333.0 382.0,335.5 M402.0,338.0 400.7,340.2 399.3,342.3 397.5,344.2 396.0,346.2 394.5,348.2 393.2,350.5 M418.2,316.8 420.0,319.0 421.1,321.6 422.0,324.2 421.2,327.0 421.3,329.9 420.9,332.7 420.8,335.5 M417.0,345.5 416.1,348.0 415.4,350.5 414.5,352.9 413.9,355.5 413.2,358.0 412.2,360.9 411.9,363.9 410.8,366.8 M404.5,364.2 406.9,366.3 409.5,368.0 412.0,365.7 414.5,363.5 417.7,363.3 420.8,362.5 M399.5,371.8 398.2,373.8 396.8,375.8 394.6,377.2 393.2,379.2 390.8,380.1 388.8,381.6 386.8,383.1 384.5,384.2 M400.8,381.8 399.8,384.8 399.5,388.0 M432.0,308.0 432.2,310.6 432.9,313.0 433.8,315.4 434.0,318.0 M433.2,329.2 433.0,332.0 432.4,334.7 431.7,337.4 432.3,340.3 431.5,343.0 431.3,345.7 431.7,348.5 431.5,351.3 430.6,354.0 430.8,356.8 M430.8,318.0 433.2,318.3 435.8,318.5 M427.0,359.2 428.5,361.5 430.8,363.0 433.3,365.5 435.8,368.0 M440.8,319.2 444.5,321.8 446.7,319.7 449.5,318.5 452.0,319.1 454.5,320.0 455.7,322.2 457.0,324.2 M457.0,326.8 457.8,330.5 M440.0,337.5 443.2,339.2 M448.2,338.5 450.8,336.0 M462.0,335.0 460.2,336.8 457.7,337.7 455.8,339.2 455.2,341.9 454.4,344.4 453.2,346.8 452.8,349.7 451.9,352.5 450.2,355.1 449.5,358.0 449.0,360.6 447.1,362.8 447.1,365.7 445.8,368.0 M429.5,401.8 430.8,404.2 M468.2,339.2 465.8,341.8 M467.0,355.5 466.6,358.0 467.2,360.5 466.5,363.0 466.5,365.5 M478.2,320.5 477.8,324.2 M489.5,309.2 488.3,312.0 487.7,314.9 486.2,317.5 485.8,320.5 485.5,323.3 484.2,325.9 484.0,328.7 484.3,331.6 483.2,334.2 M513.2,315.5 514.0,318.6 513.8,321.8 M474.5,353.0 475.6,355.6 477.0,358.0 479.2,355.7 480.8,353.0 M477.0,358.0 477.1,360.6 476.4,363.0 475.6,365.5 475.8,368.1 475.0,370.5 474.3,372.9 474.3,375.5 474.4,378.1 473.7,380.5 473.2,383.0 472.5,386.1 472.0,389.2 472.0,391.8 471.6,394.2 472.1,396.8 471.3,399.2 471.5,401.8 M465.8,390.5 468.9,390.0 472.0,389.2 M462.0,380.5 463.0,383.0 464.0,385.5 464.5,388.1 465.8,390.5 M475.8,370.5 478.0,372.4 480.8,373.5 483.9,373.3 487.0,372.5 489.5,370.5 491.3,372.8 493.2,375.0 495.0,373.2 497.0,371.8 M489.5,364.2 490.0,367.4 489.5,370.5 M519.0,333.0 520.1,330.6 520.8,328.0 M522.0,326.8 523.2,328.9 524.1,331.1 525.8,333.0 529.5,331.8 533.2,333.0 537.0,331.0 539.4,332.3 542.0,333.0 M536.2,325.5 536.6,328.2 536.5,331.0 M488.2,381.8 487.5,384.9 486.0,387.7 484.5,390.5 482.0,394.2 M460.8,366.8 460.2,369.6 459.4,372.4 458.5,375.1 458.2,378.0 M450.8,379.2 449.8,381.7 449.1,384.2 448.8,386.7 448.2,389.2 447.9,392.2 446.7,395.0 446.5,398.0 M463.2,404.2 461.7,407.2 460.8,410.5 M458.2,418.0 458.2,420.5 458.3,423.0 457.6,425.5 457.5,428.0 457.0,430.7 457.6,433.4 456.9,436.0 457.0,438.8 M444.0,416.8 447.4,417.2 450.8,416.8 453.3,416.9 455.7,417.7 458.2,418.0 M464.5,415.5 464.2,418.0 464.3,420.5 464.5,423.0 464.4,425.5 464.0,428.0 463.5,430.7 463.3,433.4 463.5,436.1 463.2,438.8 M439.5,404.2 440.1,406.7 439.5,409.3 440.0,411.8 M417.0,396.8 417.5,399.7 418.9,402.5 419.5,405.5 419.6,408.0 419.4,410.5 420.0,413.0 M419.5,415.5 418.3,417.9 417.8,420.5 417.0,423.0 M422.0,421.8 422.7,424.3 424.0,426.7 424.7,429.3 425.8,431.8 422.0,433.0 M432.0,421.8 430.8,423.9 429.5,425.9 428.2,428.0 425.8,431.8 M387.0,394.2 387.4,396.8 387.5,399.2 386.5,401.8 387.0,404.2 M400.8,403.0 400.9,406.1 400.8,409.2 M412.0,395.5 410.8,399.2 M383.2,415.5 383.7,418.6 383.2,421.8 M469.5,420.5 470.8,421.0 M536.5,343.0 536.0,346.0 535.1,348.8 534.5,351.8 M544.5,338.0 544.4,340.6 543.7,343.1 542.1,345.4 542.0,348.0 541.0,350.4 540.8,353.0 540.1,355.5 539.5,358.0 539.1,360.6 538.0,362.9 537.7,365.5 537.0,368.0 M544.5,338.0 547.2,337.6 549.6,336.6 552.0,335.5 M553.2,329.2 552.9,332.4 553.2,335.5 M552.0,335.5 554.5,335.9 557.0,335.0 559.5,334.6 562.0,335.0 564.6,335.3 567.1,335.9 569.6,336.4 572.0,337.5 574.7,337.9 577.0,339.2 579.5,340.0 583.2,342.5 M533.2,374.2 532.4,377.1 532.5,380.1 532.0,383.0 M532.0,383.0 534.9,384.7 538.2,385.5 539.1,387.8 541.2,389.4 542.0,391.8 543.8,393.4 545.8,394.8 547.9,396.1 549.5,398.0 551.8,399.7 554.6,400.3 557.0,401.8 559.9,403.1 562.8,404.4 565.8,405.5 M522.0,399.2 520.3,401.5 519.0,404.0 518.2,406.8 516.6,409.4 514.5,411.8 M577.0,379.2 578.1,376.4 578.9,373.5 579.5,370.5 580.6,368.1 581.5,365.5 M575.8,365.5 578.6,366.0 581.5,365.5 M594.5,347.5 595.8,345.0 597.3,342.6 597.9,339.8 599.5,337.5 600.6,334.5 602.0,331.8 M598.2,355.5 601.2,355.9 604.1,356.0 607.0,356.8 609.6,357.7 612.0,359.2 M569.5,408.0 572.7,408.2 575.8,409.2 578.3,408.8 580.8,408.0 583.2,409.7 584.7,412.3 587.0,414.2 589.6,415.2 592.2,416.3 594.5,418.0 597.5,419.7 600.8,420.5 M607.0,408.0 606.6,411.0 604.9,413.7 604.5,416.8 M558.2,353.0 558.8,355.6 560.0,358.0 560.9,360.3 562.0,362.5 M544.5,358.0 548.2,359.2 M568.2,375.0 568.5,375.5 M585.8,391.8 587.5,391.0 M602.0,386.8 602.8,388.0 M529.5,308.0 532.0,308.8 534.6,309.0 537.0,310.0 540.0,310.0 542.9,310.2 545.8,311.0 M510.8,418.0 509.7,420.4 509.0,423.0 508.2,425.5 507.7,428.1 506.0,430.4 505.7,433.1 504.5,435.5 M494.5,433.0 496.5,431.3 498.4,429.4 500.8,428.0 503.2,427.5 505.8,427.5 M517.0,425.5 518.2,428.0 M563.8,423.5 563.2,426.2 563.6,429.0 563.2,431.8 M575.8,426.8 576.5,429.2 M583.2,433.0 586.3,432.4 589.5,432.5 M605.8,429.2 608.3,429.9 610.8,430.5 613.4,432.2 615.8,434.2 M548.2,434.2 549.8,436.4 552.0,438.0 M188.8,465.0 191.0,467.0 193.8,468.0 197.0,468.5 200.0,470.0 202.9,471.9 206.2,473.0 M218.8,471.0 221.2,471.7 223.8,472.0 M240.8,471.0 245.0,473.0 248.1,472.1 251.2,471.8 253.8,472.4 256.2,473.0 259.1,473.8 261.8,475.0 M269.5,460.0 272.2,458.7 275.0,458.0 279.5,457.0 M307.0,470.5 305.0,472.6 302.5,474.2 M318.0,450.0 318.2,450.5 M313.2,461.8 313.5,462.2 M381.2,444.2 380.1,446.9 379.5,449.8 378.9,452.6 378.8,455.5 378.7,458.1 378.1,460.5 377.0,462.9 377.0,465.5 M377.5,476.8 375.1,477.8 372.5,478.0 370.7,479.7 369.5,481.9 367.4,483.3 366.2,485.5 M266.2,437.5 266.5,438.0 M402.0,438.0 400.2,439.9 397.9,441.4 396.6,443.8 394.5,445.5 392.9,447.6 391.7,450.1 390.1,452.3 388.2,454.2 386.7,457.0 385.5,460.0 384.5,463.0 383.5,465.6 382.0,468.0 M422.0,444.2 422.5,447.4 422.0,450.5 424.5,454.2 M404.5,458.0 404.1,460.5 403.9,463.0 403.8,465.5 403.2,468.0 402.7,470.6 401.5,473.0 M414.5,465.5 415.0,468.0 415.6,470.6 416.5,473.0 M413.2,479.2 410.0,480.2 407.0,481.8 M428.2,465.5 429.1,468.3 428.8,471.4 429.5,474.2 M429.5,474.2 432.7,475.3 435.8,476.8 439.5,475.5 M434.5,476.8 435.0,480.5 M449.5,466.8 449.0,469.2 448.8,471.7 449.0,474.2 M449.0,474.2 449.5,477.5 450.8,480.5 450.6,483.7 450.0,486.8 M457.0,439.2 456.8,441.8 456.3,444.2 456.6,446.8 455.8,449.2 454.5,453.0 M444.5,429.2 445.1,432.2 445.9,435.1 446.5,438.0 446.7,440.5 447.4,443.0 447.0,445.5 447.5,448.0 M458.2,481.8 458.3,484.9 459.0,488.0 M462.5,466.0 462.8,466.5 M489.5,443.0 489.8,445.0 M498.2,466.8 498.2,469.9 499.0,473.0 M519.0,455.5 518.6,458.0 518.8,460.5 518.2,463.0 518.2,465.5 518.5,468.0 517.3,470.5 517.0,473.0 517.3,475.5 517.0,478.0 M517.0,478.0 519.5,478.6 522.0,479.2 524.5,478.7 527.0,478.0 529.5,479.3 532.0,480.5 534.9,480.1 537.8,481.3 540.8,481.0 543.3,481.4 545.8,482.0 548.2,483.0 551.2,482.7 554.1,483.1 557.0,483.5 559.4,484.6 562.2,484.6 564.6,485.5 567.0,486.8 M526.5,465.5 526.3,468.0 526.8,470.5 527.0,473.0 526.4,475.5 526.5,478.0 M517.0,460.0 520.0,460.0 M550.8,436.8 552.6,439.3 554.5,441.8 557.0,442.1 559.5,442.5 M561.5,457.5 562.0,461.8 M575.8,448.0 578.8,449.7 582.0,451.0 584.7,452.3 587.0,454.2 M583.2,434.2 585.8,432.5 588.2,433.0 590.8,433.0 M594.0,436.0 594.2,436.5 M605.8,430.5 608.2,429.8 610.8,430.0 612.9,431.2 614.5,433.0 616.5,435.5 M609.5,446.8 613.2,449.2 M585.8,485.5 589.5,483.5 594.0,484.2 M605.8,470.5 606.0,471.0 M609.5,483.0 609.8,483.5 M563.8,424.2 563.6,426.8 563.5,429.2 563.6,431.8 563.2,434.2 M575.8,426.2 577.5,426.8 576.5,429.2 M210.0,78.0 206.7,78.9 203.8,80.5 202.2,82.6 200.0,84.0 199.3,87.3 198.0,90.5 M166.2,97.8 164.1,98.9 162.1,100.3 160.0,101.5 M240.0,99.8 242.5,100.2 M243.8,109.8 246.3,110.1 248.8,110.5 M317.0,69.0 317.1,71.4 316.9,73.9 316.7,76.3 316.0,78.7 315.5,81.0 315.8,83.5 314.4,86.5 313.8,89.8 M321.2,105.5 324.3,104.7 327.5,104.2 M291.2,147.2 294.2,146.4 297.1,145.6 300.0,144.8 M340.0,84.8 342.5,85.1 345.0,85.5 M380.0,78.5 377.1,78.8 374.5,80.0 371.6,79.9 368.8,80.5 367.1,82.4 365.8,84.5 363.8,86.0 362.0,88.6 360.0,91.0 M337.5,62.5 338.8,62.8 M387.5,119.0 390.0,119.8 392.0,121.5 394.6,121.3 397.0,120.5 M489.5,86.0 492.5,85.9 495.3,85.2 498.2,84.8 M463.2,129.8 467.0,128.5 468.2,131.0 M549.5,57.2 552.5,57.4 555.3,58.5 558.2,58.5 M233.8,245.0 236.2,244.4 238.8,244.0 M258.8,187.0 262.5,185.8 M312.5,185.8 315.0,184.5 M305.0,252.0 304.0,254.9 303.1,257.8 302.5,260.8 M350.0,284.0 347.6,285.5 345.7,287.6 343.8,289.5 342.2,291.8 341.6,294.7 340.0,297.0 M340.0,206.5 342.6,206.7 345.0,207.7 347.4,208.4 350.1,208.0 352.5,209.0 M360.0,209.5 361.2,210.2 M362.5,240.0 364.5,240.5 M392.0,216.5 394.3,217.9 397.0,218.2 400.2,218.1 403.2,217.5 M457.0,201.5 459.4,202.4 462.0,202.4 464.5,202.8 467.0,203.3 469.5,203.4 472.0,204.0 M515.8,194.5 517.0,196.5 M180.0,329.2 181.2,329.8 M232.5,378.5 236.2,380.5 M259.5,391.8 262.2,392.1 265.0,391.8 M287.5,340.5 289.9,341.7 292.5,342.5 295.0,342.0 297.5,341.1 300.0,340.5 302.5,340.7 305.0,341.5 307.5,341.8 M277.5,369.2 280.6,369.5 283.8,370.0 287.5,367.5 M331.2,353.0 331.5,356.8 M351.2,369.2 353.7,369.8 356.3,369.4 358.8,370.0 361.3,370.0 363.8,369.2 M475.5,409.2 476.0,411.8 477.0,414.2 M478.2,394.2 479.0,395.0 M555.8,374.2 558.2,376.0 M492.0,343.0 492.2,343.5 M155.0,445.0 157.6,445.5 160.0,446.8 164.5,446.8 M373.0,446.2 375.0,446.8 M277.0,438.5 277.5,439.2 M484.5,456.8 487.0,459.2 490.0,461.0 M496.5,471.0 499.5,471.6 502.5,472.5 M568.2,441.0 572.0,441.0 M192.0,71.0 191.3,73.5 191.4,76.1 190.3,78.5 190.0,81.0 189.8,83.6 188.8,86.0 188.3,88.5 188.4,91.1 187.5,93.5 187.0,96.0 M171.2,143.5 169.5,146.5 M201.2,131.0 202.1,127.9 203.3,125.0 205.0,122.2 M236.2,71.0 235.2,73.4 234.8,76.1 233.8,78.5 M237.5,86.0 236.7,88.7 235.6,91.4 235.4,94.3 234.3,96.9 233.8,99.8 M235.0,129.8 235.9,126.8 237.2,124.0 238.0,121.0 M230.0,159.8 228.7,162.4 227.8,165.3 226.8,168.1 226.2,171.0 M277.0,129.8 275.6,132.2 274.7,135.0 272.8,137.2 270.9,139.5 270.0,142.2 268.4,144.3 267.3,146.6 266.5,149.1 265.1,151.3 263.8,153.5 262.8,156.2 261.0,158.4 260.0,161.0 258.8,163.5 M307.5,83.5 306.8,86.0 306.1,88.6 305.0,91.0 M307.0,93.5 306.2,96.0 305.4,98.4 305.5,101.1 304.2,103.5 303.8,106.0 302.8,108.4 302.4,110.9 302.0,113.4 301.8,116.0 301.2,118.5 M292.5,112.2 291.6,114.9 291.3,117.6 291.6,120.4 290.5,123.0 289.9,125.7 290.0,128.5 289.6,131.0 289.7,133.5 289.2,136.0 289.4,138.5 288.8,141.0 M316.2,131.0 315.2,133.4 315.0,136.0 M362.0,59.8 361.2,62.6 360.4,65.4 359.1,68.1 358.8,71.0 357.7,73.4 356.7,75.9 355.7,78.3 355.6,81.1 354.5,83.5 M354.5,83.5 352.9,85.8 351.9,88.3 351.4,91.2 350.3,93.7 348.8,96.0 347.6,98.5 346.7,101.2 345.3,103.6 344.2,106.2 342.5,108.5 341.3,110.7 340.2,112.9 339.1,115.1 338.8,117.7 337.5,119.8 M331.2,136.0 329.8,138.3 329.7,141.1 328.0,143.3 327.5,146.0 326.9,148.5 326.0,151.0 324.7,153.3 324.1,155.9 323.8,158.5 323.4,161.1 322.4,163.5 321.6,166.0 321.1,168.5 320.5,171.1 319.7,173.6 318.8,176.0 M358.0,97.2 357.1,99.5 356.7,101.9 355.0,103.8 354.3,106.1 353.8,108.5 352.0,111.2 351.6,114.5 350.0,117.2 M377.5,99.8 376.0,101.9 375.2,104.5 374.1,106.8 372.6,109.0 370.9,111.0 370.0,113.5 368.7,115.9 368.2,118.6 367.4,121.1 365.6,123.3 365.0,126.0 364.0,128.8 362.9,131.6 362.6,134.6 361.2,137.2 M350.0,163.5 350.0,166.1 349.1,168.5 348.8,171.0 M417.0,86.0 415.5,88.2 414.5,90.6 413.5,93.0 412.0,95.2 410.3,97.2 409.5,99.8 408.6,102.4 406.7,104.6 405.8,107.3 404.5,109.8 403.2,112.2 402.1,114.6 401.7,117.3 400.8,119.8 M444.5,83.5 443.6,86.2 442.1,88.5 441.0,91.1 439.0,93.3 438.2,96.0 436.5,98.3 435.7,101.0 434.8,103.6 432.8,105.8 432.0,108.5 M485.0,58.0 484.2,60.7 482.9,63.2 482.3,66.1 480.8,68.5 479.7,71.1 478.7,73.7 477.1,76.0 476.2,78.7 474.5,81.0 473.7,83.5 472.2,85.6 471.0,87.9 469.4,90.0 468.2,92.2 M457.0,112.2 456.4,115.1 455.0,117.6 455.1,120.6 453.8,123.2 453.2,126.0 452.3,128.5 452.2,131.1 450.6,133.4 449.8,135.9 449.5,138.5 M528.2,58.5 527.4,61.0 526.0,63.1 524.3,65.1 523.5,67.7 522.0,69.8 520.3,71.9 518.6,74.0 517.5,76.5 516.1,78.8 514.5,81.0 513.3,83.3 511.8,85.4 510.5,87.6 509.4,89.9 508.2,92.2 505.8,96.0 M542.0,71.0 541.6,73.6 540.6,76.0 539.9,78.4 539.5,81.0 538.5,83.2 538.0,85.7 537.0,87.9 536.2,90.2 535.4,92.5 534.5,94.8 533.8,97.2 532.0,99.2 531.7,101.8 529.9,103.7 528.9,106.0 528.2,108.5 527.8,111.2 526.4,113.5 525.1,115.9 524.5,118.5 M519.5,128.5 518.7,130.9 517.0,132.9 516.7,135.5 515.3,137.6 514.7,140.1 513.2,142.2 512.2,144.7 510.7,147.1 510.5,149.9 508.8,152.1 508.0,154.7 507.0,157.2 505.8,159.6 505.3,162.2 505.0,164.8 503.6,167.1 503.2,169.8 502.0,172.9 500.8,176.0 M507.0,102.2 505.3,104.3 503.7,106.5 502.0,108.5 500.9,110.7 499.8,112.9 498.2,114.8 M495.8,118.5 493.8,120.8 492.9,123.8 490.8,126.0 489.6,128.4 488.5,130.9 488.3,133.6 487.0,136.0 485.6,138.3 484.8,140.9 483.6,143.3 483.2,146.1 482.0,148.5 M475.8,157.2 474.1,159.4 472.7,161.7 471.1,163.9 469.5,166.0 468.1,168.6 466.8,171.3 465.2,173.7 463.2,176.0 M557.0,138.5 556.4,141.1 555.8,143.7 554.5,146.0 552.8,148.3 552.4,151.2 550.8,153.5 549.5,156.0 548.4,158.6 547.2,161.1 545.5,163.4 544.0,165.8 543.2,168.5 542.2,171.1 540.6,173.4 539.5,176.0 M208.8,188.2 205.5,191.5 M222.5,179.5 221.8,182.4 220.6,185.1 219.3,187.8 218.8,190.8 217.3,193.1 216.3,195.8 215.1,198.3 213.8,200.8 M176.2,213.2 177.5,212.0 M193.8,225.8 192.4,227.8 191.4,230.1 191.2,232.7 190.2,235.0 188.8,237.0 188.0,239.5 187.3,241.9 187.3,244.5 186.7,247.0 186.2,249.5 M230.0,198.2 228.9,200.4 227.7,202.6 227.0,205.0 225.9,207.2 225.0,209.5 224.2,211.9 222.2,213.7 221.5,216.2 220.0,218.2 M248.8,207.0 249.6,204.6 249.3,202.0 249.5,199.4 250.2,197.0 250.7,194.5 251.2,192.0 M240.0,223.2 238.4,225.7 237.1,228.4 234.9,230.5 233.8,233.2 232.7,235.8 230.9,238.1 230.3,240.9 228.8,243.2 M298.8,177.0 297.6,179.3 295.9,181.3 295.5,184.0 293.8,186.0 292.5,188.2 M307.0,190.8 305.3,192.8 304.0,195.1 303.2,197.8 301.8,200.0 300.0,202.0 298.5,204.8 296.2,207.0 M337.5,177.0 335.8,179.4 333.6,181.2 332.0,183.7 330.0,185.8 328.3,188.1 326.7,190.5 324.2,192.1 322.5,194.5 M345.0,177.0 344.3,179.6 343.1,182.0 342.0,184.5 340.6,186.8 340.0,189.5 338.7,192.2 336.6,194.3 335.1,196.9 333.8,199.5 M331.2,209.5 330.2,212.1 328.9,214.6 327.6,217.1 326.0,219.4 325.0,222.0 324.2,224.7 322.8,227.1 321.0,229.4 320.0,232.0 M306.2,230.8 307.1,228.4 308.8,226.6 310.0,224.5 M310.0,243.2 309.0,245.6 307.6,247.7 306.1,249.7 305.0,252.0 M298.8,239.5 297.4,242.1 295.6,244.5 294.2,247.1 292.5,249.5 M257.0,264.5 256.1,267.0 254.9,269.4 253.9,271.9 253.0,274.3 252.5,277.0 252.4,279.6 251.5,282.1 251.0,284.6 250.0,287.0 M357.5,264.5 358.6,262.3 360.5,260.6 362.3,259.0 363.8,257.0 M370.0,237.0 370.6,234.3 371.9,232.0 373.1,229.5 374.1,227.1 375.0,224.5 375.2,221.9 375.9,219.4 377.1,217.1 377.4,214.5 377.9,211.9 378.8,209.5 379.4,206.5 380.9,203.8 381.2,200.8 M268.8,272.0 267.6,274.6 266.3,277.0 265.0,279.5 M262.5,284.5 260.2,286.3 258.9,289.0 257.1,291.3 255.0,293.2 253.2,295.0 252.1,297.2 250.7,299.2 248.8,300.8 M345.0,263.2 343.3,265.7 341.3,268.0 340.0,270.8 339.1,273.2 337.5,275.1 336.0,277.1 335.0,279.5 M381.2,272.0 379.7,274.4 379.0,277.1 377.6,279.5 376.2,282.0 374.7,284.3 373.4,286.8 372.8,289.7 371.2,292.0 370.3,294.6 368.8,297.0 367.5,299.5 366.2,302.0 365.1,304.6 363.8,307.0 M192.5,292.0 192.4,294.6 191.2,297.0 M422.0,239.5 420.7,241.6 420.4,244.2 419.0,246.2 417.6,248.3 417.0,250.8 M435.8,263.2 434.9,266.0 432.9,268.1 432.2,270.9 430.8,273.2 429.4,276.3 428.2,279.5 M500.8,177.0 499.6,179.5 498.2,182.0 496.6,184.3 496.1,187.2 494.5,189.5 493.5,192.1 491.8,194.4 491.2,197.2 490.0,199.7 488.2,202.0 M479.0,225.8 478.5,228.3 477.7,230.9 477.0,233.4 475.8,235.8 474.5,238.6 473.2,241.4 472.5,244.5 M443.2,258.2 444.6,260.5 446.2,262.7 447.5,265.0 449.5,269.0 450.0,271.7 450.9,274.3 451.5,277.0 M441.5,287.0 440.3,290.4 438.2,293.2 M535.8,177.0 534.8,179.5 534.0,182.0 533.2,184.6 532.0,187.0 M554.5,194.5 553.4,196.7 552.2,198.9 551.8,201.4 550.7,203.6 549.5,205.8 548.4,208.0 547.4,210.4 545.4,212.1 544.5,214.5 543.0,216.5 541.8,218.8 541.2,221.3 539.5,223.2 537.9,225.6 537.0,228.2 M530.8,249.5 530.2,252.1 529.6,254.7 528.5,257.1 527.5,259.5 526.9,262.0 526.6,264.5 526.5,267.0 M507.0,219.5 505.8,221.9 505.1,224.5 504.4,227.1 503.2,229.5 502.3,232.4 501.1,235.2 500.8,238.2 M543.2,244.5 541.5,246.8 540.8,249.5 539.2,251.8 538.2,254.5 536.8,256.5 535.4,258.5 534.5,260.8 M483.2,285.8 482.3,288.1 481.2,290.4 479.9,292.5 478.2,294.5 476.6,296.8 475.9,299.6 474.9,302.2 473.2,304.5 472.0,307.8 M510.8,279.5 510.4,282.2 509.6,284.7 508.2,287.0 505.8,289.5 M407.0,289.5 406.2,292.2 404.2,294.3 402.9,296.8 402.0,299.5 400.6,301.9 399.2,304.3 398.2,307.0 M238.8,316.8 238.0,319.2 236.3,321.1 235.0,323.3 233.8,325.5 M212.5,350.5 211.5,353.1 209.8,355.4 208.8,358.0 207.5,360.5 206.3,362.9 204.3,364.8 203.2,367.3 201.2,369.2 M268.8,355.5 267.4,358.4 266.3,361.4 265.0,364.2 M223.8,375.5 224.5,376.8 M315.0,338.0 313.7,340.5 312.6,343.0 310.8,345.3 310.0,348.0 M335.0,308.0 332.9,310.2 331.6,313.0 330.0,315.5 329.0,317.7 327.2,319.5 326.2,321.8 M360.0,316.8 359.4,319.4 357.7,321.6 356.7,324.1 355.9,326.7 355.0,329.2 353.8,331.5 352.4,333.7 351.5,336.1 349.6,338.0 348.8,340.5 346.8,342.9 344.5,345.1 342.5,347.5 341.5,350.0 340.9,352.7 340.7,355.4 340.0,358.0 339.4,361.0 338.3,363.8 337.5,366.8 337.1,369.4 335.5,371.6 335.0,374.2 334.1,376.6 332.6,378.6 332.2,381.1 331.1,383.3 330.0,385.5 329.2,387.9 328.1,390.0 327.3,392.4 326.5,394.7 325.0,396.8 M345.0,383.0 344.4,385.6 343.7,388.1 342.5,390.5 342.7,393.0 342.5,395.5 342.0,398.0 M366.2,370.5 365.6,373.1 363.8,375.3 363.0,377.9 362.6,380.6 361.2,383.0 359.9,385.3 359.3,388.0 358.1,390.4 357.5,393.0 356.1,395.1 354.6,397.2 353.5,399.4 352.5,401.8 350.5,403.6 349.4,406.1 347.5,408.0 M381.2,375.5 380.9,378.1 379.8,380.5 379.0,383.0 378.2,385.5 377.5,388.0 376.6,390.4 377.0,393.1 375.6,395.4 375.5,398.0 375.0,400.5 373.7,403.0 372.3,405.4 370.9,407.8 370.0,410.5 368.9,413.1 367.6,415.5 365.8,417.8 365.0,420.5 364.6,423.1 363.2,425.5 362.5,428.0 M419.5,308.0 417.9,310.8 417.1,313.9 415.8,316.8 M393.2,350.5 392.1,353.3 389.9,355.4 388.2,357.8 387.0,360.5 385.7,362.7 384.9,365.1 383.4,367.2 382.0,369.2 M420.8,335.5 419.5,337.9 418.5,340.3 417.8,343.0 417.0,345.5 M470.8,308.0 468.7,310.2 467.0,312.7 465.8,315.5 464.5,317.6 463.3,319.7 462.0,321.8 M437.0,385.5 436.0,388.1 434.3,390.4 433.6,393.2 432.0,395.5 431.2,398.8 429.5,401.8 M472.0,331.8 470.5,334.1 469.3,336.6 468.2,339.2 M469.5,349.2 467.9,352.2 467.0,355.5 M471.5,401.8 470.1,403.9 468.4,405.8 467.0,408.0 M497.0,371.8 498.7,369.8 499.7,367.5 501.1,365.4 502.0,363.0 503.5,360.8 505.4,358.9 507.0,356.8 509.1,355.0 510.6,352.8 512.0,350.5 513.3,348.0 514.3,345.4 515.7,343.0 517.0,340.5 518.1,338.1 518.2,335.5 519.0,333.0 M458.2,378.0 457.0,380.8 457.1,384.0 455.8,386.8 454.8,389.2 454.5,391.8 M460.8,410.5 459.7,412.9 458.7,415.4 458.2,418.0 M417.0,423.0 415.1,425.2 413.2,427.3 411.6,429.8 409.5,431.8 408.1,434.0 406.4,436.1 404.5,438.0 M534.5,351.8 533.3,354.1 533.0,356.9 531.6,359.2 530.8,361.8 M532.0,383.0 529.9,385.2 528.5,387.9 527.0,390.5 525.9,392.7 524.5,394.9 523.6,397.2 522.0,399.2 M565.8,405.5 566.3,403.0 567.5,400.9 568.6,398.7 570.2,396.7 570.8,394.2 572.4,391.5 573.6,388.6 574.5,385.5 575.3,382.2 577.0,379.2 M594.5,347.5 596.0,350.1 597.4,352.7 598.2,355.5 M612.0,359.2 615.0,362.5 M613.2,388.0 612.9,390.6 611.5,392.9 611.0,395.4 610.8,398.0 609.4,400.3 609.2,403.1 608.0,405.5 607.0,408.0 M547.0,326.8 548.2,324.2 549.3,321.7 550.8,319.2 552.7,316.9 554.1,314.2 555.8,311.8 M302.5,474.2 301.1,477.2 299.5,480.0 M366.2,485.5 364.5,487.4 361.9,488.2 360.0,490.0 M417.0,423.0 415.2,425.0 413.5,427.0 411.8,429.0 409.5,430.5 407.4,432.1 405.7,434.2 404.1,436.4 402.0,438.0 M407.0,481.8 406.5,484.2 406.5,486.8 405.8,489.2 M429.5,474.2 428.3,476.8 426.8,479.1 425.8,481.8 425.4,484.4 423.8,486.6 423.2,489.2 M449.0,474.2 447.5,476.3 446.4,478.7 444.5,480.5 443.2,482.9 442.9,485.5 442.0,488.0 M463.2,445.5 462.3,448.2 460.4,450.3 459.5,453.0 458.8,455.5 458.2,458.1 457.0,460.5 M585.8,451.8 586.6,454.4 588.2,456.8 M265.8,69.8 264.5,74.0 M397.0,59.8 396.0,62.1 394.9,64.3 393.6,66.5 392.0,68.5 391.2,71.2 389.8,73.6 388.4,76.1 387.0,78.5 386.2,81.1 384.7,83.4 384.2,86.1 383.0,88.5 382.0,91.0 M453.2,58.5 452.9,61.1 451.4,63.4 450.6,65.9 450.1,68.4 449.5,71.0 448.7,73.6 447.8,76.1 446.7,78.6 445.5,81.0 444.5,83.5 M544.5,108.5 542.9,110.5 542.2,113.0 540.3,114.8 539.5,117.2 538.5,119.6 537.2,121.8 535.7,123.8 534.5,126.0 533.6,128.7 532.1,131.1 530.3,133.3 529.5,136.0 M201.2,237.0 200.3,239.2 198.7,241.1 197.5,243.2 196.1,246.4 193.8,249.0 M265.0,208.2 263.5,210.9 262.7,213.7 262.4,216.7 261.2,219.5 260.6,222.4 258.9,225.0 258.2,227.9 257.5,230.8 M281.2,262.5 283.8,263.3 286.2,264.5 M326.2,202.0 326.5,202.2 M392.0,179.5 391.1,182.2 389.6,184.5 388.7,187.2 387.0,189.5 386.1,192.0 385.0,194.5 384.5,197.2 382.9,199.4 382.0,202.0 M448.2,215.8 447.7,218.2 448.4,220.8 447.3,223.2 447.6,225.7 447.7,228.3 447.5,230.8 446.7,233.5 446.9,236.4 445.7,239.1 445.8,242.0 M442.0,250.8 440.5,253.1 439.6,255.8 438.6,258.4 436.8,260.6 435.8,263.2 M442.0,278.2 444.4,279.7 447.0,280.8 449.5,284.0 M497.0,277.0 494.8,279.2 492.0,280.8 M223.8,338.0 227.5,339.2 M226.2,338.0 224.5,339.7 222.3,340.8 220.8,342.9 218.8,344.2 216.3,346.0 214.8,348.6 212.5,350.5 M268.8,333.5 271.2,334.4 273.9,334.8 276.2,336.0 278.8,336.1 281.3,336.2 283.8,336.8 M297.5,368.0 300.3,367.4 303.1,367.3 305.9,367.0 308.8,366.8 M302.5,364.2 302.6,367.4 303.0,370.5 M415.8,316.8 414.3,319.0 413.0,321.5 411.4,323.6 409.5,325.6 408.3,328.1 407.0,330.5 405.1,332.8 403.8,335.6 402.0,338.0 M409.5,368.0 409.7,371.2 409.0,374.2 M434.0,318.0 434.0,320.8 433.7,323.6 433.6,326.5 433.2,329.2 M445.8,368.0 444.5,370.8 444.5,373.9 443.2,376.8 442.9,380.0 441.5,383.0 439.1,384.0 437.0,385.5 M510.8,376.8 511.9,378.9 513.2,381.0 M581.5,365.5 582.5,363.1 583.9,360.9 585.9,359.1 587.0,356.8 589.3,354.7 590.9,352.2 592.5,349.7 594.5,347.5 M407.0,444.2 405.5,447.0 403.2,449.2" fill="none" stroke="#000" stroke-opacity="0.15" stroke-width="1.3" stroke-dasharray="1.5 4 2.5 7 1 5.5 3 9"/>
</g></svg>
<svg width="967" height="524" viewBox="0 0 967 524">
<path d="M379.7,46a5.1,4 0 0 0 10.2,0" fill="#000" stroke="#c8c8c8" stroke-width="2.1"/>
<path d="M382.4,46.2l2.4,1.5l2.4,-1.5" fill="none" stroke="#000" stroke-width="1.3"/>
<defs><linearGradient id="lg" x1="0" y1="1" x2="0" y2="0"><stop offset="0" stop-color="#0000e0"/><stop offset="0.08" stop-color="#0040ff"/><stop offset="0.22" stop-color="#00d8ff"/><stop offset="0.36" stop-color="#00f080"/><stop offset="0.5" stop-color="#00e800"/><stop offset="0.64" stop-color="#90f000"/><stop offset="0.76" stop-color="#f8e800"/><stop offset="0.88" stop-color="#ff7000"/><stop offset="1" stop-color="#ff1800"/></linearGradient></defs>
<rect x="43" y="81.6" width="10.2" height="59.8" fill="url(#lg)"/>
<text transform="translate(53,85.4) scale(0.85,1)" font-family="Liberation Sans, sans-serif" font-size="6.1" fill="#e8e8e8">+29490</text>
<text transform="translate(53,142.4) scale(0.85,1)" font-family="Liberation Sans, sans-serif" font-size="6.1" fill="#e8e8e8">+3277</text>
<text transform="translate(30.4,150) scale(0.85,1)" font-family="Liberation Sans, sans-serif" font-size="6.1" fill="#e0e0e0">FAULT_EXPRESSION_Detect_CMY</text>
<defs><linearGradient id="cg" x1="0" y1="0" x2="0" y2="1"><stop offset="0" stop-color="#d83020"/><stop offset="0.35" stop-color="#d88a20"/><stop offset="0.7" stop-color="#8aa828"/><stop offset="1" stop-color="#20a040"/></linearGradient><linearGradient id="ng" x1="0" y1="0" x2="1" y2="0"><stop offset="0" stop-color="#e04818"/><stop offset="0.45" stop-color="#58b050"/><stop offset="1" stop-color="#1878d0"/></linearGradient></defs>
<circle cx="63.7" cy="447.5" r="24.3" fill="#cdcdcd" stroke="url(#cg)" stroke-width="2"/>
<path d="M63.6,435.6l7.6,24.6l-7.4,-3.4l-7.6,3.4z" fill="url(#ng)"/>
<text x="63.5" y="431.2" font-size="7" font-family="Liberation Sans, sans-serif" font-weight="bold" fill="#161616" text-anchor="middle">N</text>
<text x="63.5" y="468.2" font-size="5" font-family="Liberation Sans, sans-serif" font-weight="bold" fill="#161616" text-anchor="middle">S</text>
<text x="45.8" y="450.2" font-size="5.6" font-family="Liberation Sans, sans-serif" font-weight="bold" fill="#161616" text-anchor="middle">W</text>
<text x="82.6" y="450.2" font-size="5.6" font-family="Liberation Sans, sans-serif" font-weight="bold" fill="#161616" text-anchor="middle">E</text>
<g fill="none" stroke="#d4d4d4" stroke-width="0.85" stroke-linejoin="round" stroke-linecap="round"><path d="M479.5,407.8L479.2,405.5Q479.6,404.2 480.6,404.6L481,405.7Q481.5,404.2 482.5,404.4L483,405.7Q483.6,404.3 484.5,404.6L485,405.9Q485.8,404.9 486.5,405.5L487,406.7L487.4,410.2L488.6,411.6L488.8,413.6L489.7,414.7"/><path d="M481.7,408.5Q480.7,410.5 479.7,410L478.7,408.5Q478,409.6 478.4,410.7L480.2,412.4L481.6,412.8L484.7,415.7"/><path d="M481,405.7l0.6,2M483,405.7l0.5,2M485,405.9l0.4,1.8" stroke-width="0.6"/></g>
</svg>
<div class="a" style="left:755.1px;top:46px;width:15px;height:466px;background:#f0f0f0;"></div>
<div class="a" style="left:770.4px;top:44.2px;width:196.6px;height:10px;background:linear-gradient(180deg,#c4c4c4,#e6e6e6);"></div>
<div class="t" style="left:773.8px;top:46.88px;font-size:6.83px;color:#111;transform:scaleX(0.820);">Project Tree</div>
<div class="a" style="left:772.6px;top:57.4px;width:190.4px;height:13.2px;background:#fff;border:1px solid #c2c6cc;"></div>
<svg width="967" height="524" viewBox="0 0 967 524"><circle cx="957.9" cy="63" r="3.6" fill="#8c8c8c"/><path d="M956,61.1l3.8,3.8M959.8,61.1l-3.8,3.8" stroke="#fff" stroke-width="1"/><circle cx="957.9" cy="63" r="3.6" fill="none" stroke="#6a6a6a" stroke-width="0.5"/></svg>
<div class="a" style="left:772.6px;top:74px;width:194px;height:180.4px;background:#fff;border-top:1px solid #a8aeb8;border-left:1px solid #b8b8b8;"></div>
<div class="a" style="left:957.2px;top:75px;width:8.2px;height:179.4px;background:#f0f0f0;"></div>
<div class="a" style="left:957.4px;top:103.2px;width:7.8px;height:33.6px;background:#cdcdcd;"></div>
<svg width="967" height="524" viewBox="0 0 967 524"><path d="M959.2,81l2.1,-2.1l2.1,2.1M959.2,248.2l2.1,2.1l2.1,-2.1" fill="none" stroke="#333" stroke-width="0.9"/></svg>
<div class="t" style="left:906px;top:220.94px;font-size:7.32px;color:#111;transform:scaleX(0.820);font-weight:bold;">CMY</div>
<div class="t" style="left:901.2px;top:230.18px;font-size:6.83px;color:#222;transform:scaleX(0.820);">Seismic</div>
<div class="t" style="left:906.6px;top:239.58px;font-size:6.83px;color:#222;transform:scaleX(0.820);">Universe</div>
<div class="a" style="left:770.4px;top:254.4px;width:196.6px;height:22.6px;background:#a3c1e6;"></div>
<svg width="967" height="524" viewBox="0 0 967 524"><path d="M913,254.4h6l16,22.6h-22z" fill="#9dbbe0"/></svg>
<div class="a" style="left:770.4px;top:277px;width:196.6px;height:9px;background:linear-gradient(180deg,#bdbdbd,#ececec);"></div>
<div class="a" style="left:772.2px;top:286px;width:196px;height:226px;background:transparent;border-left:1px solid #cfcfcf;"></div>
<div class="a" style="left:775.6px;top:301.4px;width:188.2px;height:207.6px;background:#fff;"></div>
<div class="a" style="left:778.2px;top:306.2px;width:183.4px;height:126.2px;background:#fff;border:1px solid #dcdcdc;"></div>
<div class="a" style="left:780.6px;top:312.8px;width:178px;height:10.6px;background:#e1e1e1;border:1px solid #adadad;"></div>
<svg width="967" height="524" viewBox="0 0 967 524"><path d="M952.4,316.8l2,2l2,-2" fill="none" stroke="#444" stroke-width="0.7"/></svg>
<div class="a" style="left:780.6px;top:325.2px;width:178.2px;height:9.6px;background:linear-gradient(90deg,#000 0%,#000 0.5%,#0000c0 1.2%,#0000ff 8%,#0080ff 22%,#00ffff 36%,#00ff80 47%,#00ff00 58%,#80ff00 68%,#ffff00 79%,#ff8000 90%,#ff0000 100%);"></div>
<div class="a" style="left:786px;top:340.9px;width:124px;height:2px;background:#e8e8e8;border:0.5px solid #d6d6d6;"></div>
<div class="a" style="left:786px;top:354.9px;width:124px;height:2px;background:#e8e8e8;border:0.5px solid #d6d6d6;"></div>
<svg width="967" height="524" viewBox="0 0 967 524"><path d="M785.6,337.8h5.4v6.4l-2.7,2.8l-2.7,-2.8z" fill="#0a6fd6"/><path d="M904.4,351.2h5.6v6.6l-2.8,2.9l-2.8,-2.9z" fill="#0a6fd6"/></svg>
<div class="spin" style="left:914.2px;top:336.6px;width:35px;height:10.6px;line-height:8.6px;padding-left:2.4px;font-size:6.83px;"><span style="display:inline-block;transform-origin:0 50%;transform:scaleX(0.820);">0.00%</span></div>
<div class="a" style="left:950.4px;top:336.6px;width:6.8px;height:5.1px;background:#e8e8e8;border:0.6px solid #b0b0b0;"></div>
<div class="a" style="left:950.4px;top:342.1px;width:6.8px;height:5.1px;background:#e8e8e8;border:0.6px solid #b0b0b0;"></div>
<svg width="967" height="524" viewBox="0 0 967 524"><path d="M952.3,340.05l1.5,-1.7l1.5,1.7zM952.3,343.75l1.5,1.7l1.5,-1.7z" fill="#222"/></svg>
<div class="spin" style="left:914.2px;top:350.2px;width:35px;height:10.6px;line-height:8.6px;padding-left:2.4px;font-size:6.83px;"><span style="display:inline-block;transform-origin:0 50%;transform:scaleX(0.820);">100.00%</span></div>
<div class="a" style="left:950.4px;top:350.2px;width:6.8px;height:5.1px;background:#e8e8e8;border:0.6px solid #b0b0b0;"></div>
<div class="a" style="left:950.4px;top:355.7px;width:6.8px;height:5.1px;background:#e8e8e8;border:0.6px solid #b0b0b0;"></div>
<svg width="967" height="524" viewBox="0 0 967 524"><path d="M952.3,353.65l1.5,-1.7l1.5,1.7zM952.3,357.35l1.5,1.7l1.5,-1.7z" fill="#222"/></svg>
<div class="spin" style="left:914.2px;top:363.8px;width:35px;height:10.6px;line-height:8.6px;padding-left:2.4px;font-size:6.83px;"><span style="display:inline-block;transform-origin:0 50%;transform:scaleX(0.820);">50.00%</span></div>
<div class="a" style="left:950.4px;top:363.8px;width:6.8px;height:5.1px;background:#e8e8e8;border:0.6px solid #b0b0b0;"></div>
<div class="a" style="left:950.4px;top:369.3px;width:6.8px;height:5.1px;background:#e8e8e8;border:0.6px solid #b0b0b0;"></div>
<svg width="967" height="524" viewBox="0 0 967 524"><path d="M952.3,367.25l1.5,-1.7l1.5,1.7zM952.3,370.95l1.5,1.7l1.5,-1.7z" fill="#222"/></svg>
<div class="a" style="left:872px;top:366.4px;width:6.6px;height:6.6px;background:#fff;border:1px solid #5a5a5a;"></div>
<div class="t" style="left:879.6px;top:366.9px;font-size:6.65px;color:#111;transform:scaleX(0.820);">lock centre at</div>
<div class="t" style="left:780.2px;top:376.02px;font-size:6.47px;color:#111;transform:scaleX(0.820);">Minimum Value:</div>
<div class="t" style="left:824.2px;top:376.02px;font-size:6.47px;color:#111;transform:scaleX(0.820);">0.0</div>
<div class="t" style="left:780.2px;top:385.04px;font-size:6.47px;color:#111;transform:scaleX(0.820);">Maximum Value:</div>
<div class="t" style="left:824.2px;top:385.04px;font-size:6.47px;color:#111;transform:scaleX(0.820);">32767.0</div>
<div class="t" style="left:780.2px;top:394.06px;font-size:6.47px;color:#111;transform:scaleX(0.820);">Centre Value:</div>
<div class="t" style="left:824.2px;top:394.06px;font-size:6.47px;color:#111;transform:scaleX(0.820);">16383.5</div>
<div class="t" style="left:780.2px;top:403.08px;font-size:6.47px;color:#111;transform:scaleX(0.820);">Volume Min:</div>
<div class="t" style="left:824.2px;top:403.08px;font-size:6.47px;color:#111;transform:scaleX(0.820);">0.0</div>
<div class="t" style="left:780.2px;top:412.1px;font-size:6.47px;color:#111;transform:scaleX(0.820);">Volume Max:</div>
<div class="t" style="left:824.2px;top:412.1px;font-size:6.47px;color:#111;transform:scaleX(0.820);">32767.0</div>
<div class="btn" style="left:846.4px;top:420px;width:47.2px;height:10px;line-height:9.6px;font-size:6.47px;"><span style="display:inline-block;transform:scaleX(0.820);">Align Colourmap</span></div>
<div class="a" style="left:849.4px;top:435.6px;width:6.4px;height:6.4px;background:#fff;border:1px solid #5a5a5a;"></div>
<div class="t" style="left:856.8px;top:436.28px;font-size:6.83px;color:#111;transform:scaleX(0.820);">Interpolation</div>
<div class="btn" style="left:820.2px;top:444.6px;width:48.6px;height:10.2px;line-height:9.8px;font-size:6.59px;"><span style="display:inline-block;transform:scaleX(0.820);">Opacity...</span></div>
<div class="btn" style="left:871px;top:444.6px;width:47.8px;height:10.2px;line-height:9.8px;font-size:6.59px;"><span style="display:inline-block;transform:scaleX(0.820);">Voxel Pick</span></div>
<div class="btn" style="left:820.2px;top:457.2px;width:48.6px;height:10.2px;line-height:9.8px;font-size:6.59px;"><span style="display:inline-block;transform:scaleX(0.820);">Extents...</span></div>
<!--DIALOG-->
<div class="a" style="left:0px;top:496.6px;width:770px;height:16px;background:#f0f0f0;"></div>
<div class="a" style="left:3.4px;top:433.2px;width:7.6px;height:61.2px;background:#e6e6e6;border:1px solid #a4a4a4;border-right-color:#d8d8d8;border-bottom-color:#d8d8d8;"></div>
<div class="a" style="left:5.2px;top:436.6px;width:4.6px;height:54.6px;background:repeating-linear-gradient(180deg,#a8a8a8 0,#a8a8a8 0.8px,#e2e2e2 0.8px,#e2e2e2 2.4px);"></div>
<div class="a" style="left:5.2px;top:436.6px;width:4.6px;height:54.6px;background:linear-gradient(180deg,rgba(0,0,0,1) 0%,rgba(0,0,0,0.95) 5%,rgba(40,40,40,0.55) 10%,rgba(60,60,60,0.25) 22%,rgba(255,255,255,0.1) 40%,rgba(255,255,255,0.2) 50%,rgba(255,255,255,0.1) 60%,rgba(60,60,60,0.25) 78%,rgba(40,40,40,0.55) 90%,rgba(0,0,0,0.95) 95%,rgba(0,0,0,1) 100%);"></div>
<div class="a" style="left:759.4px;top:433.6px;width:7.6px;height:60.4px;background:#e6e6e6;border:1px solid #a4a4a4;border-right-color:#d8d8d8;border-bottom-color:#d8d8d8;"></div>
<div class="a" style="left:761.2px;top:437px;width:4.6px;height:53.8px;background:repeating-linear-gradient(180deg,#a8a8a8 0,#a8a8a8 0.8px,#e2e2e2 0.8px,#e2e2e2 2.4px);"></div>
<div class="a" style="left:761.2px;top:437px;width:4.6px;height:53.8px;background:linear-gradient(180deg,rgba(0,0,0,1) 0%,rgba(0,0,0,0.95) 5%,rgba(40,40,40,0.55) 10%,rgba(60,60,60,0.25) 22%,rgba(255,255,255,0.1) 40%,rgba(255,255,255,0.2) 50%,rgba(255,255,255,0.1) 60%,rgba(60,60,60,0.25) 78%,rgba(40,40,40,0.55) 90%,rgba(0,0,0,0.95) 95%,rgba(0,0,0,1) 100%);"></div>
<div class="t" style="left:2.2px;top:500.7px;font-size:8px;color:#222;transform:scaleX(1.000);">Y</div>
<div class="t" style="left:13px;top:500.7px;font-size:8px;color:#222;transform:scaleX(1.000);">X</div>
<div class="a" style="left:20.2px;top:501px;width:60.8px;height:7.8px;background:#e6e6e6;border:1px solid #a4a4a4;border-right-color:#d8d8d8;border-bottom-color:#d8d8d8;"></div>
<div class="a" style="left:23.6px;top:502.8px;width:54.2px;height:4.8px;background:repeating-linear-gradient(90deg,#a8a8a8 0,#a8a8a8 0.8px,#e2e2e2 0.8px,#e2e2e2 2.4px);"></div>
<div class="a" style="left:23.6px;top:502.8px;width:54.2px;height:4.8px;background:linear-gradient(90deg,rgba(0,0,0,1) 0%,rgba(0,0,0,0.95) 5%,rgba(40,40,40,0.55) 10%,rgba(60,60,60,0.25) 22%,rgba(255,255,255,0.1) 40%,rgba(255,255,255,0.2) 50%,rgba(255,255,255,0.1) 60%,rgba(60,60,60,0.25) 78%,rgba(40,40,40,0.55) 90%,rgba(0,0,0,0.95) 95%,rgba(0,0,0,1) 100%);"></div>
<div class="t" style="left:752.2px;top:501.57px;font-size:6.95px;color:#111;transform:scaleX(0.820);font-weight:bold;">Zoom</div>
<div class="a" style="left:558.6px;top:58px;width:354.6px;height:271.9px;background:#f0f0f0;border:1px solid #b4b4b4;box-shadow:0 0 3px rgba(0,0,0,0.22);"></div>
<div class="a" style="left:559.1px;top:58.5px;width:353.6px;height:14.5px;background:#fff;"></div>
<svg width="967" height="524" viewBox="0 0 967 524"><g fill="none" stroke-width="0.9"><rect x="563" y="63.4" width="1.8" height="3" rx="0.8" stroke="#e8602a"/><rect x="565.9" y="63.4" width="1.8" height="3" rx="0.8" stroke="#2a6ad8"/><rect x="568.8" y="63.4" width="1.8" height="3" rx="0.8" stroke="#38a838"/></g><path d="M562.6,67.9h2.6" stroke="#e8602a" stroke-width="0.5"/><path d="M565.5,67.9h2.6" stroke="#2a6ad8" stroke-width="0.5"/><path d="M568.4,67.9h2.6" stroke="#38a838" stroke-width="0.5"/>
<g stroke="#8a8a8a" stroke-width="0.55" fill="none"><path d="M853,65h5"/><rect x="876" y="62.4" width="4.4" height="4.6"/><path d="M899.2,62.4l4.8,4.8M904,62.4l-4.8,4.8"/></g></svg>
<div class="t" style="left:573.4px;top:61.74px;font-size:7.32px;color:#8c8c8c;transform:scaleX(0.820);">Opacity Editor</div>
<div class="a" style="left:561.4px;top:80px;width:348.8px;height:230.4px;background:transparent;border:1px solid #dcdcdc;"></div>
<div class="t" style="left:564.4px;top:76.81px;font-size:6.59px;color:#111;transform:scaleX(0.820);background:#f0f0f0;padding:0 1px;">Histogram</div>
<div class="a" style="left:562.6px;top:84px;width:345.2px;height:13px;background:#fff;border-top:1px solid #a8a8a8;border-bottom:1px solid #e6e6e6;"></div>
<div class="a" style="left:564.3px;top:85.1px;width:10.4px;height:10.4px;background:#cce4f7;border:0.6px solid #8cc0ea;"></div>
<svg width="967" height="524" viewBox="0 0 967 524"><path d="M565.6,94.6q2.4,-1 3.4,-6.4q1,5.4 3.8,6.4z" fill="#1010f0"/><path d="M565.4,94.6v-8.4M565.2,94.7h9" stroke="#222" stroke-width="0.7" fill="none"/><path d="M567.4,94.2l6.4,-6.4" stroke="#f02020" stroke-width="0.7"/>
<path d="M577.6,94.6q2.6,-1 3.2,-5.6q0.8,4.6 3.6,5.6z" fill="#1010f0"/><path d="M577.2,94.6v-8.4M577,94.7h8.6" stroke="#222" stroke-width="0.7" fill="none"/><path d="M577.6,89h7.4" stroke="#f02020" stroke-width="0.8"/></svg>
<div class="t" style="left:590.8px;top:88.39px;font-size:6.71px;color:#111;transform:scaleX(0.820);">Normalisation:</div>
<div class="a" style="left:627.2px;top:86.2px;width:42.2px;height:9.6px;background:#e6e6e6;border:1px solid #c0c0c0;"></div>
<div class="t" style="left:629.2px;top:87.61px;font-size:6.59px;color:#111;transform:scaleX(0.820);">Logarithmic</div>
<svg width="967" height="524" viewBox="0 0 967 524"><path d="M662.6,90.2l1.9,1.9l1.9,-1.9" fill="none" stroke="#333" stroke-width="0.7"/><path d="M672.4,89.6l1.1,-1.3l1.1,1.3zM672.4,92.4l1.1,1.3l1.1,-1.3z" fill="#333"/></svg>
<div class="btn" style="left:682px;top:86.4px;width:37px;height:9.4px;line-height:9px;font-size:6.59px;"><span style="display:inline-block;transform:scaleX(0.820);">Reset Line</span></div>
<div class="a" style="left:565.6px;top:99px;width:340.4px;height:206.6px;background:#fff;"></div>
<div class="t" style="left:612px;top:113.88px;font-size:5.79px;color:#000;transform:scaleX(0.820);font-weight:bold;letter-spacing:0.2px;">Opacity : 0.00</div>
<div class="t" style="left:794.8px;top:113.88px;font-size:5.79px;color:#000;transform:scaleX(0.820);font-weight:bold;letter-spacing:0.36px;">Bin : 22336.00 -&gt; 22400.00</div>
<svg width="967" height="524" viewBox="0 0 967 524">
<path d="M650.8,281.0 L650.8,268.0 L652.0,258.0 L655.0,245.0 L660.0,234.0 L667.0,224.0 L674.0,216.5 L685.0,209.0 L698.0,203.0 L710.0,198.6 L720.0,196.6 L730.0,196.0 L742.0,196.8 L755.0,199.4 L770.0,203.8 L785.0,209.0 L800.0,214.5 L810.0,217.6 L816.0,218.8 L824.0,218.6 L835.0,217.4 L848.0,216.0 L860.0,214.6 L860.0,281.0 z" fill="#0000fa"/>
<path d="M860,171v44" stroke="#a8a8f8" stroke-width="1"/>
<path d="M606,281.4h254.4M612,281.4v2.4M673.6,281.4v2.4M735.6,281.4v2.4M798.2,281.4v2.4M860,281.4v2.4" stroke="#555" stroke-width="0.6" fill="none"/>
<path d="M611.8,125.2v155.4" stroke="#2020ff" stroke-width="0.8"/>
<path d="M612,280.5h86.3v-154.6h161.7" fill="none" stroke="#ff2828" stroke-width="0.65"/>
<path d="M704,284.8h46.4v-3.2l9.6,6.2l-9.6,6.2v-3.2h-46.4z" fill="#5b9bd5"/>
<text x="630.6" y="179" font-family="Liberation Sans, DejaVu Sans, sans-serif" font-size="11.4" fill="#111" textLength="61" lengthAdjust="spacingAndGlyphs">Data clipped</text>
<text x="721.2" y="179" font-family="Liberation Sans, DejaVu Sans, sans-serif" font-size="11.4" fill="#111" textLength="71.6" lengthAdjust="spacingAndGlyphs">Data in display</text>
</svg>
<div class="t" style="left:611.8px;top:291.26px;font-size:5.98px;color:#000;transform:scaleX(0.820);font-weight:bold;letter-spacing:0.3px;">0.00</div>
<div class="t" style="left:837.8px;top:291.26px;font-size:5.98px;color:#000;transform:scaleX(0.820);font-weight:bold;letter-spacing:0.36px;">32760.00</div>
<div class="a" style="left:612px;top:296px;width:248px;height:4px;background:linear-gradient(90deg,#000 0%,#000 0.5%,#0000c0 1.2%,#0000ff 8%,#0080ff 22%,#00ffff 36%,#00ff80 47%,#00ff00 58%,#80ff00 68%,#ffff00 79%,#ff8000 90%,#ff0000 100%);"></div>
<div class="btn" style="left:749.4px;top:317.2px;width:36.2px;height:10.3px;line-height:9.9px;font-size:6.83px;"><span style="display:inline-block;transform:scaleX(0.820);">OK</span></div>
<div class="btn" style="left:790.2px;top:317.2px;width:36.6px;height:10.3px;line-height:9.9px;font-size:6.83px;"><span style="display:inline-block;transform:scaleX(0.820);">Cancel</span></div>
<div class="btn" style="left:831.4px;top:317.2px;width:36.6px;height:10.3px;line-height:9.9px;font-size:6.83px;border:1px solid #0078d7;box-shadow:inset 0 0 0 0.5px rgba(0,120,215,0.55);"><span style="display:inline-block;transform:scaleX(0.820);">Apply</span></div>
<div class="btn" style="left:872.2px;top:317.2px;width:36.6px;height:10.3px;line-height:9.9px;font-size:6.83px;"><span style="display:inline-block;transform:scaleX(0.820);">Help</span></div>
<div class="a" style="left:0px;top:511.6px;width:967px;height:12.4px;background:#f0f0f0;border-top:1px solid #d4d4d4;"></div>
<div class="t" style="left:0.8px;top:515.78px;font-size:6.92px;color:#111;transform:scaleX(0.820);">Inline : 303, Crossline : 12796, Time : 1860.00, World X : 175915, World Y : 7623294, Value : 0</div>
<div class="t" style="left:600.3px;top:515.81px;font-size:6.59px;color:#111;transform:scaleX(0.820);">FAULT_EXPRESSION_Detect_CMY</div>
<div class="a" style="left:369.5px;top:513px;width:0.6px;height:11px;background:#d0d0d0;"></div>
<div class="a" style="left:445.6px;top:513px;width:0.6px;height:11px;background:#d0d0d0;"></div>
</body></html>
